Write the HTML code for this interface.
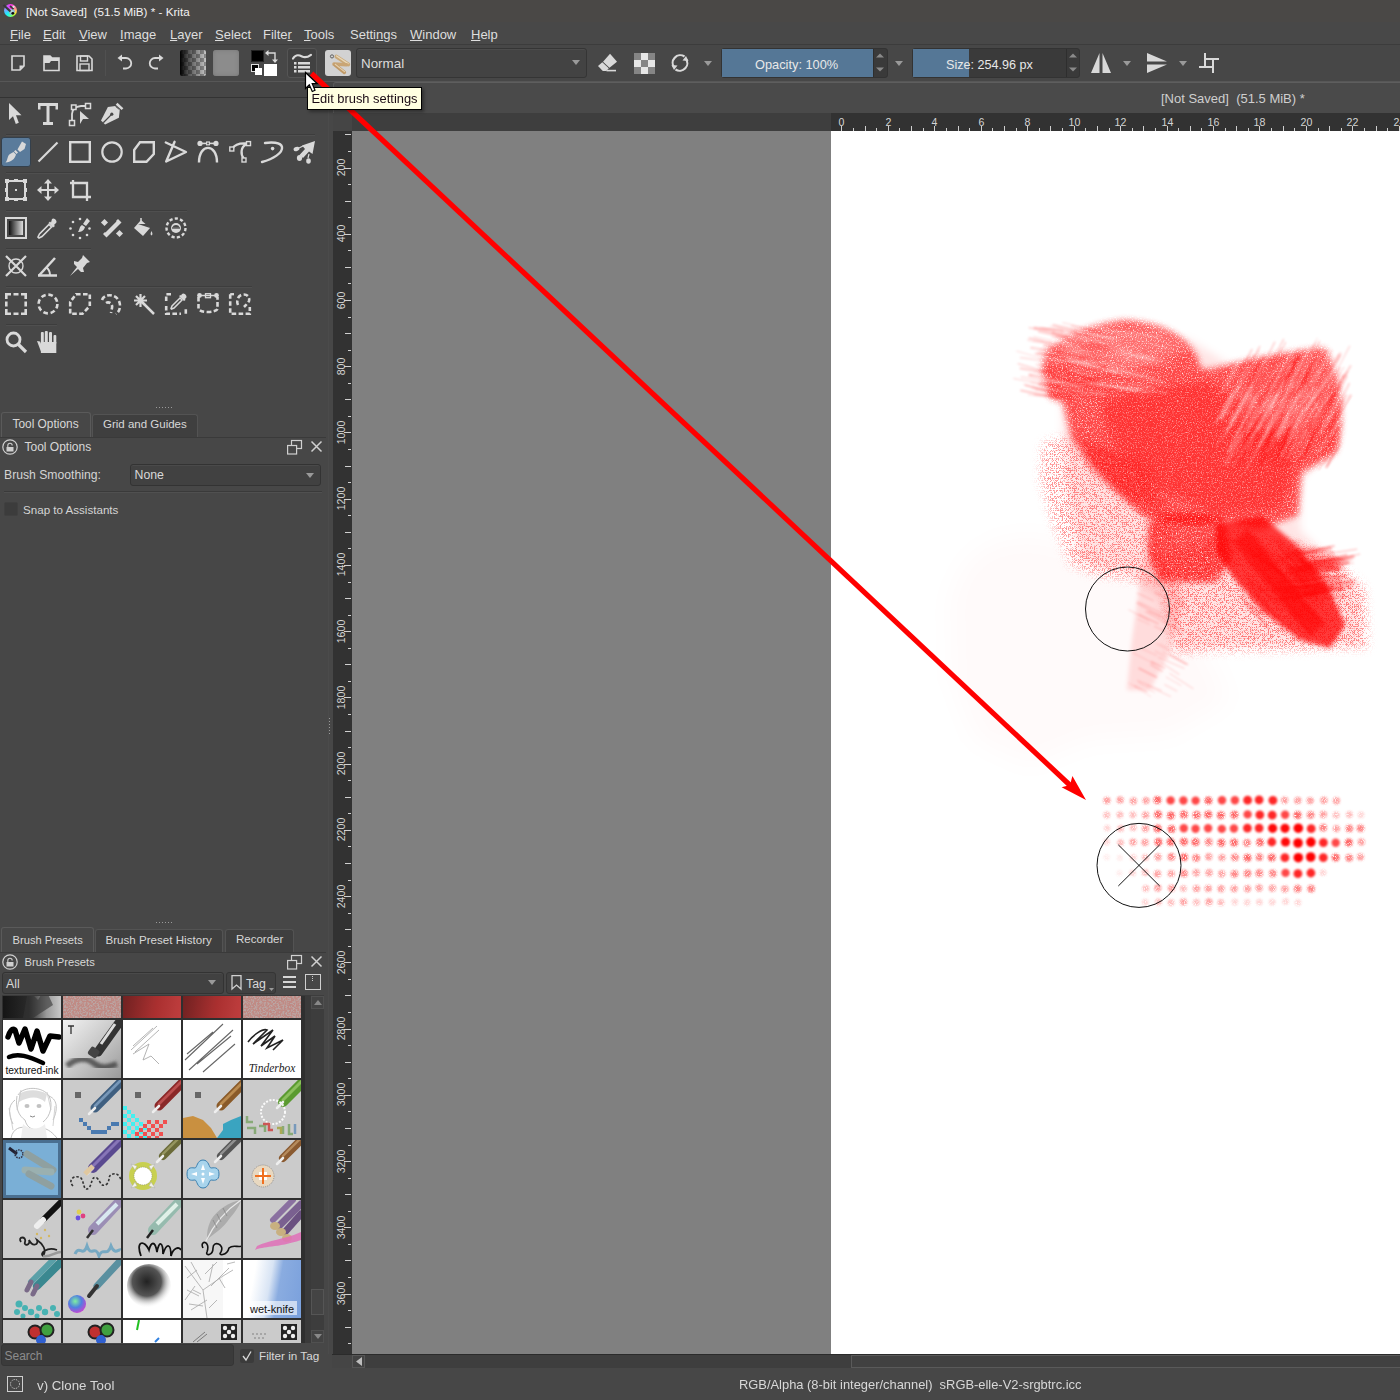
<!DOCTYPE html>
<html><head><meta charset="utf-8"><style>
*{margin:0;padding:0;box-sizing:border-box}
html,body{width:1400px;height:1400px;overflow:hidden;background:#474747;font-family:"Liberation Sans",sans-serif;color:#dcdcdc}
.a{position:absolute}
.t{position:absolute;white-space:nowrap;line-height:1}
svg{position:absolute;overflow:visible}
</style></head><body>
<div class="a" style="left:0px;top:0px;width:1400px;height:22px;background:#4a4846"></div>
<div class="a" style="left:3.6px;top:4px;width:13px;height:13px;border-radius:50%;background:conic-gradient(from 0deg,#ff30f0 0deg,#ff80a0 60deg,#ffe040 110deg,#a0ff40 150deg,#30ffd0 200deg,#20e8ff 230deg,#80a0ff 280deg,#c060ff 320deg,#ff30f0 360deg)"></div>
<div class="a" style="left:9px;top:9px;width:6px;height:6px;border-radius:50%;background:radial-gradient(circle at 40% 40%,#c0e0d0 0,#80b0e0 60%,transparent 70%)"></div>
<svg style="left:0px;top:0px;" width="22" height="22" viewBox="0 0 22 22"><path d="M3.5 5 L10.5 11.5" stroke="#3a3a38" stroke-width="2.2"/><path d="M10 6 L13.5 9" stroke="#3a3a38" stroke-width="1.8"/><circle cx="12.8" cy="13.3" r="1.4" fill="#0a0a0a"/><circle cx="13.6" cy="6.8" r="1.1" fill="#d8f0e0"/></svg>
<div class="t" style="left:26px;top:5.60px;font-size:11.7px;color:#f2f2f2;">[Not Saved]&nbsp; (51.5 MiB) * - Krita</div>
<div class="a" style="left:0px;top:22px;width:1400px;height:22px;background:#484848"></div>
<div class="a" style="left:0px;top:44px;width:1400px;height:1px;background:#3c3c3c"></div>
<div class="t" style="left:10px;top:28.00px;font-size:13px;color:#dedede;"><span style="text-decoration:underline;text-underline-offset:1px">F</span>ile</div>
<div class="t" style="left:43px;top:28.00px;font-size:13px;color:#dedede;"><span style="text-decoration:underline;text-underline-offset:1px">E</span>dit</div>
<div class="t" style="left:79px;top:28.00px;font-size:13px;color:#dedede;"><span style="text-decoration:underline;text-underline-offset:1px">V</span>iew</div>
<div class="t" style="left:120px;top:28.00px;font-size:13px;color:#dedede;"><span style="text-decoration:underline;text-underline-offset:1px">I</span>mage</div>
<div class="t" style="left:170px;top:28.00px;font-size:13px;color:#dedede;"><span style="text-decoration:underline;text-underline-offset:1px">L</span>ayer</div>
<div class="t" style="left:215px;top:28.00px;font-size:13px;color:#dedede;"><span style="text-decoration:underline;text-underline-offset:1px">S</span>elect</div>
<div class="t" style="left:263px;top:28.00px;font-size:13px;color:#dedede;">Filte<span style="text-decoration:underline;text-underline-offset:1px">r</span></div>
<div class="t" style="left:304px;top:28.00px;font-size:13px;color:#dedede;"><span style="text-decoration:underline;text-underline-offset:1px">T</span>ools</div>
<div class="t" style="left:350px;top:28.00px;font-size:13px;color:#dedede;">Setti<span style="text-decoration:underline;text-underline-offset:1px">n</span>gs</div>
<div class="t" style="left:410px;top:28.00px;font-size:13px;color:#dedede;"><span style="text-decoration:underline;text-underline-offset:1px">W</span>indow</div>
<div class="t" style="left:471px;top:28.00px;font-size:13px;color:#dedede;"><span style="text-decoration:underline;text-underline-offset:1px">H</span>elp</div>
<div class="a" style="left:0px;top:45px;width:1400px;height:36px;background:#474747"></div>
<div class="a" style="left:0px;top:81px;width:1400px;height:1px;background:#575757"></div>
<svg style="left:11px;top:55px;" width="15" height="17" viewBox="0 0 15 17"><path d="M1 1 H13 V11 L9 15 H1 Z" fill="none" stroke="#d9d9d9" stroke-width="1.6"/><path d="M13 10.5 H8.5 V15 Z" fill="#d9d9d9"/></svg>
<svg style="left:43px;top:55px;" width="17" height="17" viewBox="0 0 17 17"><path d="M1 1 H7 L9 3 H16 V15.5 H1 Z" fill="none" stroke="#d9d9d9" stroke-width="1.6"/><path d="M1 1 H7 L9 3 H16 V6 H8 L6.5 8 H1 Z" fill="#d9d9d9"/></svg>
<svg style="left:76px;top:55px;" width="17" height="17" viewBox="0 0 17 17"><path d="M1 1 H13 L16 4 V15.5 H1 Z" fill="none" stroke="#d9d9d9" stroke-width="1.6"/><rect x="4.5" y="1" width="7" height="5" fill="none" stroke="#d9d9d9" stroke-width="1.4"/><rect x="4" y="9" width="9" height="6.5" fill="none" stroke="#d9d9d9" stroke-width="1.4"/></svg>
<div class="a" style="left:105px;top:50px;width:1px;height:26px;background:#505050"></div>
<svg style="left:117px;top:54px;" width="16" height="17" viewBox="0 0 16 17"><path d="M4 4 H9 A5 5 0 0 1 9 14.5 H6" fill="none" stroke="#d9d9d9" stroke-width="1.8"/><path d="M0.5 4 L5 0.5 V7.5 Z" fill="#d9d9d9"/></svg>
<svg style="left:148px;top:54px;" width="16" height="17" viewBox="0 0 16 17"><path d="M12 4 H7 A5 5 0 0 0 7 14.5 H10" fill="none" stroke="#d9d9d9" stroke-width="1.8"/><path d="M15.5 4 L11 0.5 V7.5 Z" fill="#d9d9d9"/></svg>
<div class="a" style="left:180px;top:50px;width:26px;height:26px;border-radius:2px;overflow:hidden;background:
linear-gradient(90deg,#000 0%,rgba(0,0,0,0.6) 30%,rgba(0,0,0,0) 100%),
repeating-conic-gradient(#8a8a8a 0 25%,#c4c4c4 0 50%) 0 0/8px 8px"></div>
<div class="a" style="left:213px;top:50px;width:26px;height:26px;background:#8c8c8c;border-radius:3px;box-shadow:inset 0 0 4px #777"></div>
<div class="a" style="left:251px;top:50px;width:13px;height:12px;background:#000;border:1px solid #222"></div>
<div class="a" style="left:264px;top:64px;width:13px;height:12px;background:#fff"></div>
<div class="a" style="left:251px;top:64px;width:8px;height:8px;background:#000;border:1px solid #ddd"></div>
<div class="a" style="left:255px;top:68px;width:7px;height:7px;background:#fff"></div>
<svg style="left:265px;top:50px;" width="13" height="13" viewBox="0 0 13 13"><path d="M2.5 3 H10 V10" fill="none" stroke="#d9d9d9" stroke-width="1.4"/><path d="M0 3 L3.5 0 V6 Z M10 13 L7 9.5 H13 Z" fill="#d9d9d9"/></svg>
<div class="a" style="left:287px;top:48px;width:30px;height:30px;background:#414141;border:1px solid #555;border-radius:3px"></div>
<svg style="left:292px;top:53px;" width="20" height="20" viewBox="0 0 20 20"><path d="M1 5.5 C4 1 7 2 10 3.5 C13 5 16 4 19 1.8" fill="none" stroke="#d9d9d9" stroke-width="2.2" stroke-linecap="round"/><rect x="2" y="9" width="2.5" height="2.5" fill="#d9d9d9"/><rect x="2" y="13" width="2.5" height="2.5" fill="#d9d9d9"/><rect x="2" y="17" width="2.5" height="2.5" fill="#d9d9d9"/><rect x="6" y="9" width="12" height="2.5" fill="#d9d9d9"/><rect x="6" y="13" width="12" height="2.5" fill="#d9d9d9"/><rect x="6" y="17" width="12" height="2.5" fill="#d9d9d9"/></svg>
<div class="a" style="left:325px;top:50px;width:26px;height:26px;background:#d2d2d2;border-radius:3px"></div>
<svg style="left:325px;top:50px;" width="26" height="26" viewBox="0 0 26 26"><circle cx="7" cy="6.4" r="1.6" fill="none" stroke="#555" stroke-width="0.9"/><path d="M11.4 6.6 L23.3 14.4" stroke="#c8a878" stroke-width="3.8" stroke-linecap="round"/><path d="M11.6 6 L23 13.6" stroke="#ead8b8" stroke-width="1.4" stroke-linecap="round"/><path d="M9 14 L21.5 14.8" stroke="#c9a575" stroke-width="3.6" stroke-linecap="round"/><path d="M10 14.8 L19.3 22.3" stroke="#c09a68" stroke-width="3.6" stroke-linecap="round"/><path d="M10.2 14.2 L19.5 21.6" stroke="#e6d0ac" stroke-width="1.2" stroke-linecap="round"/></svg>
<div class="a" style="left:356px;top:48px;width:231px;height:30px;background:#434343;border:1px solid #353535;border-radius:3px;box-shadow:inset 0 1px 0 #4c4c4c"></div>
<div class="t" style="left:361px;top:56.66px;font-size:13.4px;color:#dcdcdc;">Normal</div>
<svg style="left:572px;top:60px;" width="8" height="5" viewBox="0 0 8 5"><path d="M0 0 H8 L4 5 Z" fill="#9a9a9a"/></svg>
<svg style="left:598px;top:53px;" width="20" height="20" viewBox="0 0 20 20"><path d="M12 0.8 L19 8.7 L11.5 14.7 L5 8.7 Z" fill="#d9d9d9"/><path d="M0 13 L4.3 9.3 L10.8 15.3 L8.3 18 H4.8 Z" fill="#d9d9d9"/><path d="M8.5 17.6 H18" stroke="#d9d9d9" stroke-width="1.6"/></svg>
<svg style="left:634px;top:53px;" width="21" height="21" viewBox="0 0 21 21"><rect width="21" height="21" fill="#e6e6e6"/><g fill="#858585"><rect x="0" y="0" width="7" height="7"/><rect x="14" y="0" width="7" height="7"/><rect x="7" y="7" width="7" height="7"/><rect x="0" y="14" width="7" height="7"/><rect x="14" y="14" width="7" height="7"/></g></svg>
<svg style="left:670px;top:53px;" width="20" height="20" viewBox="0 0 20 20"><path d="M4.3 14.5 A7.6 7.6 0 0 1 14.5 3.5" fill="none" stroke="#d9d9d9" stroke-width="2.2"/><path d="M15.7 5.5 A7.6 7.6 0 0 1 5.5 16.5" fill="none" stroke="#d9d9d9" stroke-width="2.2"/><path d="M1.5 12 L7.5 12.5 L4 17 Z M18.5 8 L12.5 7.5 L16 3 Z" fill="#d9d9d9"/></svg>
<svg style="left:704px;top:61px;" width="8" height="5" viewBox="0 0 8 5"><path d="M0 0 H8 L4 5 Z" fill="#9a9a9a"/></svg>
<div class="a" style="left:721px;top:48px;width:167px;height:30px;background:#3a3a3a;border:1px solid #333;border-radius:3px"></div>
<div class="a" style="left:722px;top:49px;width:151px;height:28px;background:#557796"></div>
<div class="t" style="left:755px;top:59.16px;font-size:12.8px;color:#e8e8e8;">Opacity: 100%</div>
<svg style="left:875px;top:53px;" width="10" height="20" viewBox="0 0 10 20"><path d="M1 4.5 L5 0.5 L9 4.5 Z M1 14.5 L5 18.5 L9 14.5 Z" fill="#8a8a8a"/></svg>
<div class="a" style="left:873px;top:49px;width:1px;height:28px;background:#2e2e2e"></div>
<svg style="left:895px;top:61px;" width="8" height="5" viewBox="0 0 8 5"><path d="M0 0 H8 L4 5 Z" fill="#9a9a9a"/></svg>
<div class="a" style="left:912px;top:48px;width:168px;height:30px;background:#3a3a3a;border:1px solid #333;border-radius:3px"></div>
<div class="a" style="left:913px;top:49px;width:56px;height:28px;background:#557796"></div>
<div class="t" style="left:946px;top:59.33px;font-size:12.6px;color:#e8e8e8;">Size: 254.96 px</div>
<svg style="left:1068px;top:53px;" width="10" height="20" viewBox="0 0 10 20"><path d="M1 4.5 L5 0.5 L9 4.5 Z M1 14.5 L5 18.5 L9 14.5 Z" fill="#8a8a8a"/></svg>
<div class="a" style="left:1066px;top:49px;width:1px;height:28px;background:#2e2e2e"></div>
<svg style="left:1090px;top:52px;" width="22" height="22" viewBox="0 0 22 22"><path d="M9.5 1 V21 H1 Z M12.5 1 V21 H21 Z" fill="#d9d9d9"/></svg>
<svg style="left:1123px;top:61px;" width="8" height="5" viewBox="0 0 8 5"><path d="M0 0 H8 L4 5 Z" fill="#9a9a9a"/></svg>
<svg style="left:1146px;top:52px;" width="22" height="22" viewBox="0 0 22 22"><path d="M1 1 L21 9.5 H1 Z M1 12.5 H21 L1 21 Z" fill="#d9d9d9"/></svg>
<svg style="left:1179px;top:61px;" width="8" height="5" viewBox="0 0 8 5"><path d="M0 0 H8 L4 5 Z" fill="#9a9a9a"/></svg>
<svg style="left:1199px;top:52px;" width="21" height="21" viewBox="0 0 21 21"><path d="M6 1 V15.5 M5 7 H20 M0 15 H15 M14 6 V21" fill="none" stroke="#d9d9d9" stroke-width="2"/></svg>
<div class="a" style="left:0px;top:82px;width:333px;height:15px;background:#464646"></div>
<div class="a" style="left:0px;top:97px;width:333px;height:1px;background:#333"></div>
<div class="a" style="left:333px;top:82px;width:1067px;height:31px;background:#4a4a4a;border-top:1px solid #5e5e5e;border-left:1px solid #5a5a5a;border-top-left-radius:3px"></div>
<div class="t" style="left:1161px;top:92.00px;font-size:13px;color:#cfcfcf;">[Not Saved]&nbsp; (51.5 MiB) *</div>
<div class="a" style="left:0px;top:98px;width:333px;height:1270px;background:#474747"></div>
<div class="a" style="left:6px;top:134px;width:309px;height:1px;background:#3d3d3d;box-shadow:0 1px 0 #4f4f4f"></div>
<div class="a" style="left:6px;top:172px;width:84px;height:1px;background:#3d3d3d;box-shadow:0 1px 0 #4f4f4f"></div>
<div class="a" style="left:6px;top:210px;width:181px;height:1px;background:#3d3d3d;box-shadow:0 1px 0 #4f4f4f"></div>
<div class="a" style="left:6px;top:248px;width:85px;height:1px;background:#3d3d3d;box-shadow:0 1px 0 #4f4f4f"></div>
<div class="a" style="left:6px;top:286px;width:246px;height:1px;background:#3d3d3d;box-shadow:0 1px 0 #4f4f4f"></div>
<div class="a" style="left:6px;top:324px;width:51px;height:1px;background:#3d3d3d;box-shadow:0 1px 0 #4f4f4f"></div>
<svg style="left:5px;top:103px;" width="22" height="22" viewBox="0 0 22 22"><path d="M4 0 V17 L8 13.3 L10.8 21 L13.8 19.8 L11 12.3 H16.5 Z" fill="#d9d9d9"/></svg>
<svg style="left:37px;top:103px;" width="22" height="22" viewBox="0 0 22 22"><path d="M1 0 H21 V6.5 H18.5 V3 H12.5 V19 H16 V22 H6 V19 H9.5 V3 H3.5 V6.5 H1 Z" fill="#d9d9d9"/></svg>
<svg style="left:69px;top:103px;" width="22" height="22" viewBox="0 0 22 22"><path d="M3 19 V11 Q3 4 12 3 H18" fill="none" stroke="#d9d9d9" stroke-width="1.8"/><rect x="0.5" y="17.5" width="5" height="5" fill="#474747" stroke="#d9d9d9" stroke-width="1.5"/><rect x="2.5" y="2" width="4.5" height="4.5" fill="#474747" stroke="#d9d9d9" stroke-width="1.5"/><rect x="16.5" y="0.5" width="5" height="5" fill="#474747" stroke="#d9d9d9" stroke-width="1.5"/><path d="M11 8 L20 16 H14 L11 21 Z" fill="#d9d9d9"/></svg>
<svg style="left:101px;top:103px;" width="22" height="22" viewBox="0 0 22 22"><path d="M6.9 4.1 L14.4 3.1 L18.8 6.8 L17.9 14.8 L4.1 21.5 L0 17.6 Z" fill="#d9d9d9"/><path d="M2.3 19.7 L10.6 11.4" stroke="#474747" stroke-width="1.3"/><circle cx="10.8" cy="11.2" r="1.6" fill="#474747"/><path d="M15.6 0.7 L21.5 6.1" stroke="#d9d9d9" stroke-width="2.6"/><path d="M14.5 3.5 L18.3 6.5" stroke="#474747" stroke-width="0.8"/></svg>
<div class="a" style="left:1px;top:137px;width:30px;height:30px;background:#5a7b9b;border:1px solid #34404c;border-radius:3px"></div>
<svg style="left:5px;top:141px;" width="22" height="22" viewBox="0 0 22 22"><path d="M17 0.5 L21 3 L19.5 8 L15 11 L12.5 8.5 L15 4 Z" fill="#d9d9d9"/><path d="M10.5 9 L13 11.5 L11.5 13 L9 10.5 Z" fill="#d9d9d9"/><path d="M8.5 11 L11 13.5 C10 18 6 21 0.5 21.5 C3 19 2 15 5 13 Z" fill="#d9d9d9"/></svg>
<svg style="left:37px;top:141px;" width="22" height="22" viewBox="0 0 22 22"><path d="M1.5 20.5 L20.5 1.5" fill="none" stroke="#d9d9d9" stroke-width="2.2"/></svg>
<svg style="left:69px;top:141px;" width="22" height="22" viewBox="0 0 22 22"><rect x="1.2" y="1.2" width="19.6" height="19.6" fill="none" stroke="#d9d9d9" stroke-width="2.4"/></svg>
<svg style="left:101px;top:141px;" width="22" height="22" viewBox="0 0 22 22"><circle cx="11" cy="11" r="9.7" fill="none" stroke="#d9d9d9" stroke-width="2.2"/></svg>
<svg style="left:133px;top:141px;" width="22" height="22" viewBox="0 0 22 22"><path d="M7 1.2 H20.8 V13 L13.5 20.8 H1.2 V9 Z" fill="none" stroke="#d9d9d9" stroke-width="2.4"/></svg>
<svg style="left:165px;top:141px;" width="22" height="22" viewBox="0 0 22 22"><path d="M0.8 1.5 L21 11 L1.2 20.5 L9.6 0.8" fill="none" stroke="#d9d9d9" stroke-width="2.4" stroke-linecap="round" stroke-linejoin="round"/></svg>
<svg style="left:197px;top:141px;" width="22" height="22" viewBox="0 0 22 22"><path d="M2 21.5 C2 2 20 2 20 21.5" fill="none" stroke="#d9d9d9" stroke-width="2.4"/><path d="M3 2.4 H19" fill="none" stroke="#d9d9d9" stroke-width="1.6"/><circle cx="3" cy="2.4" r="2.6" fill="#d9d9d9"/><circle cx="19" cy="2.4" r="2.6" fill="#d9d9d9"/><rect x="9" y="0.4" width="4" height="4" fill="#d9d9d9"/><rect x="10.2" y="1.6" width="1.6" height="1.6" fill="#474747"/></svg>
<svg style="left:229px;top:141px;" width="22" height="22" viewBox="0 0 22 22"><path d="M3.5 7.5 C6 3 12 2 18 2.5 M17 3.5 C12 6 11 13 15 18" fill="none" stroke="#d9d9d9" stroke-width="2.3"/><rect x="0.8" y="6" width="4" height="4" fill="#474747" stroke="#d9d9d9" stroke-width="1.4"/><rect x="17.5" y="0.6" width="4" height="4" fill="#474747" stroke="#d9d9d9" stroke-width="1.4"/><rect x="13" y="17" width="4" height="4" fill="#474747" stroke="#d9d9d9" stroke-width="1.4"/></svg>
<svg style="left:261px;top:141px;" width="22" height="22" viewBox="0 0 22 22"><path d="M1 21 C12 18 22 12 21 6 C20 1 10 1 4 2" fill="none" stroke="#d9d9d9" stroke-width="2.4" stroke-linecap="round"/><circle cx="11.6" cy="7.6" r="1.8" fill="#d9d9d9"/></svg>
<svg style="left:293px;top:141px;" width="22" height="22" viewBox="0 0 22 22"><path d="M22 0 L19.5 13 L16 10.5 L10 17 L6.5 14 L12 8 L9 4.5 Z" fill="#d9d9d9"/><ellipse cx="3.5" cy="8" rx="3" ry="2" transform="rotate(-20 3.5 8)" fill="#d9d9d9"/><ellipse cx="6.5" cy="17" rx="2.6" ry="3" fill="#d9d9d9"/><ellipse cx="15.5" cy="20" rx="2.3" ry="2.8" fill="#d9d9d9"/><path d="M6 7 L10 5 M8 14 L11 11 M15 17 L16 13" stroke="#d9d9d9" stroke-width="1.2"/></svg>
<svg style="left:5px;top:179px;" width="22" height="22" viewBox="0 0 22 22"><rect x="2" y="2" width="18" height="18" fill="none" stroke="#d9d9d9" stroke-width="2"/><g fill="#d9d9d9"><rect x="0" y="0" width="4" height="4"/><rect x="18" y="0" width="4" height="4"/><rect x="0" y="18" width="4" height="4"/><rect x="18" y="18" width="4" height="4"/><rect x="9" y="0" width="4" height="3"/><rect x="9" y="19" width="4" height="3"/><rect x="0" y="9" width="3" height="4"/><rect x="19" y="9" width="3" height="4"/><rect x="10" y="10" width="2" height="2"/></g></svg>
<svg style="left:37px;top:179px;" width="22" height="22" viewBox="0 0 22 22"><path d="M11 2 V20 M2 11 H20" fill="none" stroke="#d9d9d9" stroke-width="2"/><path d="M11 0 L15 4.5 H7 Z M11 22 L15 17.5 H7 Z M0 11 L4.5 7 V15 Z M22 11 L17.5 7 V15 Z" fill="#d9d9d9"/></svg>
<svg style="left:69px;top:179px;" width="22" height="22" viewBox="0 0 22 22"><path d="M4 1 V18 H22 M1 4 H18 V22" fill="none" stroke="#d9d9d9" stroke-width="2.3"/></svg>
<div class="a" style="left:5px;top:217px;width:22px;height:22px;border:2px solid #d9d9d9;"><div style="position:absolute;left:2px;top:2px;right:2px;bottom:2px;background:linear-gradient(90deg,#111,#ddd)"></div></div>
<svg style="left:37px;top:217px;" width="22" height="22" viewBox="0 0 22 22"><path d="M15 2 C17 0 21 4 19 6 L17 8 L18 9 L16 10.5 L11.5 6 L13 4.5 L14 5.5 Z" fill="#d9d9d9"/><path d="M12 7.5 L14.5 10 L5 19.5 L2 21 L1 20 L2.5 17 Z" fill="none" stroke="#d9d9d9" stroke-width="1.6"/></svg>
<svg style="left:69px;top:217px;" width="22" height="22" viewBox="0 0 22 22"><path d="M18 1 L21 4 L17 9 L14 7 Z M13 8 L16 10 C15 14 12 15 9 15 C11 12 10 10 13 8 Z" fill="#d9d9d9"/><g fill="#d9d9d9"><circle cx="11" cy="2" r="1.3"/><circle cx="4" cy="5" r="1.3"/><circle cx="1.5" cy="11.5" r="1.3"/><circle cx="4" cy="18" r="1.3"/><circle cx="11" cy="21" r="1.3"/><circle cx="18" cy="18" r="1.3"/><circle cx="20.5" cy="11.5" r="1.3"/></g></svg>
<svg style="left:101px;top:217px;" width="22" height="22" viewBox="0 0 22 22"><path d="M2 17 L17 2 L20.5 5.5 L5.5 20.5 Z" fill="#d9d9d9"/><rect x="1" y="3" width="5" height="5" transform="rotate(45 3.5 5.5)" fill="#d9d9d9"/><rect x="16" y="14" width="5" height="5" transform="rotate(45 18.5 16.5)" fill="#d9d9d9"/><path d="M4 15 L15 4" stroke="#474747" stroke-width="1.2"/></svg>
<svg style="left:133px;top:217px;" width="22" height="22" viewBox="0 0 22 22"><path d="M1 11 L8 3 L17 11 L10 19 Z" fill="#d9d9d9"/><path d="M5 7 H14 L17 11" fill="#474747"/><path d="M8 1 V4" stroke="#d9d9d9" stroke-width="1.5"/><path d="M18.5 14 C17.5 16 17 17.5 18.5 18.5 C20 17.5 19.5 16 18.5 14 Z" fill="#d9d9d9"/></svg>
<svg style="left:165px;top:217px;" width="22" height="22" viewBox="0 0 22 22"><circle cx="11" cy="11" r="9.5" fill="none" stroke="#d9d9d9" stroke-width="2.4" stroke-dasharray="3.2 2.2"/><circle cx="11" cy="11" r="5" fill="#d9d9d9"/><path d="M7 11 H15" stroke="#474747" stroke-width="1.3"/><path d="M7.3 10.5 A4 4 0 0 1 14.7 10.5" fill="#474747"/></svg>
<svg style="left:5px;top:255px;" width="22" height="22" viewBox="0 0 22 22"><circle cx="11" cy="11" r="7" fill="none" stroke="#d9d9d9" stroke-width="1.4"/><path d="M1 1 L21 21 M21 1 L1 21" fill="none" stroke="#d9d9d9" stroke-width="2.2"/></svg>
<svg style="left:37px;top:255px;" width="22" height="22" viewBox="0 0 22 22"><path d="M2 20.5 L18 3" fill="none" stroke="#d9d9d9" stroke-width="2.5"/><path d="M1 20.5 H20" fill="none" stroke="#d9d9d9" stroke-width="2.5"/><path d="M9 12 A10 10 0 0 1 13 20" fill="none" stroke="#d9d9d9" stroke-width="2"/></svg>
<svg style="left:69px;top:255px;" width="22" height="22" viewBox="0 0 22 22"><path d="M14 0 L21 7 L18 8 L14 13 L15 17 L12 17 L9 14 L1 21 L8 12 L5 9 L5 6 L9 7 L13 3 Z" fill="#d9d9d9"/></svg>
<svg style="left:5px;top:293px;" width="22" height="22" viewBox="0 0 22 22"><path d="M1.3 6 V1.3 H6 M16 1.3 H20.7 V6 M20.7 16 V20.7 H16 M6 20.7 H1.3 V16 M8.5 1.3 H13.5 M20.7 8.5 V13.5 M13.5 20.7 H8.5 M1.3 13.5 V8.5" fill="none" stroke="#d9d9d9" stroke-width="2.6"/></svg>
<svg style="left:37px;top:293px;" width="22" height="22" viewBox="0 0 22 22"><circle cx="11" cy="11" r="9.4" fill="none" stroke="#d9d9d9" stroke-width="2.6" stroke-dasharray="4.6 2.8"/></svg>
<svg style="left:69px;top:293px;" width="22" height="22" viewBox="0 0 22 22"><path d="M7 1.2 H20.8 V13 L13.5 20.8 H1.2 V9 Z" fill="none" stroke="#d9d9d9" stroke-width="2.6" stroke-dasharray="4.6 2.4"/></svg>
<svg style="left:101px;top:293px;" width="22" height="22" viewBox="0 0 22 22"><path d="M1 7 C3 1 14 0 18 8 C20 13 19 18 15 21 M5 10 C8 8 12 11 11 15 L10 20" fill="none" stroke="#d9d9d9" stroke-width="2.6" stroke-dasharray="4.6 2.4"/></svg>
<svg style="left:133px;top:293px;" width="22" height="22" viewBox="0 0 22 22"><path d="M9 9 L21 21" stroke="#d9d9d9" stroke-width="2.5"/><path d="M7.5 1 V14 M1 7.5 H14 M3 3 L12 12 M12 3 L3 12" stroke="#d9d9d9" stroke-width="2.2"/></svg>
<svg style="left:165px;top:293px;" width="22" height="22" viewBox="0 0 22 22"><path d="M1.2 8 V1.2 H7 M1.2 13 V20.8 H16 M20.8 20.8 V15" fill="none" stroke="#d9d9d9" stroke-width="2.6" stroke-dasharray="4.6 2.4"/><path d="M17 1 C19 -1 23 3 21 5 L20 6 L20.5 7 L19 8 L14 3 L15.5 2 L16 2.5 Z" fill="#d9d9d9"/><path d="M15 5 L17 7 L9 15 L6.5 16 L6 15.5 L7 13 Z" fill="none" stroke="#d9d9d9" stroke-width="1.5"/></svg>
<svg style="left:197px;top:293px;" width="22" height="22" viewBox="0 0 22 22"><path d="M1.5 4 V16 C3 20 19 20 20.5 16 V4" fill="none" stroke="#d9d9d9" stroke-width="2.6" stroke-dasharray="4.6 2.4"/><circle cx="2.5" cy="2.5" r="2.4" fill="#d9d9d9"/><circle cx="19.5" cy="2.5" r="2.4" fill="#d9d9d9"/><rect x="8.5" y="0.7" width="5" height="4" fill="#474747" stroke="#d9d9d9" stroke-width="1.3"/><path d="M3 2.5 H19" fill="none" stroke="#d9d9d9" stroke-width="1.5"/></svg>
<svg style="left:229px;top:293px;" width="22" height="22" viewBox="0 0 22 22"><path d="M1.2 1.2 V20.8 H20.8 V14" fill="none" stroke="#d9d9d9" stroke-width="2.6" stroke-dasharray="4.6 2.4"/><path d="M1.2 1.2 H5" fill="none" stroke="#d9d9d9" stroke-width="2.3"/><path d="M9 12 C7 8 9 2 14 1.5 C19 1 21 5 20 8 C19 10 17 12 15 14" fill="none" stroke="#d9d9d9" stroke-width="2.6" stroke-dasharray="4.6 2.4"/></svg>
<svg style="left:5px;top:331px;" width="22" height="22" viewBox="0 0 22 22"><circle cx="8.5" cy="8.5" r="6.5" fill="none" stroke="#d9d9d9" stroke-width="2.8"/><path d="M13 13 L21 21" stroke="#d9d9d9" stroke-width="3.2"/></svg>
<svg style="left:37px;top:331px;" width="22" height="22" viewBox="0 0 22 22"><rect x="3.9" y="1" width="2.9" height="12" rx="1" fill="#d9d9d9"/><rect x="7.8" y="0" width="3" height="12" rx="1" fill="#d9d9d9"/><rect x="12" y="1" width="3" height="12" rx="1" fill="#d9d9d9"/><rect x="16.5" y="4" width="2.8" height="9" rx="1" fill="#d9d9d9"/><rect x="3.9" y="11" width="15.4" height="11" fill="#d9d9d9"/><path d="M0 10 L3 10.5 L5 15 V22 H4.5 Z" fill="#d9d9d9"/></svg>
<div class="a" style="left:156px;top:407px;width:17px;height:1px;background:repeating-linear-gradient(90deg,#9a9a9a 0 1px,transparent 1px 3px)"></div>
<div class="a" style="left:156px;top:922px;width:17px;height:1px;background:repeating-linear-gradient(90deg,#9a9a9a 0 1px,transparent 1px 3px)"></div>
<div class="a" style="left:328px;top:99px;width:1px;height:1255px;background:#4b4b4b"></div>
<div class="a" style="left:329px;top:718px;width:1px;height:17px;background:repeating-linear-gradient(180deg,#9a9a9a 0 1px,transparent 1px 3px)"></div>
<div class="a" style="left:1px;top:412px;width:90px;height:25px;background:#474747;border:1px solid #5a5a5a;border-bottom:none;border-radius:3px 3px 0 0"></div>
<div class="t" style="left:12.5px;top:418.93px;font-size:11.9px;color:#d8d8d8;">Tool Options</div>
<div class="a" style="left:92px;top:414px;width:106px;height:23px;background:#3f3f3f;border:1px solid #535353;border-bottom:none;border-radius:3px 3px 0 0"></div>
<div class="t" style="left:103px;top:419.27px;font-size:11.5px;color:#d8d8d8;">Grid and Guides</div>
<div class="a" style="left:0px;top:437px;width:326px;height:1px;background:#3a3a3a"></div>
<svg style="left:2px;top:439px;" width="16" height="16" viewBox="0 0 16 16"><circle cx="8" cy="8" r="7.2" fill="none" stroke="#cfcfcf" stroke-width="1.2"/><rect x="4.5" y="8" width="7" height="4.5" fill="#cfcfcf"/><path d="M5.8 8 V6.5 A2.2 2.2 0 0 1 10.2 6.5" fill="none" stroke="#cfcfcf" stroke-width="1.1"/></svg>
<div class="t" style="left:24.5px;top:440.84px;font-size:12px;color:#d8d8d8;">Tool Options</div>
<svg style="left:287px;top:440px;" width="15" height="15" viewBox="0 0 15 15"><rect x="4.5" y="0.5" width="10" height="8" fill="none" stroke="#d0d0d0" stroke-width="1.2"/><rect x="0.6" y="5.5" width="9" height="8.5" fill="#474747" stroke="#d0d0d0" stroke-width="1.2"/></svg>
<svg style="left:311px;top:441px;" width="11" height="11" viewBox="0 0 11 11"><path d="M0.5 0.5 L10.5 10.5 M10.5 0.5 L0.5 10.5" stroke="#d0d0d0" stroke-width="1.5"/></svg>
<div class="t" style="left:4px;top:468.67px;font-size:12.2px;color:#d4d4d4;">Brush Smoothing:</div>
<div class="a" style="left:130px;top:464px;width:191px;height:22px;background:#414141;border:1px solid #333;border-radius:3px;box-shadow:inset 0 1px 0 #4a4a4a"></div>
<div class="t" style="left:134.5px;top:468.59px;font-size:12.3px;color:#d8d8d8;">None</div>
<svg style="left:306px;top:473px;" width="8" height="5" viewBox="0 0 8 5"><path d="M0 0 H8 L4 5 Z" fill="#9a9a9a"/></svg>
<div class="a" style="left:4px;top:491px;width:318px;height:1px;background:#3a3a3a;box-shadow:0 1px 0 #505050"></div>
<div class="a" style="left:4px;top:502px;width:14px;height:14px;background:#3c3c3c;border:1px solid #404040;border-radius:2px"></div>
<div class="t" style="left:23px;top:504.18px;font-size:11.6px;color:#d4d4d4;">Snap to Assistants</div>
<div class="a" style="left:1px;top:927px;width:93px;height:25px;background:#474747;border:1px solid #5a5a5a;border-bottom:none;border-radius:3px 3px 0 0"></div>
<div class="t" style="left:12.5px;top:934.52px;font-size:11.2px;color:#d8d8d8;">Brush Presets</div>
<div class="a" style="left:95px;top:929px;width:128px;height:23px;background:#3f3f3f;border:1px solid #535353;border-bottom:none;border-radius:3px 3px 0 0"></div>
<div class="t" style="left:105.5px;top:934.18px;font-size:11.6px;color:#d8d8d8;">Brush Preset History</div>
<div class="a" style="left:225px;top:929px;width:69px;height:23px;background:#3f3f3f;border:1px solid #535353;border-bottom:none;border-radius:3px 3px 0 0"></div>
<div class="t" style="left:236px;top:934.27px;font-size:11.5px;color:#d8d8d8;">Recorder</div>
<div class="a" style="left:0px;top:952px;width:326px;height:1px;background:#3a3a3a"></div>
<svg style="left:2px;top:954px;" width="16" height="16" viewBox="0 0 16 16"><circle cx="8" cy="8" r="7.2" fill="none" stroke="#cfcfcf" stroke-width="1.2"/><rect x="4.5" y="8" width="7" height="4.5" fill="#cfcfcf"/><path d="M5.8 8 V6.5 A2.2 2.2 0 0 1 10.2 6.5" fill="none" stroke="#cfcfcf" stroke-width="1.1"/></svg>
<div class="t" style="left:24.5px;top:956.52px;font-size:11.2px;color:#d8d8d8;">Brush Presets</div>
<svg style="left:287px;top:955px;" width="15" height="15" viewBox="0 0 15 15"><rect x="4.5" y="0.5" width="10" height="8" fill="none" stroke="#d0d0d0" stroke-width="1.2"/><rect x="0.6" y="5.5" width="9" height="8.5" fill="#474747" stroke="#d0d0d0" stroke-width="1.2"/></svg>
<svg style="left:311px;top:956px;" width="11" height="11" viewBox="0 0 11 11"><path d="M0.5 0.5 L10.5 10.5 M10.5 0.5 L0.5 10.5" stroke="#d0d0d0" stroke-width="1.5"/></svg>
<div class="a" style="left:2px;top:972px;width:222px;height:22px;background:#414141;border:1px solid #333;border-radius:3px;box-shadow:inset 0 1px 0 #4a4a4a"></div>
<div class="t" style="left:6px;top:977.59px;font-size:12.3px;color:#d8d8d8;">All</div>
<svg style="left:208px;top:980px;" width="8" height="5" viewBox="0 0 8 5"><path d="M0 0 H8 L4 5 Z" fill="#9a9a9a"/></svg>
<div class="a" style="left:226px;top:972px;width:50px;height:22px;background:#414141;border:1px solid #353535;border-radius:3px"></div>
<svg style="left:231px;top:975px;" width="11" height="15" viewBox="0 0 11 15"><path d="M1 0.7 H10 V14 L5.5 10 L1 14 Z" fill="none" stroke="#d0d0d0" stroke-width="1.3"/></svg>
<div class="t" style="left:246px;top:977.59px;font-size:12.3px;color:#d8d8d8;">Tag</div>
<svg style="left:269px;top:988px;" width="5" height="3" viewBox="0 0 5 3"><path d="M0 0 H5 L2.5 3 Z" fill="#999"/></svg>
<svg style="left:283px;top:976px;" width="13" height="12" viewBox="0 0 13 12"><path d="M0 1 H13 M0 6 H13 M0 11 H13" stroke="#d6d6d6" stroke-width="2"/></svg>
<div class="a" style="left:305px;top:974px;width:16px;height:16px;border:1px solid #cfcfcf"></div>
<div class="a" style="left:312px;top:976px;width:1px;height:6px;background:repeating-linear-gradient(180deg,#ccc 0 1px,transparent 1px 2px)"></div>
<div class="a" style="left:2px;top:995px;width:322px;height:348px;background:#3a3a3a"></div>
<div class="a" style="left:311px;top:995px;width:13px;height:348px;background:#3d3d3d"></div>
<div class="a" style="left:311px;top:996px;width:13px;height:13px;background:#434343;border:1px solid #505050"></div>
<svg style="left:314px;top:1000px;" width="8" height="5" viewBox="0 0 8 5"><path d="M0 5 H8 L4 0 Z" fill="#888"/></svg>
<div class="a" style="left:311px;top:1289px;width:13px;height:26px;background:#444;border:1px solid #555"></div>
<div class="a" style="left:311px;top:1330px;width:13px;height:13px;background:#434343;border:1px solid #505050"></div>
<svg style="left:314px;top:1334px;" width="8" height="5" viewBox="0 0 8 5"><path d="M0 0 H8 L4 5 Z" fill="#888"/></svg>
<div class="a" style="left:2px;top:996px;width:303px;height:347px;overflow:hidden;background:#2f2f2f"><svg style="left:0;top:0" width="0" height="0"><defs><pattern id="noiseG" width="6" height="6" patternUnits="userSpaceOnUse"><rect width="3" height="3" fill="#7a7a7a"/><rect x="3" y="3" width="3" height="3" fill="#8a8a8a"/></pattern><filter id="tb1"><feGaussianBlur stdDeviation="1.5"/></filter><filter id="tb05"><feGaussianBlur stdDeviation="0.4"/></filter><filter id="tnoise" x="0" y="0" width="100%" height="100%"><feTurbulence type="fractalNoise" baseFrequency="0.6" numOctaves="2" seed="2" result="n"/><feColorMatrix in="n" type="matrix" values="0 0 0 0 0.48  0 0 0 0 0.48  0 0 0 0 0.48  0 0 0 -5 2.8" result="na"/><feComposite in="na" in2="SourceGraphic" operator="in"/></filter></defs></svg><div class="a" style="left:1px;top:-36px;width:58px;height:58px;background:linear-gradient(90deg,#151515 0%,#2a2a2a 45%,#9a9a9a 75%,#c8c8c8 100%);;overflow:hidden"><svg style="left:0px;top:0px" width="58" height="58" viewBox="0 0 58 58"><path d="M20 58 L25 30 L35 40 L42 28 L50 45 L30 58 Z" fill="#333" opacity="0.6"/></svg></div><div class="a" style="left:61px;top:-36px;width:58px;height:58px;background:#c08a84;;overflow:hidden"><svg style="left:0px;top:0px" width="58" height="58" viewBox="0 0 58 58"><rect width="58" height="58" fill="#7a7a7a" filter="url(#tnoise)" opacity="0.6"/></svg></div><div class="a" style="left:121px;top:-36px;width:58px;height:58px;background:linear-gradient(100deg,#6e2222,#b83434 60%,#d04444);;overflow:hidden"><svg style="left:0px;top:0px" width="58" height="58" viewBox="0 0 58 58"><rect width="58" height="58" fill="#000" opacity="0.08"/></svg></div><div class="a" style="left:181px;top:-36px;width:58px;height:58px;background:linear-gradient(100deg,#6e2222,#b83434 60%,#d04444);;overflow:hidden"><svg style="left:0px;top:0px" width="58" height="58" viewBox="0 0 58 58"><rect width="58" height="58" fill="#000" opacity="0.08"/></svg></div><div class="a" style="left:241px;top:-36px;width:58px;height:58px;background:#c08a84;;overflow:hidden"><svg style="left:0px;top:0px" width="58" height="58" viewBox="0 0 58 58"><rect width="58" height="58" fill="#7a7a7a" filter="url(#tnoise)" opacity="0.6"/></svg></div><div class="a" style="left:1px;top:24px;width:58px;height:58px;background:#ffffff;;overflow:hidden"><svg style="left:0px;top:0px" width="58" height="58" viewBox="0 0 58 58"><path d="M5 17 C7 11 9 8 12 10 L16 23 L22 9 L28 29 L34 11 L40 31 L47 16 L56 17" stroke="#000" stroke-width="5.5" fill="none" stroke-linejoin="round" stroke-linecap="round"/><path d="M6 37 C15 33 25 36 40 43" stroke="#000" stroke-width="4.5" fill="none" stroke-linecap="round"/><text x="29" y="54" text-anchor="middle" font-size="10.2" font-family="Liberation Sans" fill="#111">textured-ink</text></svg></div><div class="a" style="left:61px;top:24px;width:58px;height:58px;background:linear-gradient(135deg,#f2f2f2 0%,#c0c0c0 60%,#9a9a9a 100%);;overflow:hidden"><svg style="left:0px;top:0px" width="58" height="58" viewBox="0 0 58 58"><path d="M58 0 L35 32" stroke="#333" stroke-width="9" stroke-linecap="round"/><path d="M52 4 L38 24" stroke="#ddd" stroke-width="3"/><rect x="26" y="28" width="10" height="9" rx="2" transform="rotate(35 31 32)" fill="#444"/><path d="M4 46 C15 36 25 38 32 44 C40 50 48 46 54 44" stroke="#333" stroke-width="6" fill="none" opacity="0.7" filter="url(#tb1)"/><path d="M5 6 H11 M8 6 V14" stroke="#333" stroke-width="1.3"/></svg></div><div class="a" style="left:121px;top:24px;width:58px;height:58px;background:#ffffff;;overflow:hidden"><svg style="left:0px;top:0px" width="58" height="58" viewBox="0 0 58 58"><path d="M8 30 L34 6 M10 26 L30 8 M12 32 L36 10 M10 34 L26 24 L20 40 L28 36 L36 44" stroke="#aaa" stroke-width="0.9" fill="none"/></svg></div><div class="a" style="left:181px;top:24px;width:58px;height:58px;background:#ffffff;;overflow:hidden"><svg style="left:0px;top:0px" width="58" height="58" viewBox="0 0 58 58"><path d="M2 40 L40 4 M6 50 L50 10 M14 44 L48 16 M4 34 L30 12 M20 52 L52 24" stroke="#555" stroke-width="1.1" fill="none" opacity="0.9"/></svg></div><div class="a" style="left:241px;top:24px;width:58px;height:58px;background:#ffffff;;overflow:hidden"><svg style="left:0px;top:0px" width="58" height="58" viewBox="0 0 58 58"><path d="M5 22 C10 15 20 8 24 10 L10 24 L30 10 L18 26 L32 16 L24 28 L40 20 L30 30" stroke="#222" stroke-width="1.6" fill="none"/><text x="29" y="52" text-anchor="middle" font-size="11.5" font-family="Liberation Serif" font-style="italic" fill="#222">Tinderbox</text></svg></div><div class="a" style="left:1px;top:84px;width:58px;height:58px;background:#ffffff;;overflow:hidden"><svg style="left:0px;top:0px" width="58" height="58" viewBox="0 0 58 58"><path d="M15 15 C20 6 40 6 46 16 C50 24 48 36 40 42 M14 16 C12 28 16 36 22 40 M22 40 C24 48 30 52 40 48 M8 58 C10 48 18 46 24 48 M40 48 C48 50 52 56 54 58 M12 20 C4 26 6 36 10 44 M46 16 C56 20 54 32 50 40" stroke="#bbb" stroke-width="0.9" fill="none"/><ellipse cx="24" cy="26" rx="2.5" ry="2" fill="#999" opacity="0.6"/><ellipse cx="36" cy="26" rx="2.5" ry="2" fill="#999" opacity="0.6"/><path d="M27 36 Q30 38 32 36" stroke="#888" fill="none"/><path d="M16 14 C22 10 34 8 44 14 L42 22 C36 16 26 16 16 22 Z" fill="#ddd"/><path d="M20 44 C26 50 36 50 42 44 L44 58 H18 Z" fill="#eee"/><path d="M6 28 L10 50 M52 26 L50 46 M18 10 L14 30 M44 12 L48 30" stroke="#c8c8c8" stroke-width="0.8"/></svg></div><div class="a" style="left:61px;top:84px;width:58px;height:58px;background:#cbcbcb;;overflow:hidden"><svg style="left:0px;top:0px" width="58" height="58" viewBox="0 0 58 58"><rect x="12" y="12" width="6" height="6" fill="#666"/><path d="M76 -16 L32 28" stroke="#3f5f80" stroke-width="9" stroke-linecap="round"/><path d="M74 -16 L32 26" stroke="#8fb0d0" stroke-width="2.7" stroke-linecap="round" opacity="0.7"/><path d="M32 28 L26 34" stroke="#eee" stroke-width="2.5" stroke-linecap="round"/><rect x="16" y="38" width="4" height="4" fill="#4a7ab0"/><rect x="20" y="42" width="4" height="4" fill="#4a7ab0"/><rect x="24" y="46" width="4" height="4" fill="#4a7ab0"/><rect x="28" y="50" width="4" height="4" fill="#4a7ab0"/><rect x="32" y="50" width="4" height="4" fill="#4a7ab0"/><rect x="36" y="50" width="4" height="4" fill="#4a7ab0"/><rect x="40" y="50" width="4" height="4" fill="#4a7ab0"/><rect x="44" y="46" width="4" height="4" fill="#4a7ab0"/><rect x="48" y="42" width="4" height="4" fill="#4a7ab0"/><rect x="52" y="42" width="4" height="4" fill="#4a7ab0"/></svg></div><div class="a" style="left:121px;top:84px;width:58px;height:58px;background:#cbcbcb;;overflow:hidden"><svg style="left:0px;top:0px" width="58" height="58" viewBox="0 0 58 58"><rect x="12" y="12" width="6" height="6" fill="#666"/><path d="M80 -18 L36 26" stroke="#8a2828" stroke-width="9" stroke-linecap="round"/><path d="M78 -18 L36 24" stroke="#d06060" stroke-width="2.7" stroke-linecap="round" opacity="0.7"/><path d="M36 26 L30 32" stroke="#eee" stroke-width="2.5" stroke-linecap="round"/><rect x="0" y="26" width="4" height="4" fill="#44f0f0"/><rect x="0" y="34" width="4" height="4" fill="#44f0f0"/><rect x="0" y="42" width="4" height="4" fill="#44f0f0"/><rect x="0" y="50" width="4" height="4" fill="#44f0f0"/><rect x="4" y="30" width="4" height="4" fill="#44f0f0"/><rect x="4" y="38" width="4" height="4" fill="#44f0f0"/><rect x="4" y="46" width="4" height="4" fill="#44f0f0"/><rect x="4" y="54" width="4" height="4" fill="#44f0f0"/><rect x="8" y="34" width="4" height="4" fill="#44f0f0"/><rect x="8" y="42" width="4" height="4" fill="#44f0f0"/><rect x="8" y="50" width="4" height="4" fill="#44f0f0"/><rect x="12" y="38" width="4" height="4" fill="#44f0f0"/><rect x="12" y="46" width="4" height="4" fill="#44f0f0"/><rect x="12" y="54" width="4" height="4" fill="#44f0f0"/><rect x="16" y="42" width="4" height="4" fill="#44f0f0"/><rect x="16" y="50" width="4" height="4" fill="#44f0f0"/><rect x="20" y="46" width="4" height="4" fill="#44f0f0"/><rect x="20" y="54" width="4" height="4" fill="#44f0f0"/><rect x="12" y="52" width="4" height="4" fill="#f05050"/><rect x="16" y="48" width="4" height="4" fill="#f05050"/><rect x="16" y="56" width="4" height="4" fill="#f05050"/><rect x="20" y="44" width="4" height="4" fill="#f05050"/><rect x="20" y="52" width="4" height="4" fill="#f05050"/><rect x="24" y="40" width="4" height="4" fill="#f05050"/><rect x="24" y="48" width="4" height="4" fill="#f05050"/><rect x="24" y="56" width="4" height="4" fill="#f05050"/><rect x="28" y="44" width="4" height="4" fill="#f05050"/><rect x="28" y="52" width="4" height="4" fill="#f05050"/><rect x="32" y="40" width="4" height="4" fill="#f05050"/><rect x="32" y="48" width="4" height="4" fill="#f05050"/><rect x="32" y="56" width="4" height="4" fill="#f05050"/><rect x="36" y="44" width="4" height="4" fill="#f05050"/><rect x="36" y="52" width="4" height="4" fill="#f05050"/><rect x="40" y="40" width="4" height="4" fill="#f05050"/></svg></div><div class="a" style="left:181px;top:84px;width:58px;height:58px;background:#cbcbcb;;overflow:hidden"><svg style="left:0px;top:0px" width="58" height="58" viewBox="0 0 58 58"><rect x="12" y="12" width="6" height="6" fill="#666"/><path d="M82 -18 L38 26" stroke="#8a5a28" stroke-width="9" stroke-linecap="round"/><path d="M80 -18 L38 24" stroke="#d0a060" stroke-width="2.7" stroke-linecap="round" opacity="0.7"/><path d="M38 26 L32 32" stroke="#eee" stroke-width="2.5" stroke-linecap="round"/><path d="M0 38 L10 36 L20 40 L28 48 L34 58 H0 Z" fill="#c99040"/><path d="M34 58 L40 50 V44 L48 40 L58 36 V58 Z" fill="#3aa4c0"/></svg></div><div class="a" style="left:241px;top:84px;width:58px;height:58px;background:#cbcbcb;;overflow:hidden"><svg style="left:0px;top:0px" width="58" height="58" viewBox="0 0 58 58"><path d="M84 -22 L40 22" stroke="#5a9a30" stroke-width="10" stroke-linecap="round"/><path d="M82 -22 L40 20" stroke="#a0d070" stroke-width="3.0" stroke-linecap="round" opacity="0.7"/><path d="M40 22 L34 28" stroke="#eee" stroke-width="2.5" stroke-linecap="round"/><circle cx="30" cy="32" r="12" fill="none" stroke="#fff" stroke-width="2" stroke-dasharray="2 1.5" opacity="0.9"/><path d="M4 36 V42 H10 M4 48 H12 V54 M16 46 H22 V52 M40 46 V54 M46 44 V54 H50" stroke-width="2.5" fill="none" stroke="#8a7"/><path d="M20 44 H26 V50 H30" stroke="#c55" stroke-width="2.5" fill="none"/><path d="M34 48 H38 V54" stroke="#aa5" stroke-width="2.5" fill="none"/><path d="M52 44 V54" stroke="#79b" stroke-width="2.5"/></svg></div><div class="a" style="left:1px;top:144px;width:58px;height:58px;background:#7aafd6;border:3px solid #4a6f90;overflow:hidden"><svg style="left:-3px;top:-3px" width="58" height="58" viewBox="0 0 58 58"><path d="M6 8 L14 14" stroke="#223" stroke-width="3"/><circle cx="16" cy="14" r="4" fill="none" stroke="#334" stroke-width="1.6" stroke-dasharray="1.5 1"/><path d="M24 14 L50 30" stroke="#8fa0a0" stroke-width="7" stroke-linecap="round"/><path d="M22 30 L48 32" stroke="#9ab0b0" stroke-width="7" stroke-linecap="round"/><path d="M26 34 L48 46" stroke="#8fa0a0" stroke-width="7" stroke-linecap="round"/></svg></div><div class="a" style="left:61px;top:144px;width:58px;height:58px;background:#cbcbcb;;overflow:hidden"><svg style="left:0px;top:0px" width="58" height="58" viewBox="0 0 58 58"><path d="M74 -16 L30 28" stroke="#5a4a90" stroke-width="10" stroke-linecap="round"/><path d="M72 -16 L30 26" stroke="#9a88c8" stroke-width="3.0" stroke-linecap="round" opacity="0.7"/><path d="M30 28 L24 34" stroke="#eee" stroke-width="2.5" stroke-linecap="round"/><path d="M22 34 L30 26" stroke="#e0c8a0" stroke-width="5"/><path d="M10 46 C4 40 12 34 18 38 C22 44 20 52 26 48 C30 42 28 36 34 38 C38 42 38 48 44 44 C48 38 44 36 50 34 C56 32 58 40 58 40" stroke="#333" stroke-width="1.6" fill="none" stroke-dasharray="2.5 1.8"/></svg></div><div class="a" style="left:121px;top:144px;width:58px;height:58px;background:#cbcbcb;;overflow:hidden"><svg style="left:0px;top:0px" width="58" height="58" viewBox="0 0 58 58"><path d="M84 -28 L40 16" stroke="#6a6a38" stroke-width="8" stroke-linecap="round"/><path d="M82 -28 L40 14" stroke="#a8a870" stroke-width="2.4" stroke-linecap="round" opacity="0.7"/><path d="M40 16 L34 22" stroke="#eee" stroke-width="2.5" stroke-linecap="round"/><circle cx="20" cy="36" r="14" fill="#c8d050"/><circle cx="20" cy="36" r="9" fill="#fff" stroke="#888" stroke-width="0.6" stroke-dasharray="1 1"/><path d="M8 24 L14 26 L12 30 Z M32 24 L26 26 L28 30 Z M8 48 L14 46 L12 42 Z M32 48 L26 46 L28 42 Z" fill="#f4f4e8" stroke="#aaa" stroke-width="0.5"/></svg></div><div class="a" style="left:181px;top:144px;width:58px;height:58px;background:#cbcbcb;;overflow:hidden"><svg style="left:0px;top:0px" width="58" height="58" viewBox="0 0 58 58"><path d="M82 -28 L38 16" stroke="#555" stroke-width="8" stroke-linecap="round"/><path d="M80 -28 L38 14" stroke="#aaa" stroke-width="2.4" stroke-linecap="round" opacity="0.7"/><path d="M38 16 L32 22" stroke="#eee" stroke-width="2.5" stroke-linecap="round"/><path d="M20 20 C26 20 26 28 28 28 C30 28 36 26 36 34 C36 42 30 40 28 40 C26 40 26 48 20 48 C14 48 14 40 12 40 C10 40 4 42 4 34 C4 26 10 28 12 28 C14 28 14 20 20 20 Z" fill="#a8d4ec" stroke="#3a80b0" stroke-width="1"/><path d="M20 24 L22 30 L18 30 Z M20 44 L22 38 L18 38 Z M8 34 L14 32 V36 Z M32 34 L26 32 V36 Z" fill="#fff"/><circle cx="20" cy="34" r="1.5" fill="#fff"/></svg></div><div class="a" style="left:241px;top:144px;width:58px;height:58px;background:#cbcbcb;;overflow:hidden"><svg style="left:0px;top:0px" width="58" height="58" viewBox="0 0 58 58"><path d="M84 -26 L40 18" stroke="#8a5a30" stroke-width="8" stroke-linecap="round"/><path d="M82 -26 L40 16" stroke="#c8a070" stroke-width="2.4" stroke-linecap="round" opacity="0.7"/><path d="M40 18 L34 24" stroke="#eee" stroke-width="2.5" stroke-linecap="round"/><circle cx="20" cy="36" r="11" fill="#e8d8c0" stroke="#777" stroke-width="0.7" stroke-dasharray="1 1"/><path d="M16 32 H24 V40 H16 Z" fill="#fff"/><path d="M20 28 V44 M12 36 H28" stroke="#f07020" stroke-width="2"/></svg></div><div class="a" style="left:1px;top:204px;width:58px;height:58px;background:#cbcbcb;;overflow:hidden"><svg style="left:0px;top:0px" width="58" height="58" viewBox="0 0 58 58"><path d="M58 2 L40 20" stroke="#111" stroke-width="6" stroke-linecap="round"/><path d="M40 20 L34 26" stroke="#eee" stroke-width="6" stroke-linecap="round"/><g fill="#d4b860"><circle cx="34" cy="34" r="1.2"/><circle cx="42" cy="30" r="1.2"/><circle cx="38" cy="38" r="1.2"/><circle cx="46" cy="36" r="1.2"/></g><path d="M18 42 C14 36 24 36 22 42 C20 46 28 46 26 40 C30 48 36 44 34 40 C40 44 44 50 40 56 C36 54 44 46 54 50" stroke="#222" stroke-width="1.8" fill="none"/><path d="M40 56 C46 58 52 52 58 52" stroke="#999" stroke-width="2.5" fill="none"/></svg></div><div class="a" style="left:61px;top:204px;width:58px;height:58px;background:#cbcbcb;;overflow:hidden"><svg style="left:0px;top:0px" width="58" height="58" viewBox="0 0 58 58"><path d="M58 0 L30 30" stroke="#9080b0" stroke-width="10" stroke-linecap="round" opacity="0.8"/><path d="M54 4 L34 24" stroke="#d8e8f0" stroke-width="4"/><path d="M30 30 L24 38" stroke="#333" stroke-width="2.5"/><circle cx="16" cy="12" r="2.4" fill="#e0d050"/><circle cx="20" cy="16" r="2.4" fill="#e04080"/><circle cx="15" cy="18" r="2.4" fill="#6a50e0"/><path d="M12 54 C16 44 20 58 24 46 C28 58 32 44 36 56 C40 46 44 58 48 46 C52 56 56 48 58 50" stroke="#60a0c0" stroke-width="3" fill="none" opacity="0.8"/></svg></div><div class="a" style="left:121px;top:204px;width:58px;height:58px;background:#cbcbcb;;overflow:hidden"><svg style="left:0px;top:0px" width="58" height="58" viewBox="0 0 58 58"><path d="M58 0 L30 30" stroke="#8ab8a8" stroke-width="10" stroke-linecap="round" opacity="0.8"/><path d="M54 4 L34 24" stroke="#e0f0e8" stroke-width="4"/><path d="M30 30 L24 38" stroke="#222" stroke-width="2.5"/><path d="M18 56 C12 40 22 40 26 50 C28 42 32 40 34 52 C36 40 40 42 40 54 C44 42 48 44 48 56 C50 48 56 46 58 50" stroke="#111" stroke-width="1.8" fill="none"/></svg></div><div class="a" style="left:181px;top:204px;width:58px;height:58px;background:#cbcbcb;;overflow:hidden"><svg style="left:0px;top:0px" width="58" height="58" viewBox="0 0 58 58"><path d="M58 0 C46 2 34 10 28 20 C24 28 24 34 24 40 C30 34 38 30 44 22 C50 14 56 8 58 0 Z" fill="#a8a8a8" opacity="0.9"/><path d="M58 0 C46 8 32 22 23 41" stroke="#e8e8e8" stroke-width="1.2" fill="none"/><path d="M40 8 L44 16 M34 14 L38 22 M30 20 L34 28" stroke="#888" stroke-width="0.8"/><path d="M20 48 C16 40 28 40 24 52 C22 56 30 56 30 48 C30 40 42 44 38 52 C34 56 44 56 46 48 C50 44 56 48 58 46" stroke="#111" stroke-width="1.6" fill="none"/></svg></div><div class="a" style="left:241px;top:204px;width:58px;height:58px;background:#cbcbcb;;overflow:hidden"><svg style="left:0px;top:0px" width="58" height="58" viewBox="0 0 58 58"><path d="M58 4 L36 26" stroke="#7a6090" stroke-width="7" stroke-linecap="round"/><path d="M58 14 L42 32" stroke="#6a5080" stroke-width="7" stroke-linecap="round"/><path d="M50 0 L30 20" stroke="#8a70a0" stroke-width="6" stroke-linecap="round"/><ellipse cx="32" cy="26" rx="5" ry="4" fill="#c8b080"/><ellipse cx="38" cy="32" rx="5" ry="4" fill="#c8b080"/><ellipse cx="44" cy="38" rx="5" ry="4" fill="#c8b080"/><path d="M12 50 C20 46 34 48 58 40 L58 32 C40 40 26 40 14 46 Z" fill="#e070b8" opacity="0.85"/></svg></div><div class="a" style="left:1px;top:264px;width:58px;height:58px;background:#cbcbcb;;overflow:hidden"><svg style="left:0px;top:0px" width="58" height="58" viewBox="0 0 58 58"><path d="M58 2 L34 26" stroke="#3a8890" stroke-width="8" stroke-linecap="round"/><path d="M50 0 L28 22" stroke="#5aa0a8" stroke-width="6" stroke-linecap="round"/><path d="M28 22 L24 30 M34 26 L30 34" stroke="#7a6a88" stroke-width="5" stroke-linecap="round"/><g fill="#3ab0b0" opacity="0.9"><circle cx="16" cy="44" r="3.5"/><circle cx="22" cy="48" r="3"/><circle cx="14" cy="52" r="3"/><circle cx="28" cy="52" r="3.2"/><circle cx="36" cy="48" r="3"/><circle cx="42" cy="52" r="3.2"/><circle cx="50" cy="48" r="3"/><circle cx="54" cy="54" r="3"/><circle cx="34" cy="56" r="2.5"/><circle cx="20" cy="56" r="2.5"/></g></svg></div><div class="a" style="left:61px;top:264px;width:58px;height:58px;background:#cbcbcb;;overflow:hidden"><svg style="left:0px;top:0px" width="58" height="58" viewBox="0 0 58 58"><path d="M58 0 L34 26" stroke="#5a90a0" stroke-width="7" stroke-linecap="round"/><path d="M34 26 L26 36" stroke="#333" stroke-width="4" stroke-linecap="round"/><defs><radialGradient id="rb" cx="0.4" cy="0.35" r="0.7"><stop offset="0" stop-color="#80f0a0"/><stop offset="0.5" stop-color="#5080e0"/><stop offset="1" stop-color="#d040d0"/></radialGradient></defs><circle cx="14" cy="44" r="9" fill="url(#rb)"/></svg></div><div class="a" style="left:121px;top:264px;width:58px;height:58px;background:#ffffff;;overflow:hidden"><svg style="left:0px;top:0px" width="58" height="58" viewBox="0 0 58 58"><defs><radialGradient id="bl" cx="0.45" cy="0.4" r="0.6"><stop offset="0" stop-color="#222"/><stop offset="0.55" stop-color="#555"/><stop offset="1" stop-color="#fff" stop-opacity="0"/></radialGradient></defs><ellipse cx="26" cy="26" rx="22" ry="22" fill="url(#bl)"/></svg></div><div class="a" style="left:181px;top:264px;width:58px;height:58px;background:#ffffff;;overflow:hidden"><svg style="left:0px;top:0px" width="58" height="58" viewBox="0 0 58 58"><g stroke="#9a9a9a" stroke-width="0.8" fill="none" opacity="0.85" filter="url(#tb05)"><path d="M2 6 L20 30 L24 58 M8 2 L18 20 M20 30 L40 16 M30 4 L26 22 M12 26 L2 40 M24 40 L8 50 M40 16 L50 10 M14 10 L4 18 M22 14 L34 2 M36 18 L42 28 M18 34 L10 30 M26 48 L34 40 M4 30 L16 36 M28 26 L46 8 M6 44 L20 46 M44 4 L52 2"/></g><rect x="0" y="0" width="40" height="58" fill="#999" opacity="0.08"/></svg></div><div class="a" style="left:241px;top:264px;width:58px;height:58px;background:linear-gradient(100deg,#ffffff 20%,#d8e4f4 45%,#8aace0 60%,#7aa0dc 100%);;overflow:hidden"><svg style="left:0px;top:0px" width="58" height="58" viewBox="0 0 58 58"><rect x="4" y="41" width="50" height="14" fill="#fff" opacity="0.6"/><text x="29" y="52.5" text-anchor="middle" font-size="11" font-family="Liberation Sans" fill="#111">wet-knife</text></svg></div><div class="a" style="left:1px;top:324px;width:58px;height:58px;background:#cbcbcb;;overflow:hidden"><svg style="left:0px;top:0px" width="58" height="58" viewBox="0 0 58 58"><circle cx="32" cy="12" r="6.5" fill="#c03030" stroke="#222" stroke-width="2"/><circle cx="44" cy="10" r="6.5" fill="#40a040" stroke="#222" stroke-width="2"/><circle cx="38" cy="20" r="5" fill="#3060d0"/></svg></div><div class="a" style="left:61px;top:324px;width:58px;height:58px;background:#cbcbcb;;overflow:hidden"><svg style="left:0px;top:0px" width="58" height="58" viewBox="0 0 58 58"><circle cx="32" cy="12" r="6.5" fill="#c03030" stroke="#222" stroke-width="2"/><circle cx="44" cy="10" r="6.5" fill="#40a040" stroke="#222" stroke-width="2"/><circle cx="38" cy="20" r="5" fill="#3060d0"/></svg></div><div class="a" style="left:121px;top:324px;width:58px;height:58px;background:#ffffff;;overflow:hidden"><svg style="left:0px;top:0px" width="58" height="58" viewBox="0 0 58 58"><path d="M16 0 L14 10" stroke="#20c020" stroke-width="2"/><path d="M36 18 L32 22" stroke="#3080e0" stroke-width="2"/></svg></div><div class="a" style="left:181px;top:324px;width:58px;height:58px;background:#cbcbcb;;overflow:hidden"><svg style="left:0px;top:0px" width="58" height="58" viewBox="0 0 58 58"><rect x="38" y="4" width="16" height="16" fill="#222"/><g fill="#eee"><circle cx="42" cy="8" r="2.2"/><circle cx="50" cy="8" r="2.2"/><circle cx="46" cy="12" r="2.2"/><circle cx="42" cy="16" r="2.2"/><circle cx="50" cy="16" r="2.2"/></g><path d="M10 22 L22 12 M14 22 L24 14" stroke="#666" stroke-width="0.8"/></svg></div><div class="a" style="left:241px;top:324px;width:58px;height:58px;background:#cbcbcb;;overflow:hidden"><svg style="left:0px;top:0px" width="58" height="58" viewBox="0 0 58 58"><rect x="38" y="4" width="16" height="16" fill="#222"/><g fill="#eee"><circle cx="42" cy="8" r="2.2"/><circle cx="50" cy="8" r="2.2"/><circle cx="46" cy="12" r="2.2"/><circle cx="42" cy="16" r="2.2"/><circle cx="50" cy="16" r="2.2"/></g><g fill="#777"><circle cx="10" cy="14" r="0.8"/><circle cx="14" cy="14" r="0.8"/><circle cx="18" cy="14" r="0.8"/><circle cx="22" cy="14" r="0.8"/><circle cx="12" cy="18" r="0.8"/><circle cx="16" cy="18" r="0.8"/><circle cx="20" cy="18" r="0.8"/></g></svg></div></div>
<div class="a" style="left:1px;top:1344px;width:233px;height:22px;background:#3b3b3b;border:1px solid #353535;border-radius:3px"></div>
<div class="t" style="left:4.5px;top:1349.84px;font-size:12px;color:#8c8c8c;">Search</div>
<div class="a" style="left:240px;top:1349px;width:14px;height:14px;background:#3b3b3b;border-radius:2px"></div>
<svg style="left:242px;top:1351px;" width="10" height="10" viewBox="0 0 10 10"><path d="M1 5 L4 9 L9 0.5" fill="none" stroke="#d8d8d8" stroke-width="1.3"/></svg>
<div class="t" style="left:259px;top:1350.10px;font-size:11.7px;color:#d8d8d8;">Filter in Tag</div>
<div class="a" style="left:333px;top:113px;width:19px;height:18px;background:#454545"></div>
<div class="a" style="left:352px;top:113px;width:479px;height:18px;background:#3e3e3e"></div>
<div class="a" style="left:831px;top:113px;width:569px;height:18px;background:#323232"></div>
<div class="a" style="left:333px;top:131px;width:19px;height:1223px;background:#323232"></div>
<svg style="left:0;top:0" width="1400" height="140"><g fill="#d0d0d0"><rect x="841" y="126" width="1" height="5"/><rect x="853" y="128" width="1" height="3"/><rect x="865" y="126" width="1" height="5"/><rect x="876" y="128" width="1" height="3"/><rect x="888" y="126" width="1" height="5"/><rect x="899" y="128" width="1" height="3"/><rect x="911" y="126" width="1" height="5"/><rect x="923" y="128" width="1" height="3"/><rect x="934" y="126" width="1" height="5"/><rect x="946" y="128" width="1" height="3"/><rect x="958" y="126" width="1" height="5"/><rect x="969" y="128" width="1" height="3"/><rect x="981" y="126" width="1" height="5"/><rect x="992" y="128" width="1" height="3"/><rect x="1004" y="126" width="1" height="5"/><rect x="1016" y="128" width="1" height="3"/><rect x="1027" y="126" width="1" height="5"/><rect x="1039" y="128" width="1" height="3"/><rect x="1050" y="126" width="1" height="5"/><rect x="1062" y="128" width="1" height="3"/><rect x="1074" y="126" width="1" height="5"/><rect x="1085" y="128" width="1" height="3"/><rect x="1097" y="126" width="1" height="5"/><rect x="1109" y="128" width="1" height="3"/><rect x="1120" y="126" width="1" height="5"/><rect x="1132" y="128" width="1" height="3"/><rect x="1143" y="126" width="1" height="5"/><rect x="1155" y="128" width="1" height="3"/><rect x="1167" y="126" width="1" height="5"/><rect x="1178" y="128" width="1" height="3"/><rect x="1190" y="126" width="1" height="5"/><rect x="1201" y="128" width="1" height="3"/><rect x="1213" y="126" width="1" height="5"/><rect x="1225" y="128" width="1" height="3"/><rect x="1236" y="126" width="1" height="5"/><rect x="1248" y="128" width="1" height="3"/><rect x="1259" y="126" width="1" height="5"/><rect x="1271" y="128" width="1" height="3"/><rect x="1283" y="126" width="1" height="5"/><rect x="1294" y="128" width="1" height="3"/><rect x="1306" y="126" width="1" height="5"/><rect x="1318" y="128" width="1" height="3"/><rect x="1329" y="126" width="1" height="5"/><rect x="1341" y="128" width="1" height="3"/><rect x="1352" y="126" width="1" height="5"/><rect x="1364" y="128" width="1" height="3"/><rect x="1376" y="126" width="1" height="5"/><rect x="1387" y="128" width="1" height="3"/><rect x="1399" y="126" width="1" height="5"/></g></svg>
<div class="t" style="left:821px;top:116.5px;width:41px;text-align:center;font-size:10.6px;color:#d4d4d4">0</div>
<div class="t" style="left:868px;top:116.5px;width:41px;text-align:center;font-size:10.6px;color:#d4d4d4">2</div>
<div class="t" style="left:914px;top:116.5px;width:41px;text-align:center;font-size:10.6px;color:#d4d4d4">4</div>
<div class="t" style="left:961px;top:116.5px;width:41px;text-align:center;font-size:10.6px;color:#d4d4d4">6</div>
<div class="t" style="left:1007px;top:116.5px;width:41px;text-align:center;font-size:10.6px;color:#d4d4d4">8</div>
<div class="t" style="left:1054px;top:116.5px;width:41px;text-align:center;font-size:10.6px;color:#d4d4d4">10</div>
<div class="t" style="left:1100px;top:116.5px;width:41px;text-align:center;font-size:10.6px;color:#d4d4d4">12</div>
<div class="t" style="left:1147px;top:116.5px;width:41px;text-align:center;font-size:10.6px;color:#d4d4d4">14</div>
<div class="t" style="left:1193px;top:116.5px;width:41px;text-align:center;font-size:10.6px;color:#d4d4d4">16</div>
<div class="t" style="left:1239px;top:116.5px;width:41px;text-align:center;font-size:10.6px;color:#d4d4d4">18</div>
<div class="t" style="left:1286px;top:116.5px;width:41px;text-align:center;font-size:10.6px;color:#d4d4d4">20</div>
<div class="t" style="left:1332px;top:116.5px;width:41px;text-align:center;font-size:10.6px;color:#d4d4d4">22</div>
<div class="t" style="left:1379px;top:116.5px;width:41px;text-align:center;font-size:10.6px;color:#d4d4d4">24</div>
<svg style="left:0;top:0" width="400" height="1400"><g fill="#d0d0d0"><rect x="345" y="134" width="6" height="1"/><rect x="348" y="151" width="3" height="1"/><rect x="344" y="168" width="7" height="1"/><rect x="348" y="184" width="3" height="1"/><rect x="345" y="201" width="6" height="1"/><rect x="348" y="217" width="3" height="1"/><rect x="344" y="234" width="7" height="1"/><rect x="348" y="250" width="3" height="1"/><rect x="345" y="267" width="6" height="1"/><rect x="348" y="283" width="3" height="1"/><rect x="344" y="300" width="7" height="1"/><rect x="348" y="317" width="3" height="1"/><rect x="345" y="333" width="6" height="1"/><rect x="348" y="350" width="3" height="1"/><rect x="344" y="366" width="7" height="1"/><rect x="348" y="383" width="3" height="1"/><rect x="345" y="399" width="6" height="1"/><rect x="348" y="416" width="3" height="1"/><rect x="344" y="432" width="7" height="1"/><rect x="348" y="449" width="3" height="1"/><rect x="345" y="466" width="6" height="1"/><rect x="348" y="482" width="3" height="1"/><rect x="344" y="499" width="7" height="1"/><rect x="348" y="515" width="3" height="1"/><rect x="345" y="532" width="6" height="1"/><rect x="348" y="548" width="3" height="1"/><rect x="344" y="565" width="7" height="1"/><rect x="348" y="582" width="3" height="1"/><rect x="345" y="598" width="6" height="1"/><rect x="348" y="615" width="3" height="1"/><rect x="344" y="631" width="7" height="1"/><rect x="348" y="648" width="3" height="1"/><rect x="345" y="664" width="6" height="1"/><rect x="348" y="681" width="3" height="1"/><rect x="344" y="697" width="7" height="1"/><rect x="348" y="714" width="3" height="1"/><rect x="345" y="731" width="6" height="1"/><rect x="348" y="747" width="3" height="1"/><rect x="344" y="764" width="7" height="1"/><rect x="348" y="780" width="3" height="1"/><rect x="345" y="797" width="6" height="1"/><rect x="348" y="813" width="3" height="1"/><rect x="344" y="830" width="7" height="1"/><rect x="348" y="846" width="3" height="1"/><rect x="345" y="863" width="6" height="1"/><rect x="348" y="880" width="3" height="1"/><rect x="344" y="896" width="7" height="1"/><rect x="348" y="913" width="3" height="1"/><rect x="345" y="929" width="6" height="1"/><rect x="348" y="946" width="3" height="1"/><rect x="344" y="962" width="7" height="1"/><rect x="348" y="979" width="3" height="1"/><rect x="345" y="995" width="6" height="1"/><rect x="348" y="1012" width="3" height="1"/><rect x="344" y="1029" width="7" height="1"/><rect x="348" y="1045" width="3" height="1"/><rect x="345" y="1062" width="6" height="1"/><rect x="348" y="1078" width="3" height="1"/><rect x="344" y="1095" width="7" height="1"/><rect x="348" y="1111" width="3" height="1"/><rect x="345" y="1128" width="6" height="1"/><rect x="348" y="1145" width="3" height="1"/><rect x="344" y="1161" width="7" height="1"/><rect x="348" y="1178" width="3" height="1"/><rect x="345" y="1194" width="6" height="1"/><rect x="348" y="1211" width="3" height="1"/><rect x="344" y="1227" width="7" height="1"/><rect x="348" y="1244" width="3" height="1"/><rect x="345" y="1260" width="6" height="1"/><rect x="348" y="1277" width="3" height="1"/><rect x="344" y="1294" width="7" height="1"/><rect x="348" y="1310" width="3" height="1"/><rect x="345" y="1327" width="6" height="1"/><rect x="348" y="1343" width="3" height="1"/></g></svg>
<div class="t" style="left:321px;top:162.0px;width:40px;height:11px;text-align:center;font-size:10.6px;color:#d4d4d4;transform:rotate(-90deg);transform-origin:20px 5.5px">200</div>
<div class="t" style="left:321px;top:228.2px;width:40px;height:11px;text-align:center;font-size:10.6px;color:#d4d4d4;transform:rotate(-90deg);transform-origin:20px 5.5px">400</div>
<div class="t" style="left:321px;top:294.5px;width:40px;height:11px;text-align:center;font-size:10.6px;color:#d4d4d4;transform:rotate(-90deg);transform-origin:20px 5.5px">600</div>
<div class="t" style="left:321px;top:360.7px;width:40px;height:11px;text-align:center;font-size:10.6px;color:#d4d4d4;transform:rotate(-90deg);transform-origin:20px 5.5px">800</div>
<div class="t" style="left:321px;top:427.0px;width:40px;height:11px;text-align:center;font-size:10.6px;color:#d4d4d4;transform:rotate(-90deg);transform-origin:20px 5.5px">1000</div>
<div class="t" style="left:321px;top:493.2px;width:40px;height:11px;text-align:center;font-size:10.6px;color:#d4d4d4;transform:rotate(-90deg);transform-origin:20px 5.5px">1200</div>
<div class="t" style="left:321px;top:559.4px;width:40px;height:11px;text-align:center;font-size:10.6px;color:#d4d4d4;transform:rotate(-90deg);transform-origin:20px 5.5px">1400</div>
<div class="t" style="left:321px;top:625.7px;width:40px;height:11px;text-align:center;font-size:10.6px;color:#d4d4d4;transform:rotate(-90deg);transform-origin:20px 5.5px">1600</div>
<div class="t" style="left:321px;top:691.9px;width:40px;height:11px;text-align:center;font-size:10.6px;color:#d4d4d4;transform:rotate(-90deg);transform-origin:20px 5.5px">1800</div>
<div class="t" style="left:321px;top:758.2px;width:40px;height:11px;text-align:center;font-size:10.6px;color:#d4d4d4;transform:rotate(-90deg);transform-origin:20px 5.5px">2000</div>
<div class="t" style="left:321px;top:824.4px;width:40px;height:11px;text-align:center;font-size:10.6px;color:#d4d4d4;transform:rotate(-90deg);transform-origin:20px 5.5px">2200</div>
<div class="t" style="left:321px;top:890.6px;width:40px;height:11px;text-align:center;font-size:10.6px;color:#d4d4d4;transform:rotate(-90deg);transform-origin:20px 5.5px">2400</div>
<div class="t" style="left:321px;top:956.9px;width:40px;height:11px;text-align:center;font-size:10.6px;color:#d4d4d4;transform:rotate(-90deg);transform-origin:20px 5.5px">2600</div>
<div class="t" style="left:321px;top:1023.1px;width:40px;height:11px;text-align:center;font-size:10.6px;color:#d4d4d4;transform:rotate(-90deg);transform-origin:20px 5.5px">2800</div>
<div class="t" style="left:321px;top:1089.4px;width:40px;height:11px;text-align:center;font-size:10.6px;color:#d4d4d4;transform:rotate(-90deg);transform-origin:20px 5.5px">3000</div>
<div class="t" style="left:321px;top:1155.6px;width:40px;height:11px;text-align:center;font-size:10.6px;color:#d4d4d4;transform:rotate(-90deg);transform-origin:20px 5.5px">3200</div>
<div class="t" style="left:321px;top:1221.8px;width:40px;height:11px;text-align:center;font-size:10.6px;color:#d4d4d4;transform:rotate(-90deg);transform-origin:20px 5.5px">3400</div>
<div class="t" style="left:321px;top:1288.1px;width:40px;height:11px;text-align:center;font-size:10.6px;color:#d4d4d4;transform:rotate(-90deg);transform-origin:20px 5.5px">3600</div>
<div class="a" style="left:352px;top:131px;width:479px;height:1223px;background:#808080"></div>
<div class="a" style="left:831px;top:131px;width:569px;height:1223px;background:#ffffff"></div>
<svg style="left:0;top:0" width="1400" height="1400" viewBox="0 0 1400 1400">
<defs>
<filter id="blur1" x="-20%" y="-20%" width="140%" height="140%"><feGaussianBlur stdDeviation="1.3"/></filter>
<filter id="blur2" x="-20%" y="-20%" width="140%" height="140%"><feGaussianBlur stdDeviation="2"/></filter>
<filter id="blur4" x="-30%" y="-30%" width="160%" height="160%"><feGaussianBlur stdDeviation="4"/></filter>
<filter id="blur12" x="-40%" y="-40%" width="180%" height="180%"><feGaussianBlur stdDeviation="12"/></filter>
<filter id="speck2" x="-10%" y="-10%" width="120%" height="120%">
  <feGaussianBlur in="SourceGraphic" stdDeviation="5" result="b"/>
  <feTurbulence type="turbulence" baseFrequency="1.5" numOctaves="1" seed="7" result="n"/>
  <feColorMatrix in="n" type="matrix" values="0 0 0 0 0  0 0 0 0 0  0 0 0 0 0  0 0 0 6 -0.9" result="na"/>
  <feComposite in="b" in2="na" operator="in"/>
</filter>
<filter id="tex" x="-10%" y="-10%" width="120%" height="120%">
  <feGaussianBlur in="SourceGraphic" stdDeviation="3" result="b"/>
  <feTurbulence type="fractalNoise" baseFrequency="0.8" numOctaves="2" seed="11" result="n"/>
  <feColorMatrix in="n" type="matrix" values="0 0 0 0 0  0 0 0 0 0  0 0 0 0 0  0 0 0 -3 2.5" result="na"/>
  <feComposite in="b" in2="na" operator="in"/>
</filter>
</defs>
<!-- faint big pink area -->
<g filter="url(#blur12)" fill="#ff0000">
 <path d="M950 610 C955 550 1000 530 1050 540 L1140 575 L1200 640 L1230 700 L1170 735 L1090 740 L1030 765 L975 740 L952 680 Z" opacity="0.02"/>
</g>
<!-- faint streak through circle -->
<g filter="url(#blur2)" fill="#ff0000">
 <path d="M1143 560 L1160 552 L1185 600 L1170 650 L1150 690 L1127 690 L1132 640 Z" opacity="0.12"/>
</g>
<g filter="url(#blur1)"><g stroke="#ff0000" stroke-linecap="round" fill="none"><line x1="1154.9" y1="592.5" x2="1169.8" y2="599.3" stroke-width="1.61" stroke-opacity="0.16"/><line x1="1165.5" y1="598.7" x2="1182.8" y2="605.8" stroke-width="1.43" stroke-opacity="0.11"/><line x1="1129.1" y1="609.9" x2="1148.8" y2="620.6" stroke-width="1.52" stroke-opacity="0.11"/><line x1="1162.0" y1="590.6" x2="1183.5" y2="603.2" stroke-width="1.06" stroke-opacity="0.12"/><line x1="1168.2" y1="623.7" x2="1180.6" y2="629.0" stroke-width="1.53" stroke-opacity="0.17"/><line x1="1161.9" y1="663.0" x2="1179.0" y2="674.4" stroke-width="1.48" stroke-opacity="0.12"/><line x1="1162.8" y1="651.9" x2="1185.4" y2="664.3" stroke-width="0.95" stroke-opacity="0.15"/><line x1="1137.6" y1="618.9" x2="1149.6" y2="624.5" stroke-width="1.19" stroke-opacity="0.10"/><line x1="1154.7" y1="626.5" x2="1171.0" y2="633.9" stroke-width="1.88" stroke-opacity="0.11"/><line x1="1155.2" y1="650.9" x2="1167.9" y2="658.4" stroke-width="1.30" stroke-opacity="0.10"/><line x1="1169.6" y1="654.0" x2="1187.6" y2="664.5" stroke-width="1.71" stroke-opacity="0.17"/><line x1="1137.6" y1="593.2" x2="1153.0" y2="600.5" stroke-width="1.89" stroke-opacity="0.11"/><line x1="1164.8" y1="621.5" x2="1184.9" y2="631.6" stroke-width="1.38" stroke-opacity="0.17"/><line x1="1139.1" y1="614.7" x2="1158.1" y2="623.6" stroke-width="1.84" stroke-opacity="0.14"/><line x1="1144.8" y1="611.9" x2="1169.4" y2="625.1" stroke-width="0.95" stroke-opacity="0.10"/><line x1="1132.6" y1="652.7" x2="1154.6" y2="664.0" stroke-width="1.30" stroke-opacity="0.10"/><line x1="1169.8" y1="642.9" x2="1193.1" y2="657.6" stroke-width="1.66" stroke-opacity="0.09"/><line x1="1156.6" y1="643.7" x2="1170.8" y2="651.8" stroke-width="1.36" stroke-opacity="0.10"/><line x1="1147.1" y1="685.4" x2="1170.6" y2="696.4" stroke-width="1.09" stroke-opacity="0.14"/><line x1="1166.3" y1="677.1" x2="1180.9" y2="685.4" stroke-width="1.06" stroke-opacity="0.14"/><line x1="1160.0" y1="643.9" x2="1181.5" y2="655.6" stroke-width="1.24" stroke-opacity="0.09"/><line x1="1128.8" y1="682.9" x2="1150.9" y2="696.7" stroke-width="0.96" stroke-opacity="0.12"/><line x1="1164.9" y1="684.7" x2="1176.7" y2="690.9" stroke-width="1.70" stroke-opacity="0.10"/><line x1="1160.2" y1="602.8" x2="1177.4" y2="612.2" stroke-width="1.82" stroke-opacity="0.11"/><line x1="1145.8" y1="611.2" x2="1163.5" y2="621.7" stroke-width="1.23" stroke-opacity="0.11"/><line x1="1169.8" y1="655.0" x2="1186.5" y2="664.0" stroke-width="1.14" stroke-opacity="0.10"/><line x1="1142.2" y1="648.8" x2="1156.5" y2="655.4" stroke-width="1.56" stroke-opacity="0.10"/><line x1="1137.6" y1="680.5" x2="1161.3" y2="690.5" stroke-width="1.60" stroke-opacity="0.11"/><line x1="1137.0" y1="603.2" x2="1160.6" y2="616.2" stroke-width="1.72" stroke-opacity="0.13"/><line x1="1161.9" y1="609.0" x2="1174.0" y2="615.2" stroke-width="1.39" stroke-opacity="0.13"/><line x1="1158.6" y1="657.3" x2="1184.1" y2="668.3" stroke-width="1.26" stroke-opacity="0.13"/><line x1="1164.2" y1="614.9" x2="1177.5" y2="621.8" stroke-width="1.19" stroke-opacity="0.13"/><line x1="1138.5" y1="682.3" x2="1154.6" y2="692.5" stroke-width="0.95" stroke-opacity="0.14"/><line x1="1170.0" y1="673.6" x2="1193.0" y2="688.6" stroke-width="1.07" stroke-opacity="0.17"/><line x1="1148.4" y1="611.4" x2="1165.4" y2="618.5" stroke-width="1.93" stroke-opacity="0.12"/><line x1="1139.1" y1="668.4" x2="1156.3" y2="677.2" stroke-width="1.95" stroke-opacity="0.18"/><line x1="1151.3" y1="661.8" x2="1164.4" y2="668.1" stroke-width="1.51" stroke-opacity="0.18"/><line x1="1150.8" y1="664.8" x2="1162.1" y2="671.1" stroke-width="1.80" stroke-opacity="0.14"/><line x1="1134.6" y1="686.1" x2="1146.7" y2="691.5" stroke-width="1.61" stroke-opacity="0.14"/><line x1="1137.9" y1="602.0" x2="1161.7" y2="613.1" stroke-width="1.55" stroke-opacity="0.14"/></g></g>
<!-- overall light base -->
<g filter="url(#blur4)" fill="#ff0000">
 <path d="M1060 360 L1120 326 L1190 340 L1230 365 L1320 355 L1336 440 L1300 480 L1300 530 L1360 590 L1362 645 L1175 648 L1160 600 L1130 575 L1080 560 L1065 480 Z" opacity="0.1"/>
</g>
<!-- stippled lower-left region -->
<g filter="url(#speck2)" fill="#ff0000">
 <path d="M1042 445 C1060 430 1110 440 1150 470 L1175 520 L1165 585 L1130 580 L1095 575 L1070 565 L1052 520 L1040 480 Z" opacity="0.42"/>
</g>
<g filter="url(#blur4)" fill="#ff0000">
 <path d="M1080 440 L1140 460 L1165 510 L1130 500 L1090 470 Z" opacity="0.25"/>
</g>
<!-- right stipple rectangle -->
<g filter="url(#speck2)" fill="#ff0000">
 <path d="M1168 552 L1240 525 L1300 545 L1330 556 L1365 588 L1368 648 L1300 650 L1174 652 L1165 600 Z" opacity="0.45"/>
</g>
<!-- (top-left blob merged) -->
<g filter="url(#blur1)"><g stroke="#ff0000" stroke-linecap="round" fill="none"><line x1="1079.3" y1="370.9" x2="1052.3" y2="363.5" stroke-width="1.87" stroke-opacity="0.12"/><line x1="1066.7" y1="357.7" x2="1035.2" y2="353.5" stroke-width="1.91" stroke-opacity="0.13"/><line x1="1055.1" y1="362.1" x2="1016.7" y2="351.1" stroke-width="1.27" stroke-opacity="0.11"/><line x1="1068.6" y1="395.3" x2="1032.7" y2="386.0" stroke-width="1.21" stroke-opacity="0.14"/><line x1="1108.4" y1="379.2" x2="1079.2" y2="371.0" stroke-width="1.03" stroke-opacity="0.17"/><line x1="1107.2" y1="351.0" x2="1076.7" y2="342.6" stroke-width="1.16" stroke-opacity="0.11"/><line x1="1057.5" y1="368.7" x2="1036.1" y2="364.5" stroke-width="1.26" stroke-opacity="0.17"/><line x1="1094.4" y1="348.5" x2="1068.1" y2="341.5" stroke-width="1.13" stroke-opacity="0.18"/><line x1="1079.7" y1="349.4" x2="1065.0" y2="345.9" stroke-width="1.33" stroke-opacity="0.16"/><line x1="1101.9" y1="368.6" x2="1076.3" y2="366.8" stroke-width="2.07" stroke-opacity="0.11"/><line x1="1113.3" y1="368.2" x2="1078.1" y2="361.4" stroke-width="1.17" stroke-opacity="0.11"/><line x1="1071.6" y1="392.9" x2="1037.8" y2="384.3" stroke-width="1.27" stroke-opacity="0.19"/><line x1="1067.5" y1="337.2" x2="1034.1" y2="328.5" stroke-width="1.76" stroke-opacity="0.14"/><line x1="1060.8" y1="395.1" x2="1025.6" y2="385.2" stroke-width="2.07" stroke-opacity="0.18"/><line x1="1051.7" y1="381.6" x2="1029.2" y2="375.5" stroke-width="2.05" stroke-opacity="0.18"/><line x1="1106.8" y1="348.7" x2="1072.2" y2="345.5" stroke-width="2.04" stroke-opacity="0.19"/><line x1="1065.6" y1="387.2" x2="1039.3" y2="383.6" stroke-width="1.29" stroke-opacity="0.18"/><line x1="1051.7" y1="343.5" x2="1029.2" y2="337.8" stroke-width="1.35" stroke-opacity="0.20"/><line x1="1094.9" y1="358.0" x2="1056.0" y2="350.8" stroke-width="1.16" stroke-opacity="0.19"/><line x1="1117.9" y1="342.5" x2="1079.2" y2="337.6" stroke-width="1.54" stroke-opacity="0.11"/><line x1="1101.0" y1="352.0" x2="1071.3" y2="346.6" stroke-width="1.71" stroke-opacity="0.14"/><line x1="1067.8" y1="379.6" x2="1053.3" y2="375.7" stroke-width="1.88" stroke-opacity="0.15"/><line x1="1101.9" y1="376.9" x2="1077.9" y2="374.9" stroke-width="1.41" stroke-opacity="0.17"/><line x1="1072.0" y1="389.4" x2="1039.3" y2="385.0" stroke-width="1.51" stroke-opacity="0.13"/><line x1="1078.2" y1="350.7" x2="1060.2" y2="347.8" stroke-width="1.83" stroke-opacity="0.19"/><line x1="1113.2" y1="373.1" x2="1091.1" y2="369.0" stroke-width="1.36" stroke-opacity="0.10"/><line x1="1080.1" y1="370.6" x2="1049.2" y2="365.4" stroke-width="1.27" stroke-opacity="0.14"/><line x1="1083.1" y1="393.1" x2="1048.4" y2="389.4" stroke-width="1.63" stroke-opacity="0.11"/><line x1="1094.3" y1="353.5" x2="1059.8" y2="345.5" stroke-width="1.29" stroke-opacity="0.17"/><line x1="1063.9" y1="331.7" x2="1043.1" y2="328.2" stroke-width="1.11" stroke-opacity="0.18"/><line x1="1079.0" y1="374.1" x2="1059.6" y2="369.8" stroke-width="1.31" stroke-opacity="0.15"/><line x1="1095.9" y1="330.4" x2="1063.0" y2="322.7" stroke-width="1.53" stroke-opacity="0.11"/><line x1="1062.3" y1="397.1" x2="1034.5" y2="394.8" stroke-width="2.03" stroke-opacity="0.12"/><line x1="1082.0" y1="386.1" x2="1051.5" y2="377.4" stroke-width="2.15" stroke-opacity="0.16"/><line x1="1112.4" y1="372.9" x2="1079.9" y2="367.1" stroke-width="1.67" stroke-opacity="0.18"/><line x1="1112.8" y1="382.1" x2="1086.1" y2="378.7" stroke-width="1.78" stroke-opacity="0.12"/><line x1="1103.6" y1="366.5" x2="1073.2" y2="362.6" stroke-width="1.36" stroke-opacity="0.11"/><line x1="1069.0" y1="352.4" x2="1040.7" y2="349.6" stroke-width="1.85" stroke-opacity="0.12"/><line x1="1099.4" y1="334.5" x2="1074.7" y2="329.9" stroke-width="1.27" stroke-opacity="0.14"/><line x1="1079.4" y1="393.3" x2="1050.5" y2="387.0" stroke-width="1.93" stroke-opacity="0.19"/><line x1="1076.6" y1="330.4" x2="1053.4" y2="325.0" stroke-width="2.15" stroke-opacity="0.19"/><line x1="1079.3" y1="382.3" x2="1051.2" y2="376.7" stroke-width="1.28" stroke-opacity="0.12"/><line x1="1080.5" y1="332.0" x2="1057.6" y2="327.1" stroke-width="1.22" stroke-opacity="0.14"/><line x1="1082.7" y1="338.9" x2="1052.2" y2="336.6" stroke-width="1.69" stroke-opacity="0.14"/><line x1="1051.9" y1="375.0" x2="1033.8" y2="371.9" stroke-width="1.47" stroke-opacity="0.11"/><line x1="1064.8" y1="352.9" x2="1031.2" y2="347.8" stroke-width="2.01" stroke-opacity="0.18"/><line x1="1067.7" y1="335.7" x2="1052.4" y2="332.9" stroke-width="1.44" stroke-opacity="0.20"/><line x1="1095.5" y1="384.7" x2="1065.0" y2="377.6" stroke-width="1.26" stroke-opacity="0.19"/><line x1="1051.4" y1="340.7" x2="1033.7" y2="336.9" stroke-width="1.28" stroke-opacity="0.16"/><line x1="1099.0" y1="383.7" x2="1080.1" y2="379.9" stroke-width="1.16" stroke-opacity="0.17"/><line x1="1107.4" y1="397.5" x2="1089.7" y2="396.2" stroke-width="1.83" stroke-opacity="0.13"/><line x1="1117.1" y1="357.8" x2="1084.3" y2="355.0" stroke-width="1.77" stroke-opacity="0.17"/><line x1="1057.1" y1="384.1" x2="1021.6" y2="377.0" stroke-width="2.19" stroke-opacity="0.11"/><line x1="1104.8" y1="354.3" x2="1079.4" y2="350.5" stroke-width="1.43" stroke-opacity="0.15"/><line x1="1109.5" y1="387.6" x2="1092.5" y2="382.8" stroke-width="2.01" stroke-opacity="0.16"/><line x1="1099.5" y1="360.5" x2="1067.4" y2="351.5" stroke-width="1.98" stroke-opacity="0.13"/><line x1="1087.7" y1="363.8" x2="1062.4" y2="358.1" stroke-width="2.03" stroke-opacity="0.13"/><line x1="1108.2" y1="336.1" x2="1071.4" y2="331.6" stroke-width="1.75" stroke-opacity="0.15"/><line x1="1076.5" y1="332.0" x2="1040.5" y2="328.1" stroke-width="1.97" stroke-opacity="0.12"/><line x1="1073.8" y1="391.6" x2="1041.6" y2="387.5" stroke-width="2.15" stroke-opacity="0.10"/><line x1="1056.0" y1="380.4" x2="1029.5" y2="374.2" stroke-width="1.79" stroke-opacity="0.17"/><line x1="1084.4" y1="385.5" x2="1067.1" y2="383.5" stroke-width="1.38" stroke-opacity="0.17"/><line x1="1090.7" y1="363.1" x2="1062.8" y2="358.7" stroke-width="1.41" stroke-opacity="0.17"/><line x1="1099.2" y1="349.0" x2="1078.0" y2="346.9" stroke-width="1.16" stroke-opacity="0.12"/><line x1="1087.5" y1="383.4" x2="1068.0" y2="381.1" stroke-width="1.88" stroke-opacity="0.15"/><line x1="1118.4" y1="366.7" x2="1096.4" y2="364.7" stroke-width="1.29" stroke-opacity="0.12"/><line x1="1062.6" y1="331.0" x2="1034.4" y2="327.4" stroke-width="1.68" stroke-opacity="0.20"/><line x1="1098.8" y1="338.8" x2="1062.7" y2="332.5" stroke-width="1.70" stroke-opacity="0.19"/><line x1="1082.9" y1="360.8" x2="1063.3" y2="359.3" stroke-width="1.59" stroke-opacity="0.19"/><line x1="1107.5" y1="358.0" x2="1091.0" y2="354.7" stroke-width="1.20" stroke-opacity="0.11"/><line x1="1089.4" y1="351.3" x2="1049.7" y2="347.5" stroke-width="1.74" stroke-opacity="0.18"/><line x1="1105.4" y1="345.8" x2="1077.7" y2="341.2" stroke-width="2.04" stroke-opacity="0.14"/><line x1="1119.3" y1="351.4" x2="1089.4" y2="345.4" stroke-width="2.15" stroke-opacity="0.17"/><line x1="1064.5" y1="344.8" x2="1033.2" y2="341.5" stroke-width="1.11" stroke-opacity="0.12"/><line x1="1050.2" y1="361.5" x2="1020.6" y2="357.6" stroke-width="1.86" stroke-opacity="0.12"/><line x1="1099.2" y1="361.8" x2="1068.1" y2="353.4" stroke-width="1.76" stroke-opacity="0.18"/><line x1="1096.3" y1="395.4" x2="1071.1" y2="390.7" stroke-width="2.10" stroke-opacity="0.16"/><line x1="1107.9" y1="335.0" x2="1088.9" y2="332.4" stroke-width="1.70" stroke-opacity="0.17"/><line x1="1070.2" y1="338.7" x2="1038.7" y2="331.8" stroke-width="1.62" stroke-opacity="0.19"/><line x1="1084.6" y1="335.6" x2="1068.8" y2="333.1" stroke-width="1.32" stroke-opacity="0.13"/><line x1="1056.4" y1="397.3" x2="1021.1" y2="390.5" stroke-width="2.21" stroke-opacity="0.20"/><line x1="1097.1" y1="348.9" x2="1081.5" y2="345.2" stroke-width="1.80" stroke-opacity="0.15"/><line x1="1114.1" y1="342.7" x2="1085.1" y2="336.7" stroke-width="1.13" stroke-opacity="0.15"/><line x1="1074.4" y1="353.3" x2="1043.6" y2="345.5" stroke-width="1.85" stroke-opacity="0.13"/><line x1="1070.2" y1="396.2" x2="1035.4" y2="389.7" stroke-width="1.39" stroke-opacity="0.15"/><line x1="1072.6" y1="397.9" x2="1047.9" y2="393.5" stroke-width="1.80" stroke-opacity="0.20"/><line x1="1088.0" y1="358.9" x2="1068.5" y2="356.1" stroke-width="1.76" stroke-opacity="0.18"/><line x1="1103.2" y1="344.2" x2="1075.5" y2="336.7" stroke-width="1.85" stroke-opacity="0.14"/><line x1="1058.5" y1="398.1" x2="1028.5" y2="394.5" stroke-width="1.68" stroke-opacity="0.12"/><line x1="1088.7" y1="336.5" x2="1050.2" y2="326.3" stroke-width="1.16" stroke-opacity="0.15"/><line x1="1108.3" y1="364.9" x2="1075.8" y2="359.1" stroke-width="2.01" stroke-opacity="0.13"/><line x1="1118.6" y1="347.1" x2="1090.2" y2="342.8" stroke-width="1.62" stroke-opacity="0.19"/><line x1="1111.6" y1="390.5" x2="1090.3" y2="385.4" stroke-width="2.13" stroke-opacity="0.14"/><line x1="1085.5" y1="387.4" x2="1063.7" y2="384.5" stroke-width="2.21" stroke-opacity="0.16"/><line x1="1084.3" y1="340.4" x2="1056.1" y2="336.4" stroke-width="1.67" stroke-opacity="0.16"/><line x1="1081.9" y1="352.5" x2="1062.6" y2="348.3" stroke-width="1.30" stroke-opacity="0.16"/><line x1="1104.3" y1="333.1" x2="1071.5" y2="325.8" stroke-width="1.48" stroke-opacity="0.18"/><line x1="1096.5" y1="387.5" x2="1057.5" y2="380.6" stroke-width="1.62" stroke-opacity="0.10"/><line x1="1091.3" y1="390.9" x2="1054.9" y2="384.9" stroke-width="1.56" stroke-opacity="0.15"/><line x1="1100.6" y1="358.7" x2="1069.4" y2="355.5" stroke-width="2.17" stroke-opacity="0.15"/><line x1="1073.7" y1="378.5" x2="1043.4" y2="370.8" stroke-width="2.04" stroke-opacity="0.19"/><line x1="1076.6" y1="352.2" x2="1044.5" y2="344.7" stroke-width="1.06" stroke-opacity="0.19"/><line x1="1054.8" y1="374.2" x2="1018.2" y2="363.7" stroke-width="1.54" stroke-opacity="0.17"/><line x1="1056.9" y1="374.4" x2="1020.6" y2="368.4" stroke-width="2.10" stroke-opacity="0.17"/><line x1="1053.2" y1="385.7" x2="1031.1" y2="382.4" stroke-width="1.65" stroke-opacity="0.11"/><line x1="1089.6" y1="385.5" x2="1070.4" y2="383.8" stroke-width="1.76" stroke-opacity="0.19"/><line x1="1066.9" y1="393.9" x2="1048.5" y2="390.8" stroke-width="1.32" stroke-opacity="0.13"/><line x1="1050.7" y1="386.3" x2="1014.0" y2="378.4" stroke-width="1.55" stroke-opacity="0.12"/><line x1="1074.2" y1="371.1" x2="1043.6" y2="366.2" stroke-width="2.03" stroke-opacity="0.13"/><line x1="1063.9" y1="356.9" x2="1037.1" y2="353.7" stroke-width="1.70" stroke-opacity="0.16"/><line x1="1119.5" y1="350.7" x2="1080.9" y2="342.5" stroke-width="1.69" stroke-opacity="0.13"/><line x1="1098.0" y1="382.1" x2="1082.1" y2="379.0" stroke-width="2.10" stroke-opacity="0.15"/><line x1="1070.0" y1="385.9" x2="1040.2" y2="381.6" stroke-width="1.76" stroke-opacity="0.16"/><line x1="1097.4" y1="380.5" x2="1066.9" y2="372.8" stroke-width="2.10" stroke-opacity="0.16"/><line x1="1095.2" y1="351.6" x2="1069.7" y2="346.7" stroke-width="1.13" stroke-opacity="0.17"/><line x1="1070.7" y1="382.3" x2="1051.4" y2="380.4" stroke-width="2.18" stroke-opacity="0.15"/><line x1="1087.2" y1="393.9" x2="1051.7" y2="389.5" stroke-width="1.59" stroke-opacity="0.18"/><line x1="1106.5" y1="382.3" x2="1083.1" y2="380.1" stroke-width="1.19" stroke-opacity="0.20"/><line x1="1117.7" y1="390.2" x2="1085.8" y2="381.2" stroke-width="1.98" stroke-opacity="0.20"/><line x1="1075.6" y1="385.3" x2="1060.5" y2="382.6" stroke-width="1.82" stroke-opacity="0.15"/><line x1="1097.1" y1="370.9" x2="1062.8" y2="361.5" stroke-width="1.30" stroke-opacity="0.11"/><line x1="1051.8" y1="391.9" x2="1023.7" y2="384.4" stroke-width="1.10" stroke-opacity="0.12"/><line x1="1107.7" y1="393.7" x2="1085.4" y2="390.2" stroke-width="2.15" stroke-opacity="0.11"/><line x1="1071.3" y1="364.5" x2="1054.4" y2="360.1" stroke-width="1.56" stroke-opacity="0.11"/><line x1="1096.9" y1="382.0" x2="1058.8" y2="376.0" stroke-width="1.20" stroke-opacity="0.17"/><line x1="1079.0" y1="336.9" x2="1052.1" y2="332.7" stroke-width="1.06" stroke-opacity="0.20"/><line x1="1075.9" y1="361.0" x2="1038.4" y2="351.5" stroke-width="1.84" stroke-opacity="0.11"/><line x1="1088.1" y1="398.4" x2="1064.4" y2="394.8" stroke-width="1.17" stroke-opacity="0.12"/><line x1="1109.4" y1="361.8" x2="1078.4" y2="355.4" stroke-width="1.05" stroke-opacity="0.16"/><line x1="1105.1" y1="347.0" x2="1087.2" y2="343.7" stroke-width="1.93" stroke-opacity="0.11"/><line x1="1064.5" y1="345.1" x2="1028.1" y2="340.0" stroke-width="2.09" stroke-opacity="0.11"/><line x1="1050.2" y1="390.1" x2="1031.7" y2="388.3" stroke-width="1.23" stroke-opacity="0.13"/><line x1="1096.3" y1="331.8" x2="1081.3" y2="328.2" stroke-width="1.41" stroke-opacity="0.12"/><line x1="1062.2" y1="333.7" x2="1029.2" y2="327.7" stroke-width="1.59" stroke-opacity="0.17"/><line x1="1104.5" y1="365.9" x2="1087.0" y2="362.8" stroke-width="1.07" stroke-opacity="0.19"/><line x1="1104.8" y1="390.7" x2="1077.2" y2="386.1" stroke-width="1.09" stroke-opacity="0.20"/><line x1="1083.5" y1="358.1" x2="1051.9" y2="352.6" stroke-width="1.11" stroke-opacity="0.19"/><line x1="1055.7" y1="372.6" x2="1039.1" y2="370.5" stroke-width="1.67" stroke-opacity="0.16"/><line x1="1072.8" y1="399.6" x2="1044.9" y2="395.0" stroke-width="1.14" stroke-opacity="0.16"/><line x1="1099.1" y1="389.7" x2="1068.7" y2="382.5" stroke-width="1.28" stroke-opacity="0.17"/></g></g>
<!-- (right feather merged) -->
<g filter="url(#blur1)"><g stroke="#ff0000" stroke-linecap="round" fill="none"><line x1="1275.2" y1="400.6" x2="1289.1" y2="373.8" stroke-width="1.13" stroke-opacity="0.14"/><line x1="1272.7" y1="439.9" x2="1285.3" y2="411.3" stroke-width="1.10" stroke-opacity="0.19"/><line x1="1313.2" y1="388.4" x2="1324.9" y2="368.7" stroke-width="1.68" stroke-opacity="0.18"/><line x1="1288.6" y1="430.5" x2="1300.5" y2="403.1" stroke-width="1.81" stroke-opacity="0.14"/><line x1="1305.0" y1="458.1" x2="1328.1" y2="423.5" stroke-width="1.44" stroke-opacity="0.16"/><line x1="1287.8" y1="399.1" x2="1304.4" y2="363.1" stroke-width="2.03" stroke-opacity="0.11"/><line x1="1266.8" y1="448.6" x2="1286.3" y2="417.0" stroke-width="2.18" stroke-opacity="0.18"/><line x1="1311.8" y1="435.2" x2="1326.8" y2="398.9" stroke-width="2.01" stroke-opacity="0.19"/><line x1="1256.7" y1="396.2" x2="1274.6" y2="359.2" stroke-width="1.03" stroke-opacity="0.13"/><line x1="1317.0" y1="431.0" x2="1329.9" y2="401.6" stroke-width="1.06" stroke-opacity="0.16"/><line x1="1304.6" y1="399.4" x2="1318.9" y2="370.1" stroke-width="1.88" stroke-opacity="0.14"/><line x1="1307.7" y1="431.1" x2="1316.4" y2="410.3" stroke-width="1.76" stroke-opacity="0.12"/><line x1="1297.4" y1="404.5" x2="1316.0" y2="369.2" stroke-width="1.35" stroke-opacity="0.14"/><line x1="1305.5" y1="390.2" x2="1319.6" y2="360.5" stroke-width="1.60" stroke-opacity="0.17"/><line x1="1296.7" y1="384.1" x2="1312.3" y2="356.3" stroke-width="1.38" stroke-opacity="0.10"/><line x1="1251.1" y1="392.4" x2="1263.2" y2="367.5" stroke-width="1.91" stroke-opacity="0.10"/><line x1="1247.6" y1="414.2" x2="1266.9" y2="377.9" stroke-width="1.98" stroke-opacity="0.18"/><line x1="1237.2" y1="457.6" x2="1245.3" y2="437.9" stroke-width="2.05" stroke-opacity="0.19"/><line x1="1287.6" y1="431.6" x2="1306.3" y2="394.8" stroke-width="1.04" stroke-opacity="0.11"/><line x1="1262.5" y1="452.1" x2="1282.9" y2="419.4" stroke-width="1.12" stroke-opacity="0.19"/><line x1="1314.4" y1="401.9" x2="1332.3" y2="368.7" stroke-width="1.39" stroke-opacity="0.14"/><line x1="1264.0" y1="410.0" x2="1275.8" y2="387.9" stroke-width="1.63" stroke-opacity="0.11"/><line x1="1320.6" y1="411.4" x2="1342.6" y2="375.9" stroke-width="1.30" stroke-opacity="0.18"/><line x1="1244.6" y1="397.8" x2="1264.3" y2="365.2" stroke-width="1.23" stroke-opacity="0.17"/><line x1="1307.3" y1="424.5" x2="1329.3" y2="388.0" stroke-width="2.12" stroke-opacity="0.14"/><line x1="1286.4" y1="437.2" x2="1307.2" y2="404.5" stroke-width="1.20" stroke-opacity="0.16"/><line x1="1236.8" y1="419.8" x2="1249.3" y2="393.5" stroke-width="1.62" stroke-opacity="0.11"/><line x1="1261.0" y1="420.7" x2="1272.5" y2="402.3" stroke-width="2.05" stroke-opacity="0.11"/><line x1="1315.5" y1="435.4" x2="1331.8" y2="404.1" stroke-width="1.96" stroke-opacity="0.16"/><line x1="1319.6" y1="420.5" x2="1341.6" y2="382.0" stroke-width="1.59" stroke-opacity="0.13"/><line x1="1245.1" y1="385.6" x2="1257.6" y2="366.1" stroke-width="1.87" stroke-opacity="0.13"/><line x1="1280.5" y1="395.5" x2="1293.0" y2="371.1" stroke-width="1.64" stroke-opacity="0.14"/><line x1="1245.9" y1="413.6" x2="1258.8" y2="388.2" stroke-width="1.73" stroke-opacity="0.13"/><line x1="1308.9" y1="438.3" x2="1317.6" y2="418.0" stroke-width="1.36" stroke-opacity="0.17"/><line x1="1302.4" y1="439.1" x2="1327.7" y2="399.3" stroke-width="1.71" stroke-opacity="0.13"/><line x1="1244.1" y1="411.5" x2="1268.9" y2="369.2" stroke-width="1.73" stroke-opacity="0.14"/><line x1="1323.8" y1="407.9" x2="1340.2" y2="381.2" stroke-width="1.82" stroke-opacity="0.18"/><line x1="1312.9" y1="446.5" x2="1332.1" y2="410.8" stroke-width="1.52" stroke-opacity="0.16"/><line x1="1266.2" y1="412.6" x2="1276.7" y2="389.5" stroke-width="1.60" stroke-opacity="0.19"/><line x1="1252.7" y1="392.4" x2="1264.5" y2="373.5" stroke-width="1.94" stroke-opacity="0.11"/><line x1="1313.5" y1="459.5" x2="1322.8" y2="440.5" stroke-width="1.18" stroke-opacity="0.18"/><line x1="1267.7" y1="394.6" x2="1291.0" y2="356.2" stroke-width="1.22" stroke-opacity="0.18"/><line x1="1273.8" y1="417.0" x2="1290.7" y2="380.4" stroke-width="1.36" stroke-opacity="0.14"/><line x1="1304.9" y1="420.4" x2="1320.5" y2="388.0" stroke-width="1.58" stroke-opacity="0.18"/><line x1="1313.5" y1="413.1" x2="1340.5" y2="372.9" stroke-width="1.36" stroke-opacity="0.15"/><line x1="1268.2" y1="427.5" x2="1294.0" y2="385.8" stroke-width="1.18" stroke-opacity="0.18"/><line x1="1255.0" y1="437.7" x2="1277.2" y2="397.1" stroke-width="2.03" stroke-opacity="0.11"/><line x1="1315.1" y1="405.7" x2="1333.4" y2="366.9" stroke-width="1.20" stroke-opacity="0.19"/><line x1="1273.7" y1="465.2" x2="1286.0" y2="441.5" stroke-width="1.05" stroke-opacity="0.13"/><line x1="1235.3" y1="425.2" x2="1250.4" y2="402.7" stroke-width="1.05" stroke-opacity="0.14"/><line x1="1323.1" y1="455.5" x2="1343.7" y2="421.8" stroke-width="1.36" stroke-opacity="0.11"/><line x1="1313.0" y1="442.6" x2="1325.2" y2="421.8" stroke-width="1.03" stroke-opacity="0.14"/><line x1="1237.9" y1="403.0" x2="1259.5" y2="363.5" stroke-width="1.65" stroke-opacity="0.17"/><line x1="1241.1" y1="405.9" x2="1252.3" y2="379.1" stroke-width="1.96" stroke-opacity="0.14"/><line x1="1275.7" y1="390.0" x2="1298.7" y2="348.8" stroke-width="1.63" stroke-opacity="0.10"/><line x1="1254.2" y1="392.9" x2="1270.3" y2="364.3" stroke-width="1.52" stroke-opacity="0.12"/><line x1="1296.4" y1="387.7" x2="1315.5" y2="342.3" stroke-width="1.62" stroke-opacity="0.15"/><line x1="1328.8" y1="429.9" x2="1343.5" y2="401.8" stroke-width="2.19" stroke-opacity="0.16"/><line x1="1255.4" y1="381.5" x2="1274.6" y2="342.3" stroke-width="1.77" stroke-opacity="0.17"/><line x1="1307.2" y1="446.2" x2="1318.6" y2="418.5" stroke-width="1.99" stroke-opacity="0.15"/><line x1="1247.5" y1="450.1" x2="1264.7" y2="420.8" stroke-width="1.99" stroke-opacity="0.16"/><line x1="1236.3" y1="449.9" x2="1250.8" y2="419.4" stroke-width="1.26" stroke-opacity="0.10"/><line x1="1234.2" y1="464.0" x2="1254.0" y2="434.6" stroke-width="1.32" stroke-opacity="0.15"/><line x1="1305.3" y1="397.2" x2="1321.3" y2="371.0" stroke-width="1.41" stroke-opacity="0.19"/><line x1="1242.4" y1="413.1" x2="1266.4" y2="373.1" stroke-width="1.48" stroke-opacity="0.19"/><line x1="1327.4" y1="424.7" x2="1346.4" y2="395.4" stroke-width="1.97" stroke-opacity="0.15"/><line x1="1302.7" y1="387.1" x2="1322.8" y2="354.8" stroke-width="1.40" stroke-opacity="0.15"/><line x1="1238.0" y1="439.5" x2="1252.3" y2="414.0" stroke-width="1.84" stroke-opacity="0.14"/><line x1="1265.2" y1="383.8" x2="1285.5" y2="342.5" stroke-width="1.35" stroke-opacity="0.20"/><line x1="1328.0" y1="465.3" x2="1339.0" y2="446.0" stroke-width="1.97" stroke-opacity="0.14"/><line x1="1297.9" y1="465.8" x2="1309.8" y2="444.6" stroke-width="1.06" stroke-opacity="0.18"/><line x1="1236.7" y1="450.1" x2="1250.6" y2="422.4" stroke-width="1.74" stroke-opacity="0.16"/><line x1="1297.9" y1="465.4" x2="1314.0" y2="438.7" stroke-width="1.65" stroke-opacity="0.16"/><line x1="1269.8" y1="438.5" x2="1280.7" y2="413.2" stroke-width="1.61" stroke-opacity="0.17"/><line x1="1268.7" y1="430.6" x2="1280.5" y2="405.3" stroke-width="2.21" stroke-opacity="0.14"/><line x1="1258.6" y1="462.5" x2="1272.4" y2="430.6" stroke-width="1.56" stroke-opacity="0.19"/><line x1="1319.9" y1="420.1" x2="1331.2" y2="400.5" stroke-width="1.40" stroke-opacity="0.18"/><line x1="1264.7" y1="385.8" x2="1284.3" y2="355.3" stroke-width="1.87" stroke-opacity="0.19"/><line x1="1322.7" y1="437.4" x2="1343.4" y2="398.7" stroke-width="1.26" stroke-opacity="0.11"/><line x1="1243.9" y1="451.1" x2="1253.9" y2="432.9" stroke-width="1.98" stroke-opacity="0.14"/><line x1="1285.2" y1="435.1" x2="1295.0" y2="414.7" stroke-width="1.88" stroke-opacity="0.20"/><line x1="1282.6" y1="449.2" x2="1300.0" y2="408.0" stroke-width="1.78" stroke-opacity="0.20"/><line x1="1275.0" y1="441.2" x2="1291.3" y2="415.6" stroke-width="1.78" stroke-opacity="0.18"/><line x1="1248.2" y1="467.0" x2="1266.1" y2="439.3" stroke-width="1.17" stroke-opacity="0.11"/><line x1="1245.3" y1="394.8" x2="1260.4" y2="369.2" stroke-width="2.14" stroke-opacity="0.13"/><line x1="1319.5" y1="456.1" x2="1333.1" y2="432.2" stroke-width="1.17" stroke-opacity="0.16"/><line x1="1260.3" y1="428.0" x2="1274.6" y2="396.0" stroke-width="1.20" stroke-opacity="0.19"/><line x1="1295.9" y1="444.9" x2="1316.2" y2="412.5" stroke-width="2.00" stroke-opacity="0.16"/><line x1="1232.8" y1="384.1" x2="1251.8" y2="349.7" stroke-width="1.93" stroke-opacity="0.17"/><line x1="1271.7" y1="437.5" x2="1288.9" y2="407.1" stroke-width="2.16" stroke-opacity="0.13"/><line x1="1278.3" y1="452.4" x2="1295.8" y2="415.8" stroke-width="1.09" stroke-opacity="0.11"/><line x1="1274.0" y1="423.6" x2="1286.7" y2="400.8" stroke-width="1.87" stroke-opacity="0.13"/><line x1="1303.4" y1="457.5" x2="1323.1" y2="412.3" stroke-width="1.69" stroke-opacity="0.14"/><line x1="1261.9" y1="422.0" x2="1273.7" y2="396.6" stroke-width="1.37" stroke-opacity="0.11"/><line x1="1268.4" y1="435.4" x2="1283.1" y2="412.2" stroke-width="1.41" stroke-opacity="0.12"/><line x1="1287.8" y1="408.1" x2="1307.9" y2="370.3" stroke-width="1.61" stroke-opacity="0.15"/><line x1="1260.9" y1="382.1" x2="1283.6" y2="339.4" stroke-width="1.28" stroke-opacity="0.20"/><line x1="1265.3" y1="384.5" x2="1284.1" y2="355.2" stroke-width="1.58" stroke-opacity="0.17"/><line x1="1283.7" y1="456.2" x2="1301.4" y2="428.5" stroke-width="1.93" stroke-opacity="0.17"/><line x1="1266.6" y1="416.1" x2="1281.9" y2="382.2" stroke-width="1.11" stroke-opacity="0.16"/><line x1="1280.4" y1="448.8" x2="1296.2" y2="425.2" stroke-width="1.16" stroke-opacity="0.17"/><line x1="1327.5" y1="415.5" x2="1346.8" y2="376.1" stroke-width="1.92" stroke-opacity="0.19"/><line x1="1249.9" y1="425.8" x2="1263.3" y2="393.5" stroke-width="1.42" stroke-opacity="0.11"/><line x1="1277.4" y1="421.1" x2="1295.4" y2="387.5" stroke-width="1.75" stroke-opacity="0.13"/><line x1="1246.3" y1="469.2" x2="1264.5" y2="431.1" stroke-width="2.01" stroke-opacity="0.13"/><line x1="1283.2" y1="443.8" x2="1298.5" y2="419.1" stroke-width="1.82" stroke-opacity="0.14"/><line x1="1328.0" y1="432.5" x2="1350.4" y2="394.8" stroke-width="1.05" stroke-opacity="0.17"/><line x1="1277.5" y1="467.0" x2="1300.1" y2="429.9" stroke-width="1.88" stroke-opacity="0.16"/><line x1="1288.4" y1="395.3" x2="1307.5" y2="361.5" stroke-width="1.20" stroke-opacity="0.18"/><line x1="1298.1" y1="382.8" x2="1317.2" y2="338.4" stroke-width="1.39" stroke-opacity="0.10"/><line x1="1245.1" y1="442.1" x2="1261.9" y2="414.5" stroke-width="2.06" stroke-opacity="0.19"/><line x1="1303.6" y1="385.6" x2="1313.6" y2="363.6" stroke-width="1.81" stroke-opacity="0.13"/><line x1="1282.5" y1="408.2" x2="1296.3" y2="387.1" stroke-width="1.44" stroke-opacity="0.13"/><line x1="1307.2" y1="444.9" x2="1327.0" y2="411.0" stroke-width="1.25" stroke-opacity="0.16"/><line x1="1254.7" y1="430.2" x2="1269.5" y2="408.0" stroke-width="1.36" stroke-opacity="0.13"/><line x1="1250.7" y1="443.4" x2="1263.8" y2="417.0" stroke-width="1.97" stroke-opacity="0.19"/><line x1="1257.3" y1="391.0" x2="1275.4" y2="354.9" stroke-width="1.99" stroke-opacity="0.20"/><line x1="1325.5" y1="452.4" x2="1337.8" y2="426.5" stroke-width="1.43" stroke-opacity="0.17"/><line x1="1274.2" y1="403.1" x2="1288.5" y2="371.8" stroke-width="2.13" stroke-opacity="0.15"/><line x1="1299.6" y1="392.4" x2="1318.3" y2="358.7" stroke-width="1.82" stroke-opacity="0.12"/><line x1="1283.1" y1="437.4" x2="1292.9" y2="418.2" stroke-width="1.14" stroke-opacity="0.17"/><line x1="1307.1" y1="380.5" x2="1327.0" y2="349.9" stroke-width="2.13" stroke-opacity="0.14"/><line x1="1317.8" y1="423.0" x2="1332.2" y2="401.3" stroke-width="1.79" stroke-opacity="0.13"/><line x1="1320.8" y1="388.1" x2="1338.5" y2="355.3" stroke-width="2.13" stroke-opacity="0.17"/><line x1="1321.3" y1="395.8" x2="1340.3" y2="353.3" stroke-width="2.21" stroke-opacity="0.19"/><line x1="1269.7" y1="424.6" x2="1296.3" y2="384.5" stroke-width="2.06" stroke-opacity="0.19"/><line x1="1230.9" y1="431.1" x2="1243.8" y2="411.8" stroke-width="2.20" stroke-opacity="0.13"/><line x1="1284.3" y1="424.5" x2="1310.0" y2="383.7" stroke-width="1.25" stroke-opacity="0.15"/><line x1="1241.3" y1="394.6" x2="1255.6" y2="364.0" stroke-width="1.90" stroke-opacity="0.12"/><line x1="1309.1" y1="431.1" x2="1326.5" y2="392.1" stroke-width="2.09" stroke-opacity="0.19"/><line x1="1312.7" y1="426.4" x2="1324.0" y2="406.8" stroke-width="1.19" stroke-opacity="0.12"/><line x1="1262.4" y1="402.3" x2="1274.0" y2="377.1" stroke-width="2.16" stroke-opacity="0.18"/><line x1="1260.2" y1="445.1" x2="1270.3" y2="427.4" stroke-width="1.09" stroke-opacity="0.17"/><line x1="1241.8" y1="407.6" x2="1256.9" y2="379.2" stroke-width="1.86" stroke-opacity="0.19"/><line x1="1261.1" y1="390.6" x2="1281.6" y2="347.7" stroke-width="1.28" stroke-opacity="0.16"/><line x1="1243.4" y1="393.8" x2="1264.1" y2="356.8" stroke-width="1.67" stroke-opacity="0.14"/><line x1="1277.1" y1="428.4" x2="1293.7" y2="392.1" stroke-width="1.92" stroke-opacity="0.12"/><line x1="1317.3" y1="387.4" x2="1334.2" y2="358.6" stroke-width="1.69" stroke-opacity="0.11"/><line x1="1236.2" y1="429.3" x2="1253.2" y2="398.5" stroke-width="1.41" stroke-opacity="0.11"/><line x1="1282.0" y1="390.5" x2="1294.7" y2="367.6" stroke-width="1.63" stroke-opacity="0.11"/><line x1="1310.9" y1="420.8" x2="1327.2" y2="389.4" stroke-width="1.57" stroke-opacity="0.11"/><line x1="1310.7" y1="445.1" x2="1327.5" y2="418.0" stroke-width="1.71" stroke-opacity="0.17"/><line x1="1234.5" y1="411.0" x2="1246.8" y2="392.8" stroke-width="1.10" stroke-opacity="0.19"/><line x1="1323.4" y1="382.9" x2="1340.1" y2="355.3" stroke-width="2.18" stroke-opacity="0.18"/><line x1="1294.6" y1="417.8" x2="1316.9" y2="373.3" stroke-width="2.10" stroke-opacity="0.19"/><line x1="1267.6" y1="441.4" x2="1286.6" y2="406.4" stroke-width="1.43" stroke-opacity="0.17"/><line x1="1247.8" y1="428.4" x2="1266.2" y2="397.5" stroke-width="1.02" stroke-opacity="0.12"/><line x1="1232.3" y1="406.9" x2="1251.5" y2="371.5" stroke-width="2.00" stroke-opacity="0.15"/><line x1="1254.8" y1="411.2" x2="1270.3" y2="387.5" stroke-width="1.15" stroke-opacity="0.17"/><line x1="1310.9" y1="417.7" x2="1334.1" y2="381.5" stroke-width="1.27" stroke-opacity="0.10"/><line x1="1240.1" y1="383.0" x2="1259.3" y2="350.3" stroke-width="1.90" stroke-opacity="0.10"/><line x1="1270.2" y1="401.1" x2="1284.4" y2="378.7" stroke-width="1.62" stroke-opacity="0.11"/><line x1="1258.9" y1="453.4" x2="1277.2" y2="415.7" stroke-width="1.82" stroke-opacity="0.16"/><line x1="1262.1" y1="407.2" x2="1274.2" y2="386.1" stroke-width="1.38" stroke-opacity="0.12"/><line x1="1236.1" y1="465.4" x2="1261.3" y2="426.4" stroke-width="1.53" stroke-opacity="0.16"/><line x1="1279.6" y1="467.5" x2="1303.7" y2="425.7" stroke-width="1.40" stroke-opacity="0.18"/><line x1="1271.6" y1="393.4" x2="1287.8" y2="366.6" stroke-width="2.03" stroke-opacity="0.15"/><line x1="1260.1" y1="443.7" x2="1284.1" y2="406.6" stroke-width="2.17" stroke-opacity="0.16"/><line x1="1285.7" y1="392.1" x2="1297.0" y2="367.2" stroke-width="2.12" stroke-opacity="0.16"/><line x1="1314.7" y1="388.3" x2="1331.9" y2="350.3" stroke-width="1.82" stroke-opacity="0.13"/><line x1="1290.3" y1="458.6" x2="1303.6" y2="436.7" stroke-width="1.69" stroke-opacity="0.17"/><line x1="1277.9" y1="458.3" x2="1294.5" y2="433.2" stroke-width="2.14" stroke-opacity="0.10"/><line x1="1326.2" y1="390.6" x2="1349.5" y2="346.3" stroke-width="1.74" stroke-opacity="0.12"/><line x1="1250.5" y1="462.4" x2="1269.4" y2="431.1" stroke-width="1.66" stroke-opacity="0.14"/><line x1="1265.9" y1="403.5" x2="1282.5" y2="372.3" stroke-width="2.19" stroke-opacity="0.11"/><line x1="1276.9" y1="455.6" x2="1298.1" y2="413.1" stroke-width="1.69" stroke-opacity="0.14"/><line x1="1252.1" y1="393.1" x2="1267.4" y2="369.9" stroke-width="1.52" stroke-opacity="0.16"/><line x1="1245.2" y1="409.7" x2="1261.9" y2="383.1" stroke-width="1.80" stroke-opacity="0.15"/><line x1="1298.5" y1="403.2" x2="1323.2" y2="366.0" stroke-width="1.60" stroke-opacity="0.16"/><line x1="1246.8" y1="451.5" x2="1259.6" y2="430.0" stroke-width="2.11" stroke-opacity="0.15"/><line x1="1284.2" y1="437.8" x2="1292.5" y2="417.6" stroke-width="2.14" stroke-opacity="0.18"/><line x1="1296.8" y1="448.8" x2="1314.0" y2="421.4" stroke-width="1.86" stroke-opacity="0.12"/><line x1="1230.9" y1="425.5" x2="1246.2" y2="398.3" stroke-width="1.75" stroke-opacity="0.17"/><line x1="1278.3" y1="423.9" x2="1288.0" y2="406.2" stroke-width="1.65" stroke-opacity="0.10"/><line x1="1257.5" y1="468.0" x2="1268.3" y2="450.5" stroke-width="1.98" stroke-opacity="0.17"/><line x1="1321.0" y1="389.6" x2="1330.2" y2="368.7" stroke-width="1.65" stroke-opacity="0.12"/><line x1="1311.5" y1="404.1" x2="1325.7" y2="375.5" stroke-width="1.69" stroke-opacity="0.14"/><line x1="1329.0" y1="400.3" x2="1350.6" y2="366.0" stroke-width="2.04" stroke-opacity="0.17"/><line x1="1306.0" y1="388.4" x2="1321.0" y2="360.9" stroke-width="1.03" stroke-opacity="0.11"/><line x1="1247.1" y1="425.0" x2="1264.3" y2="396.8" stroke-width="2.04" stroke-opacity="0.16"/><line x1="1239.5" y1="427.5" x2="1248.4" y2="408.2" stroke-width="2.08" stroke-opacity="0.19"/><line x1="1277.6" y1="384.2" x2="1289.7" y2="365.6" stroke-width="1.69" stroke-opacity="0.19"/><line x1="1233.3" y1="463.6" x2="1249.6" y2="439.1" stroke-width="1.92" stroke-opacity="0.16"/><line x1="1301.3" y1="415.8" x2="1310.3" y2="395.5" stroke-width="2.01" stroke-opacity="0.12"/><line x1="1268.9" y1="460.7" x2="1284.4" y2="435.0" stroke-width="2.20" stroke-opacity="0.11"/><line x1="1302.4" y1="425.1" x2="1321.4" y2="379.6" stroke-width="2.02" stroke-opacity="0.14"/><line x1="1264.1" y1="449.2" x2="1286.0" y2="405.8" stroke-width="1.06" stroke-opacity="0.18"/><line x1="1257.3" y1="469.3" x2="1272.7" y2="438.2" stroke-width="1.53" stroke-opacity="0.19"/><line x1="1298.0" y1="439.5" x2="1309.1" y2="419.8" stroke-width="1.87" stroke-opacity="0.18"/><line x1="1238.2" y1="393.9" x2="1258.6" y2="357.9" stroke-width="1.40" stroke-opacity="0.17"/><line x1="1240.7" y1="380.5" x2="1253.6" y2="354.3" stroke-width="1.18" stroke-opacity="0.13"/><line x1="1248.7" y1="420.4" x2="1265.3" y2="387.7" stroke-width="1.44" stroke-opacity="0.10"/><line x1="1239.3" y1="433.8" x2="1252.6" y2="407.2" stroke-width="1.48" stroke-opacity="0.13"/><line x1="1238.5" y1="461.1" x2="1264.7" y2="421.9" stroke-width="1.22" stroke-opacity="0.16"/><line x1="1268.1" y1="392.5" x2="1281.7" y2="366.8" stroke-width="1.54" stroke-opacity="0.11"/><line x1="1272.1" y1="423.6" x2="1281.5" y2="403.4" stroke-width="1.76" stroke-opacity="0.12"/><line x1="1289.4" y1="397.6" x2="1299.4" y2="376.7" stroke-width="1.42" stroke-opacity="0.19"/><line x1="1292.0" y1="452.4" x2="1305.1" y2="425.5" stroke-width="2.04" stroke-opacity="0.18"/><line x1="1327.4" y1="392.3" x2="1343.7" y2="367.5" stroke-width="1.39" stroke-opacity="0.12"/><line x1="1326.5" y1="467.2" x2="1341.0" y2="442.4" stroke-width="1.71" stroke-opacity="0.15"/></g></g>
<!-- merged body -->
<g filter="url(#tex)" fill="#ff0000" opacity="0.68">
 <path d="M1045 352 C1070 332 1100 322 1125 320 C1160 322 1185 334 1198 358 L1205 395 L1150 420 L1085 410 L1050 398 L1042 372 Z"/>
 <path d="M1198 372 C1240 362 1290 350 1325 348 C1342 380 1346 425 1336 452 C1318 465 1300 472 1290 482 L1240 470 L1200 440 Z"/>
 <path d="M1062 398 C1100 385 1150 375 1200 368 C1245 372 1290 385 1305 420 L1302 470 L1298 515 L1260 530 L1225 522 L1190 525 L1150 520 C1120 500 1095 470 1072 440 Z"/>
</g>
<g filter="url(#blur4)" fill="#ff0000">
 <path d="M1100 400 L1200 380 L1280 410 L1295 470 L1280 510 L1220 515 L1160 490 L1110 440 Z" opacity="0.3"/>
 <path d="M1060 340 L1100 326 L1160 328 L1190 350 L1140 365 L1080 370 Z" fill="#ffffff" opacity="0.2"/>
 <path d="M1230 372 L1320 352 L1336 420 L1300 440 L1250 420 Z" fill="#ffffff" opacity="0.1"/>
</g>
<g filter="url(#tex)" fill="#ff0000">
 <path d="M1148 525 C1160 512 1190 510 1225 518 L1232 560 L1215 582 L1160 582 L1148 555 Z" opacity="0.7"/>
</g>
<g filter="url(#blur1)"><g stroke="#ffffff" stroke-linecap="round" fill="none"><line x1="1240.5" y1="420.1" x2="1270.1" y2="365.9" stroke-width="1.59" stroke-opacity="0.19"/><line x1="1277.2" y1="433.7" x2="1305.5" y2="385.7" stroke-width="1.48" stroke-opacity="0.34"/><line x1="1289.4" y1="425.1" x2="1309.8" y2="392.9" stroke-width="1.85" stroke-opacity="0.32"/><line x1="1258.0" y1="429.9" x2="1282.2" y2="382.2" stroke-width="1.76" stroke-opacity="0.29"/><line x1="1297.9" y1="395.9" x2="1332.4" y2="335.5" stroke-width="1.53" stroke-opacity="0.25"/><line x1="1311.6" y1="445.3" x2="1338.9" y2="404.1" stroke-width="1.96" stroke-opacity="0.24"/><line x1="1271.4" y1="441.1" x2="1287.2" y2="416.9" stroke-width="1.36" stroke-opacity="0.29"/><line x1="1282.9" y1="393.5" x2="1319.8" y2="334.9" stroke-width="1.80" stroke-opacity="0.24"/><line x1="1316.4" y1="424.4" x2="1328.0" y2="401.8" stroke-width="1.54" stroke-opacity="0.26"/><line x1="1276.0" y1="436.0" x2="1297.6" y2="396.5" stroke-width="1.62" stroke-opacity="0.31"/><line x1="1267.5" y1="417.6" x2="1278.7" y2="394.0" stroke-width="2.04" stroke-opacity="0.25"/><line x1="1227.2" y1="465.3" x2="1241.8" y2="437.5" stroke-width="1.19" stroke-opacity="0.25"/><line x1="1265.7" y1="428.1" x2="1289.6" y2="390.3" stroke-width="1.30" stroke-opacity="0.23"/><line x1="1300.1" y1="399.2" x2="1333.4" y2="345.5" stroke-width="1.14" stroke-opacity="0.29"/><line x1="1318.3" y1="409.5" x2="1332.7" y2="380.0" stroke-width="2.03" stroke-opacity="0.27"/><line x1="1239.3" y1="422.4" x2="1256.8" y2="394.1" stroke-width="0.99" stroke-opacity="0.25"/><line x1="1279.5" y1="405.8" x2="1304.3" y2="360.5" stroke-width="1.19" stroke-opacity="0.30"/><line x1="1294.0" y1="454.7" x2="1305.8" y2="429.5" stroke-width="1.17" stroke-opacity="0.33"/><line x1="1249.2" y1="426.6" x2="1270.0" y2="396.2" stroke-width="1.68" stroke-opacity="0.27"/><line x1="1277.7" y1="438.9" x2="1302.0" y2="393.6" stroke-width="1.65" stroke-opacity="0.32"/><line x1="1300.4" y1="446.5" x2="1320.4" y2="413.7" stroke-width="1.11" stroke-opacity="0.19"/><line x1="1227.4" y1="414.4" x2="1245.1" y2="386.3" stroke-width="1.43" stroke-opacity="0.26"/><line x1="1229.5" y1="420.7" x2="1247.0" y2="392.3" stroke-width="1.68" stroke-opacity="0.30"/><line x1="1320.0" y1="434.4" x2="1340.4" y2="392.0" stroke-width="1.47" stroke-opacity="0.23"/><line x1="1220.6" y1="418.7" x2="1231.6" y2="395.8" stroke-width="2.04" stroke-opacity="0.32"/><line x1="1268.1" y1="429.6" x2="1295.1" y2="380.8" stroke-width="1.51" stroke-opacity="0.32"/><line x1="1223.7" y1="392.5" x2="1251.0" y2="339.9" stroke-width="1.56" stroke-opacity="0.22"/><line x1="1232.7" y1="426.6" x2="1264.6" y2="377.7" stroke-width="1.09" stroke-opacity="0.27"/><line x1="1227.0" y1="452.0" x2="1256.5" y2="397.4" stroke-width="1.01" stroke-opacity="0.32"/><line x1="1290.5" y1="433.7" x2="1320.1" y2="370.8" stroke-width="1.80" stroke-opacity="0.32"/><line x1="1246.3" y1="469.9" x2="1267.6" y2="430.1" stroke-width="1.45" stroke-opacity="0.32"/><line x1="1319.4" y1="452.1" x2="1339.2" y2="422.4" stroke-width="1.35" stroke-opacity="0.28"/><line x1="1289.6" y1="440.6" x2="1303.7" y2="411.4" stroke-width="1.19" stroke-opacity="0.21"/><line x1="1221.2" y1="418.1" x2="1240.3" y2="385.6" stroke-width="1.75" stroke-opacity="0.23"/><line x1="1245.4" y1="411.4" x2="1282.6" y2="359.8" stroke-width="1.07" stroke-opacity="0.29"/><line x1="1316.1" y1="452.9" x2="1355.0" y2="399.1" stroke-width="1.10" stroke-opacity="0.33"/><line x1="1305.9" y1="410.0" x2="1337.8" y2="362.7" stroke-width="1.72" stroke-opacity="0.31"/><line x1="1266.4" y1="436.2" x2="1284.4" y2="403.7" stroke-width="1.67" stroke-opacity="0.25"/><line x1="1307.4" y1="397.4" x2="1329.6" y2="354.6" stroke-width="1.37" stroke-opacity="0.34"/><line x1="1314.8" y1="416.2" x2="1328.6" y2="395.2" stroke-width="1.78" stroke-opacity="0.30"/><line x1="1263.1" y1="443.1" x2="1280.4" y2="405.8" stroke-width="1.20" stroke-opacity="0.27"/><line x1="1260.1" y1="406.9" x2="1280.8" y2="376.2" stroke-width="1.61" stroke-opacity="0.23"/><line x1="1274.4" y1="428.8" x2="1296.0" y2="394.6" stroke-width="1.07" stroke-opacity="0.18"/><line x1="1297.3" y1="426.8" x2="1314.5" y2="401.5" stroke-width="0.96" stroke-opacity="0.25"/><line x1="1315.6" y1="406.2" x2="1339.8" y2="355.7" stroke-width="1.14" stroke-opacity="0.29"/><line x1="1312.9" y1="411.9" x2="1337.7" y2="363.4" stroke-width="1.97" stroke-opacity="0.24"/><line x1="1232.4" y1="421.7" x2="1253.1" y2="389.0" stroke-width="1.69" stroke-opacity="0.22"/><line x1="1288.9" y1="390.1" x2="1309.0" y2="348.2" stroke-width="1.72" stroke-opacity="0.21"/><line x1="1216.0" y1="445.6" x2="1252.2" y2="395.6" stroke-width="1.11" stroke-opacity="0.25"/><line x1="1222.4" y1="420.6" x2="1247.1" y2="368.3" stroke-width="1.95" stroke-opacity="0.23"/><line x1="1229.4" y1="451.9" x2="1254.8" y2="398.8" stroke-width="1.12" stroke-opacity="0.35"/><line x1="1270.7" y1="390.7" x2="1297.2" y2="343.4" stroke-width="1.66" stroke-opacity="0.30"/><line x1="1230.9" y1="422.9" x2="1262.4" y2="376.8" stroke-width="1.07" stroke-opacity="0.19"/><line x1="1294.0" y1="437.2" x2="1318.6" y2="402.8" stroke-width="1.12" stroke-opacity="0.23"/><line x1="1244.1" y1="396.7" x2="1269.9" y2="354.1" stroke-width="1.83" stroke-opacity="0.28"/><line x1="1287.5" y1="457.8" x2="1312.8" y2="409.4" stroke-width="1.53" stroke-opacity="0.27"/><line x1="1293.5" y1="413.6" x2="1309.2" y2="391.1" stroke-width="1.51" stroke-opacity="0.34"/><line x1="1226.8" y1="430.0" x2="1253.0" y2="385.3" stroke-width="2.07" stroke-opacity="0.35"/><line x1="1313.1" y1="400.6" x2="1345.7" y2="345.8" stroke-width="1.72" stroke-opacity="0.24"/><line x1="1295.1" y1="466.4" x2="1319.5" y2="411.9" stroke-width="1.25" stroke-opacity="0.19"/><line x1="1219.2" y1="394.8" x2="1249.5" y2="342.5" stroke-width="1.52" stroke-opacity="0.28"/><line x1="1258.6" y1="446.1" x2="1273.2" y2="421.4" stroke-width="1.27" stroke-opacity="0.28"/><line x1="1247.5" y1="430.9" x2="1266.5" y2="402.5" stroke-width="1.40" stroke-opacity="0.27"/><line x1="1281.6" y1="456.8" x2="1304.9" y2="406.2" stroke-width="1.78" stroke-opacity="0.30"/><line x1="1303.9" y1="394.6" x2="1318.0" y2="369.4" stroke-width="1.64" stroke-opacity="0.25"/><line x1="1247.5" y1="449.3" x2="1272.5" y2="396.7" stroke-width="1.75" stroke-opacity="0.30"/><line x1="1232.2" y1="466.2" x2="1258.9" y2="425.7" stroke-width="1.15" stroke-opacity="0.30"/><line x1="1228.3" y1="452.5" x2="1249.4" y2="422.0" stroke-width="0.99" stroke-opacity="0.31"/><line x1="1299.7" y1="411.8" x2="1314.7" y2="388.3" stroke-width="1.05" stroke-opacity="0.28"/><line x1="1262.8" y1="418.8" x2="1287.1" y2="378.0" stroke-width="1.25" stroke-opacity="0.24"/><line x1="1225.8" y1="435.9" x2="1251.7" y2="384.5" stroke-width="1.01" stroke-opacity="0.26"/><line x1="1305.6" y1="409.6" x2="1327.7" y2="369.0" stroke-width="2.00" stroke-opacity="0.20"/><line x1="1305.0" y1="434.2" x2="1340.9" y2="378.7" stroke-width="1.32" stroke-opacity="0.25"/><line x1="1258.7" y1="447.6" x2="1274.4" y2="413.9" stroke-width="1.52" stroke-opacity="0.24"/><line x1="1309.7" y1="404.3" x2="1345.5" y2="354.7" stroke-width="1.04" stroke-opacity="0.34"/><line x1="1263.8" y1="412.6" x2="1293.3" y2="356.9" stroke-width="0.97" stroke-opacity="0.27"/><line x1="1236.1" y1="435.1" x2="1256.3" y2="402.1" stroke-width="1.62" stroke-opacity="0.26"/><line x1="1266.8" y1="451.8" x2="1286.1" y2="424.1" stroke-width="1.23" stroke-opacity="0.31"/><line x1="1215.7" y1="422.8" x2="1232.4" y2="391.5" stroke-width="1.94" stroke-opacity="0.32"/><line x1="1314.9" y1="390.1" x2="1345.5" y2="345.0" stroke-width="1.08" stroke-opacity="0.30"/><line x1="1270.6" y1="409.1" x2="1290.3" y2="366.2" stroke-width="1.76" stroke-opacity="0.35"/><line x1="1224.8" y1="463.7" x2="1257.7" y2="407.2" stroke-width="1.38" stroke-opacity="0.30"/><line x1="1317.3" y1="396.8" x2="1330.0" y2="370.4" stroke-width="1.04" stroke-opacity="0.32"/><line x1="1274.6" y1="424.8" x2="1305.5" y2="363.8" stroke-width="1.31" stroke-opacity="0.22"/><line x1="1299.1" y1="446.1" x2="1326.2" y2="394.7" stroke-width="1.04" stroke-opacity="0.22"/><line x1="1236.3" y1="452.4" x2="1258.7" y2="406.2" stroke-width="1.48" stroke-opacity="0.20"/><line x1="1257.7" y1="432.9" x2="1288.2" y2="371.6" stroke-width="1.26" stroke-opacity="0.23"/><line x1="1227.6" y1="402.6" x2="1258.8" y2="356.2" stroke-width="1.01" stroke-opacity="0.30"/><line x1="1302.8" y1="416.2" x2="1316.0" y2="390.3" stroke-width="1.54" stroke-opacity="0.24"/><line x1="1286.1" y1="410.8" x2="1314.8" y2="347.4" stroke-width="1.47" stroke-opacity="0.25"/></g><g stroke="#ffffff" stroke-linecap="round" fill="none"><line x1="1142.3" y1="350.0" x2="1105.2" y2="339.6" stroke-width="0.91" stroke-opacity="0.17"/><line x1="1151.3" y1="394.0" x2="1127.1" y2="387.0" stroke-width="1.56" stroke-opacity="0.21"/><line x1="1130.9" y1="369.9" x2="1101.7" y2="361.7" stroke-width="0.97" stroke-opacity="0.15"/><line x1="1159.3" y1="361.6" x2="1135.2" y2="354.3" stroke-width="1.25" stroke-opacity="0.27"/><line x1="1064.7" y1="362.7" x2="1038.7" y2="356.7" stroke-width="1.31" stroke-opacity="0.27"/><line x1="1063.2" y1="376.0" x2="1036.6" y2="372.0" stroke-width="1.19" stroke-opacity="0.18"/><line x1="1157.2" y1="337.1" x2="1113.0" y2="330.1" stroke-width="1.33" stroke-opacity="0.19"/><line x1="1120.6" y1="338.7" x2="1089.7" y2="334.5" stroke-width="1.83" stroke-opacity="0.18"/><line x1="1117.8" y1="372.8" x2="1067.7" y2="358.9" stroke-width="1.72" stroke-opacity="0.30"/><line x1="1099.5" y1="367.7" x2="1061.8" y2="356.2" stroke-width="1.31" stroke-opacity="0.23"/><line x1="1079.8" y1="354.1" x2="1052.2" y2="345.8" stroke-width="0.96" stroke-opacity="0.27"/><line x1="1169.1" y1="366.8" x2="1120.9" y2="351.1" stroke-width="1.01" stroke-opacity="0.30"/><line x1="1132.3" y1="351.0" x2="1081.9" y2="335.6" stroke-width="1.95" stroke-opacity="0.16"/><line x1="1084.1" y1="385.8" x2="1033.1" y2="376.5" stroke-width="1.79" stroke-opacity="0.28"/><line x1="1079.4" y1="370.6" x2="1028.8" y2="357.6" stroke-width="0.93" stroke-opacity="0.29"/><line x1="1137.1" y1="391.9" x2="1095.6" y2="382.5" stroke-width="1.94" stroke-opacity="0.18"/><line x1="1157.0" y1="364.5" x2="1125.3" y2="357.9" stroke-width="1.14" stroke-opacity="0.16"/><line x1="1084.1" y1="366.6" x2="1064.9" y2="360.7" stroke-width="1.04" stroke-opacity="0.18"/><line x1="1138.9" y1="390.1" x2="1085.9" y2="380.9" stroke-width="1.52" stroke-opacity="0.15"/><line x1="1160.9" y1="381.5" x2="1109.2" y2="366.3" stroke-width="1.29" stroke-opacity="0.29"/><line x1="1163.6" y1="358.7" x2="1139.9" y2="354.7" stroke-width="1.07" stroke-opacity="0.17"/><line x1="1164.4" y1="382.5" x2="1107.6" y2="368.6" stroke-width="1.92" stroke-opacity="0.18"/><line x1="1136.3" y1="390.7" x2="1085.4" y2="383.0" stroke-width="1.08" stroke-opacity="0.24"/><line x1="1093.8" y1="376.3" x2="1069.5" y2="369.9" stroke-width="1.90" stroke-opacity="0.29"/><line x1="1103.1" y1="394.7" x2="1044.8" y2="388.1" stroke-width="1.87" stroke-opacity="0.24"/><line x1="1166.4" y1="348.3" x2="1125.7" y2="335.6" stroke-width="1.68" stroke-opacity="0.17"/><line x1="1086.2" y1="393.9" x2="1060.6" y2="386.3" stroke-width="1.64" stroke-opacity="0.16"/><line x1="1130.3" y1="388.2" x2="1092.9" y2="382.2" stroke-width="0.97" stroke-opacity="0.19"/><line x1="1088.2" y1="341.5" x2="1068.5" y2="337.8" stroke-width="1.92" stroke-opacity="0.26"/><line x1="1157.3" y1="364.6" x2="1123.0" y2="356.9" stroke-width="1.40" stroke-opacity="0.17"/><line x1="1155.0" y1="374.1" x2="1108.0" y2="367.5" stroke-width="1.79" stroke-opacity="0.16"/><line x1="1092.4" y1="354.1" x2="1034.8" y2="347.2" stroke-width="1.29" stroke-opacity="0.18"/><line x1="1140.5" y1="367.8" x2="1085.0" y2="360.9" stroke-width="1.54" stroke-opacity="0.24"/><line x1="1113.1" y1="336.9" x2="1056.0" y2="328.8" stroke-width="1.06" stroke-opacity="0.28"/><line x1="1071.1" y1="347.3" x2="1044.4" y2="340.5" stroke-width="1.67" stroke-opacity="0.26"/><line x1="1089.2" y1="351.9" x2="1059.9" y2="348.5" stroke-width="1.78" stroke-opacity="0.24"/><line x1="1076.9" y1="356.6" x2="1040.3" y2="350.5" stroke-width="1.53" stroke-opacity="0.25"/><line x1="1082.0" y1="336.5" x2="1055.5" y2="332.1" stroke-width="1.79" stroke-opacity="0.16"/><line x1="1093.9" y1="358.8" x2="1055.5" y2="349.3" stroke-width="1.47" stroke-opacity="0.16"/><line x1="1080.3" y1="388.1" x2="1046.2" y2="381.3" stroke-width="1.39" stroke-opacity="0.19"/><line x1="1084.9" y1="351.1" x2="1063.2" y2="345.3" stroke-width="0.99" stroke-opacity="0.25"/><line x1="1097.8" y1="367.5" x2="1040.5" y2="354.2" stroke-width="1.78" stroke-opacity="0.23"/><line x1="1150.0" y1="360.1" x2="1110.3" y2="348.4" stroke-width="1.83" stroke-opacity="0.22"/><line x1="1112.4" y1="339.7" x2="1058.1" y2="325.6" stroke-width="1.85" stroke-opacity="0.23"/><line x1="1148.0" y1="375.7" x2="1103.6" y2="369.8" stroke-width="1.08" stroke-opacity="0.26"/><line x1="1168.3" y1="393.3" x2="1116.4" y2="386.5" stroke-width="1.94" stroke-opacity="0.21"/><line x1="1107.9" y1="394.8" x2="1064.6" y2="382.4" stroke-width="1.86" stroke-opacity="0.19"/><line x1="1160.6" y1="339.0" x2="1125.7" y2="332.4" stroke-width="1.19" stroke-opacity="0.20"/><line x1="1110.4" y1="387.4" x2="1060.4" y2="375.4" stroke-width="1.34" stroke-opacity="0.23"/><line x1="1105.6" y1="343.9" x2="1063.6" y2="332.6" stroke-width="1.87" stroke-opacity="0.29"/><line x1="1121.9" y1="341.1" x2="1091.2" y2="334.3" stroke-width="1.33" stroke-opacity="0.20"/><line x1="1102.1" y1="364.1" x2="1058.1" y2="359.2" stroke-width="1.05" stroke-opacity="0.19"/><line x1="1127.0" y1="376.6" x2="1106.3" y2="370.4" stroke-width="1.15" stroke-opacity="0.20"/><line x1="1142.0" y1="390.3" x2="1086.5" y2="384.2" stroke-width="1.22" stroke-opacity="0.27"/><line x1="1090.8" y1="364.5" x2="1043.4" y2="358.5" stroke-width="1.04" stroke-opacity="0.28"/><line x1="1167.2" y1="361.6" x2="1114.8" y2="353.1" stroke-width="1.58" stroke-opacity="0.21"/><line x1="1080.7" y1="347.7" x2="1029.5" y2="334.1" stroke-width="1.81" stroke-opacity="0.26"/><line x1="1150.3" y1="365.9" x2="1124.3" y2="361.5" stroke-width="1.04" stroke-opacity="0.23"/><line x1="1153.6" y1="387.8" x2="1132.7" y2="384.7" stroke-width="1.78" stroke-opacity="0.27"/><line x1="1087.4" y1="362.4" x2="1032.5" y2="348.2" stroke-width="1.76" stroke-opacity="0.19"/><line x1="1115.6" y1="373.1" x2="1090.8" y2="370.4" stroke-width="1.52" stroke-opacity="0.21"/><line x1="1079.5" y1="387.2" x2="1036.7" y2="379.5" stroke-width="1.84" stroke-opacity="0.17"/><line x1="1142.4" y1="376.3" x2="1111.5" y2="370.5" stroke-width="1.50" stroke-opacity="0.17"/><line x1="1166.1" y1="386.4" x2="1121.6" y2="375.2" stroke-width="1.33" stroke-opacity="0.19"/><line x1="1062.2" y1="381.8" x2="1011.8" y2="376.4" stroke-width="1.58" stroke-opacity="0.29"/><line x1="1126.1" y1="335.5" x2="1097.1" y2="327.4" stroke-width="1.92" stroke-opacity="0.20"/><line x1="1130.7" y1="360.4" x2="1096.2" y2="354.2" stroke-width="1.39" stroke-opacity="0.19"/><line x1="1134.5" y1="384.5" x2="1098.9" y2="379.9" stroke-width="1.60" stroke-opacity="0.23"/><line x1="1152.8" y1="357.5" x2="1108.1" y2="346.9" stroke-width="1.01" stroke-opacity="0.19"/><line x1="1067.0" y1="394.3" x2="1023.2" y2="381.5" stroke-width="1.65" stroke-opacity="0.19"/></g><g stroke="#ff0000" stroke-linecap="round" fill="none"><line x1="1319.2" y1="406.9" x2="1331.9" y2="385.9" stroke-width="2.09" stroke-opacity="0.24"/><line x1="1310.2" y1="434.0" x2="1330.2" y2="399.6" stroke-width="1.91" stroke-opacity="0.22"/><line x1="1329.7" y1="403.3" x2="1344.4" y2="374.3" stroke-width="1.97" stroke-opacity="0.13"/><line x1="1287.2" y1="397.1" x2="1304.6" y2="359.1" stroke-width="2.07" stroke-opacity="0.19"/><line x1="1320.7" y1="440.5" x2="1339.4" y2="410.6" stroke-width="2.18" stroke-opacity="0.23"/><line x1="1248.1" y1="388.8" x2="1258.2" y2="367.2" stroke-width="2.04" stroke-opacity="0.23"/><line x1="1248.3" y1="441.2" x2="1260.1" y2="413.5" stroke-width="2.02" stroke-opacity="0.17"/><line x1="1260.7" y1="450.9" x2="1273.4" y2="423.8" stroke-width="2.15" stroke-opacity="0.16"/><line x1="1277.1" y1="458.0" x2="1297.7" y2="426.6" stroke-width="2.20" stroke-opacity="0.13"/><line x1="1280.0" y1="458.1" x2="1293.6" y2="429.7" stroke-width="2.16" stroke-opacity="0.13"/><line x1="1243.7" y1="398.0" x2="1259.3" y2="369.8" stroke-width="1.66" stroke-opacity="0.24"/><line x1="1261.6" y1="444.4" x2="1281.9" y2="406.1" stroke-width="1.30" stroke-opacity="0.20"/><line x1="1293.4" y1="380.4" x2="1308.0" y2="356.3" stroke-width="2.04" stroke-opacity="0.15"/><line x1="1279.0" y1="448.7" x2="1290.1" y2="429.0" stroke-width="1.59" stroke-opacity="0.20"/><line x1="1326.5" y1="414.5" x2="1335.3" y2="395.3" stroke-width="1.10" stroke-opacity="0.17"/><line x1="1262.2" y1="455.0" x2="1275.1" y2="432.7" stroke-width="1.39" stroke-opacity="0.20"/><line x1="1299.4" y1="411.0" x2="1310.0" y2="389.7" stroke-width="1.29" stroke-opacity="0.20"/><line x1="1312.4" y1="406.8" x2="1327.1" y2="382.1" stroke-width="1.51" stroke-opacity="0.20"/><line x1="1318.8" y1="469.6" x2="1335.2" y2="444.1" stroke-width="1.32" stroke-opacity="0.17"/><line x1="1324.8" y1="462.6" x2="1338.2" y2="433.5" stroke-width="1.25" stroke-opacity="0.22"/><line x1="1303.4" y1="433.1" x2="1314.6" y2="410.6" stroke-width="1.13" stroke-opacity="0.21"/><line x1="1317.7" y1="403.0" x2="1331.5" y2="369.7" stroke-width="1.91" stroke-opacity="0.25"/><line x1="1295.4" y1="381.8" x2="1313.8" y2="345.5" stroke-width="1.77" stroke-opacity="0.17"/><line x1="1277.4" y1="393.8" x2="1297.6" y2="358.2" stroke-width="1.91" stroke-opacity="0.16"/><line x1="1296.2" y1="404.3" x2="1311.6" y2="369.3" stroke-width="1.21" stroke-opacity="0.23"/><line x1="1301.9" y1="390.6" x2="1311.1" y2="369.1" stroke-width="1.33" stroke-opacity="0.15"/><line x1="1256.3" y1="427.1" x2="1269.5" y2="404.6" stroke-width="1.13" stroke-opacity="0.16"/><line x1="1279.6" y1="398.7" x2="1300.6" y2="355.5" stroke-width="1.93" stroke-opacity="0.13"/><line x1="1320.7" y1="455.2" x2="1336.9" y2="418.5" stroke-width="1.72" stroke-opacity="0.14"/><line x1="1302.4" y1="389.1" x2="1314.0" y2="364.0" stroke-width="1.45" stroke-opacity="0.25"/><line x1="1276.4" y1="389.0" x2="1286.1" y2="365.7" stroke-width="2.09" stroke-opacity="0.16"/><line x1="1261.3" y1="446.5" x2="1273.1" y2="426.9" stroke-width="2.15" stroke-opacity="0.13"/><line x1="1296.3" y1="395.3" x2="1310.4" y2="368.0" stroke-width="2.19" stroke-opacity="0.20"/><line x1="1239.3" y1="453.3" x2="1250.8" y2="430.6" stroke-width="1.42" stroke-opacity="0.25"/><line x1="1268.6" y1="456.6" x2="1290.4" y2="418.4" stroke-width="1.22" stroke-opacity="0.22"/><line x1="1299.6" y1="385.3" x2="1319.2" y2="341.1" stroke-width="1.82" stroke-opacity="0.18"/><line x1="1310.2" y1="441.1" x2="1321.6" y2="418.3" stroke-width="1.12" stroke-opacity="0.17"/><line x1="1298.4" y1="455.5" x2="1318.1" y2="410.4" stroke-width="1.22" stroke-opacity="0.24"/><line x1="1271.1" y1="384.1" x2="1283.2" y2="359.1" stroke-width="1.93" stroke-opacity="0.21"/><line x1="1306.8" y1="431.9" x2="1327.3" y2="401.2" stroke-width="1.51" stroke-opacity="0.21"/><line x1="1282.3" y1="443.1" x2="1293.7" y2="423.2" stroke-width="1.52" stroke-opacity="0.16"/><line x1="1297.6" y1="414.6" x2="1319.3" y2="375.0" stroke-width="1.15" stroke-opacity="0.25"/><line x1="1294.3" y1="394.1" x2="1318.6" y2="355.7" stroke-width="1.17" stroke-opacity="0.23"/><line x1="1279.2" y1="401.7" x2="1298.0" y2="356.3" stroke-width="1.89" stroke-opacity="0.15"/><line x1="1270.3" y1="401.1" x2="1288.0" y2="372.4" stroke-width="2.16" stroke-opacity="0.18"/><line x1="1274.7" y1="390.7" x2="1292.1" y2="360.4" stroke-width="1.60" stroke-opacity="0.14"/><line x1="1285.7" y1="380.0" x2="1296.8" y2="360.2" stroke-width="1.46" stroke-opacity="0.20"/><line x1="1280.8" y1="398.6" x2="1302.9" y2="365.1" stroke-width="1.15" stroke-opacity="0.17"/><line x1="1252.3" y1="420.9" x2="1270.4" y2="388.8" stroke-width="1.91" stroke-opacity="0.18"/><line x1="1301.6" y1="390.3" x2="1319.4" y2="351.4" stroke-width="2.13" stroke-opacity="0.17"/><line x1="1326.4" y1="406.3" x2="1344.5" y2="375.5" stroke-width="1.29" stroke-opacity="0.13"/><line x1="1244.0" y1="444.5" x2="1260.5" y2="406.3" stroke-width="1.32" stroke-opacity="0.20"/><line x1="1323.0" y1="415.4" x2="1340.6" y2="386.6" stroke-width="1.22" stroke-opacity="0.21"/><line x1="1271.4" y1="463.4" x2="1293.4" y2="424.0" stroke-width="1.65" stroke-opacity="0.22"/><line x1="1295.8" y1="466.1" x2="1307.1" y2="444.8" stroke-width="1.14" stroke-opacity="0.19"/><line x1="1323.5" y1="455.5" x2="1339.8" y2="425.1" stroke-width="1.30" stroke-opacity="0.24"/><line x1="1287.9" y1="445.7" x2="1298.6" y2="424.4" stroke-width="2.19" stroke-opacity="0.20"/><line x1="1280.4" y1="414.6" x2="1307.3" y2="373.2" stroke-width="1.42" stroke-opacity="0.22"/><line x1="1326.4" y1="467.3" x2="1339.8" y2="436.6" stroke-width="1.96" stroke-opacity="0.18"/><line x1="1304.8" y1="406.9" x2="1326.8" y2="372.2" stroke-width="2.26" stroke-opacity="0.21"/><line x1="1293.3" y1="398.1" x2="1309.9" y2="363.1" stroke-width="1.93" stroke-opacity="0.17"/><line x1="1328.1" y1="438.5" x2="1351.1" y2="395.5" stroke-width="1.49" stroke-opacity="0.21"/><line x1="1241.5" y1="411.7" x2="1258.1" y2="381.6" stroke-width="1.61" stroke-opacity="0.21"/><line x1="1304.8" y1="455.7" x2="1320.0" y2="431.5" stroke-width="1.74" stroke-opacity="0.23"/><line x1="1232.5" y1="393.1" x2="1249.1" y2="356.6" stroke-width="1.28" stroke-opacity="0.22"/><line x1="1258.7" y1="402.6" x2="1281.4" y2="363.5" stroke-width="2.03" stroke-opacity="0.16"/><line x1="1233.2" y1="453.3" x2="1245.6" y2="433.8" stroke-width="2.17" stroke-opacity="0.22"/><line x1="1304.2" y1="430.5" x2="1318.4" y2="407.4" stroke-width="1.44" stroke-opacity="0.22"/><line x1="1296.4" y1="463.4" x2="1313.9" y2="437.0" stroke-width="1.47" stroke-opacity="0.25"/><line x1="1285.2" y1="381.2" x2="1298.8" y2="357.2" stroke-width="2.18" stroke-opacity="0.22"/><line x1="1313.0" y1="462.0" x2="1333.4" y2="426.3" stroke-width="1.77" stroke-opacity="0.22"/><line x1="1290.3" y1="449.9" x2="1311.4" y2="405.7" stroke-width="1.94" stroke-opacity="0.15"/><line x1="1248.7" y1="395.6" x2="1264.5" y2="364.0" stroke-width="1.78" stroke-opacity="0.18"/><line x1="1243.0" y1="432.6" x2="1255.1" y2="407.7" stroke-width="1.28" stroke-opacity="0.21"/><line x1="1245.4" y1="409.0" x2="1257.2" y2="391.0" stroke-width="1.91" stroke-opacity="0.20"/><line x1="1279.1" y1="431.5" x2="1295.1" y2="405.3" stroke-width="1.36" stroke-opacity="0.16"/><line x1="1248.4" y1="386.1" x2="1264.3" y2="354.8" stroke-width="1.20" stroke-opacity="0.19"/><line x1="1252.1" y1="399.2" x2="1265.4" y2="372.4" stroke-width="2.03" stroke-opacity="0.15"/><line x1="1283.0" y1="469.7" x2="1307.9" y2="432.5" stroke-width="1.92" stroke-opacity="0.13"/><line x1="1274.6" y1="461.4" x2="1293.5" y2="428.0" stroke-width="1.94" stroke-opacity="0.24"/><line x1="1262.1" y1="462.4" x2="1283.8" y2="419.2" stroke-width="1.44" stroke-opacity="0.19"/><line x1="1321.1" y1="454.0" x2="1337.5" y2="427.4" stroke-width="1.14" stroke-opacity="0.18"/><line x1="1319.8" y1="397.3" x2="1339.3" y2="367.8" stroke-width="2.28" stroke-opacity="0.15"/><line x1="1283.8" y1="380.7" x2="1294.8" y2="361.6" stroke-width="2.17" stroke-opacity="0.22"/><line x1="1272.4" y1="389.4" x2="1290.7" y2="358.2" stroke-width="2.06" stroke-opacity="0.25"/><line x1="1294.7" y1="464.6" x2="1311.8" y2="425.8" stroke-width="1.50" stroke-opacity="0.18"/><line x1="1238.8" y1="384.9" x2="1259.8" y2="346.4" stroke-width="1.37" stroke-opacity="0.20"/><line x1="1255.9" y1="414.9" x2="1273.6" y2="380.3" stroke-width="1.93" stroke-opacity="0.13"/><line x1="1283.5" y1="437.7" x2="1303.4" y2="404.7" stroke-width="1.96" stroke-opacity="0.20"/><line x1="1237.3" y1="463.5" x2="1249.4" y2="443.7" stroke-width="1.19" stroke-opacity="0.16"/><line x1="1306.5" y1="419.4" x2="1322.4" y2="391.8" stroke-width="1.75" stroke-opacity="0.18"/><line x1="1243.6" y1="415.2" x2="1264.6" y2="376.6" stroke-width="1.26" stroke-opacity="0.25"/><line x1="1297.7" y1="462.3" x2="1320.2" y2="424.6" stroke-width="2.28" stroke-opacity="0.17"/><line x1="1285.4" y1="430.0" x2="1294.3" y2="408.0" stroke-width="1.76" stroke-opacity="0.20"/><line x1="1324.7" y1="407.4" x2="1347.7" y2="371.8" stroke-width="1.60" stroke-opacity="0.17"/><line x1="1294.6" y1="426.1" x2="1304.9" y2="403.6" stroke-width="1.32" stroke-opacity="0.23"/><line x1="1248.1" y1="452.0" x2="1272.4" y2="413.4" stroke-width="2.33" stroke-opacity="0.24"/><line x1="1276.1" y1="429.5" x2="1287.3" y2="403.0" stroke-width="1.99" stroke-opacity="0.14"/><line x1="1278.7" y1="409.8" x2="1290.6" y2="389.1" stroke-width="1.86" stroke-opacity="0.14"/><line x1="1320.0" y1="408.6" x2="1336.5" y2="379.4" stroke-width="1.82" stroke-opacity="0.16"/><line x1="1286.6" y1="412.8" x2="1300.0" y2="386.6" stroke-width="1.39" stroke-opacity="0.13"/><line x1="1252.2" y1="446.6" x2="1269.7" y2="418.6" stroke-width="2.00" stroke-opacity="0.14"/><line x1="1317.8" y1="421.7" x2="1331.1" y2="393.9" stroke-width="1.30" stroke-opacity="0.19"/><line x1="1290.7" y1="455.8" x2="1309.0" y2="413.9" stroke-width="1.41" stroke-opacity="0.19"/><line x1="1318.6" y1="386.9" x2="1327.1" y2="366.3" stroke-width="1.12" stroke-opacity="0.19"/><line x1="1288.2" y1="416.5" x2="1308.7" y2="384.8" stroke-width="1.76" stroke-opacity="0.19"/><line x1="1329.9" y1="422.5" x2="1349.1" y2="383.7" stroke-width="2.05" stroke-opacity="0.15"/><line x1="1303.3" y1="406.2" x2="1319.3" y2="376.3" stroke-width="1.71" stroke-opacity="0.17"/><line x1="1296.3" y1="456.3" x2="1317.9" y2="417.8" stroke-width="1.73" stroke-opacity="0.15"/><line x1="1274.6" y1="396.1" x2="1298.8" y2="354.1" stroke-width="2.01" stroke-opacity="0.25"/><line x1="1278.4" y1="412.3" x2="1290.8" y2="388.8" stroke-width="1.55" stroke-opacity="0.13"/><line x1="1234.3" y1="398.6" x2="1255.2" y2="356.3" stroke-width="1.65" stroke-opacity="0.18"/><line x1="1234.6" y1="468.3" x2="1249.7" y2="442.6" stroke-width="2.13" stroke-opacity="0.19"/><line x1="1313.5" y1="403.7" x2="1328.3" y2="370.5" stroke-width="1.54" stroke-opacity="0.21"/><line x1="1295.3" y1="455.2" x2="1311.2" y2="423.4" stroke-width="1.73" stroke-opacity="0.24"/><line x1="1265.3" y1="458.1" x2="1281.4" y2="427.5" stroke-width="1.71" stroke-opacity="0.20"/><line x1="1243.9" y1="394.9" x2="1255.0" y2="375.5" stroke-width="1.32" stroke-opacity="0.15"/><line x1="1266.2" y1="444.6" x2="1276.1" y2="423.2" stroke-width="1.99" stroke-opacity="0.23"/><line x1="1278.2" y1="423.1" x2="1288.8" y2="399.0" stroke-width="1.11" stroke-opacity="0.23"/><line x1="1234.3" y1="431.6" x2="1246.6" y2="410.0" stroke-width="1.80" stroke-opacity="0.13"/></g></g>
<!-- strong streak -->
<g filter="url(#blur2)" fill="#ff0000">
 <path d="M1216 524 L1262 516 L1300 548 L1330 590 L1345 625 L1330 648 L1300 640 L1265 612 L1235 580 L1216 552 Z" opacity="0.75"/>
 <path d="M1240 535 L1318 630" stroke="#ff0000" stroke-width="20" opacity="0.5"/>
</g>
<g filter="url(#blur1)"><g stroke="#ff0000" stroke-linecap="round" fill="none"><line x1="1243.4" y1="554.4" x2="1258.4" y2="572.6" stroke-width="1.79" stroke-opacity="0.20"/><line x1="1241.1" y1="589.0" x2="1265.7" y2="611.4" stroke-width="1.65" stroke-opacity="0.14"/><line x1="1299.6" y1="600.0" x2="1314.9" y2="617.7" stroke-width="2.08" stroke-opacity="0.20"/><line x1="1289.2" y1="548.6" x2="1313.8" y2="570.9" stroke-width="1.51" stroke-opacity="0.22"/><line x1="1267.2" y1="579.3" x2="1285.0" y2="596.3" stroke-width="1.33" stroke-opacity="0.14"/><line x1="1291.6" y1="572.8" x2="1313.1" y2="591.4" stroke-width="1.68" stroke-opacity="0.14"/><line x1="1276.9" y1="537.9" x2="1302.1" y2="563.2" stroke-width="1.69" stroke-opacity="0.14"/><line x1="1247.8" y1="580.3" x2="1271.4" y2="608.2" stroke-width="1.90" stroke-opacity="0.22"/><line x1="1271.3" y1="562.8" x2="1286.0" y2="577.6" stroke-width="2.09" stroke-opacity="0.15"/><line x1="1287.4" y1="563.6" x2="1308.7" y2="587.2" stroke-width="1.96" stroke-opacity="0.22"/><line x1="1245.9" y1="545.0" x2="1267.9" y2="564.7" stroke-width="1.44" stroke-opacity="0.23"/><line x1="1292.6" y1="565.6" x2="1308.7" y2="583.2" stroke-width="1.81" stroke-opacity="0.22"/><line x1="1247.1" y1="535.5" x2="1269.5" y2="559.8" stroke-width="1.54" stroke-opacity="0.16"/><line x1="1249.3" y1="583.9" x2="1265.6" y2="602.9" stroke-width="1.54" stroke-opacity="0.18"/><line x1="1256.5" y1="586.0" x2="1281.8" y2="610.4" stroke-width="1.69" stroke-opacity="0.22"/><line x1="1262.2" y1="576.6" x2="1280.6" y2="593.6" stroke-width="1.97" stroke-opacity="0.17"/><line x1="1284.1" y1="599.1" x2="1306.4" y2="623.8" stroke-width="1.96" stroke-opacity="0.18"/><line x1="1249.7" y1="551.1" x2="1270.2" y2="570.2" stroke-width="1.96" stroke-opacity="0.19"/><line x1="1282.4" y1="547.1" x2="1312.9" y2="571.8" stroke-width="1.26" stroke-opacity="0.14"/><line x1="1295.6" y1="567.7" x2="1311.5" y2="581.8" stroke-width="1.13" stroke-opacity="0.14"/><line x1="1263.1" y1="608.8" x2="1285.8" y2="631.8" stroke-width="1.83" stroke-opacity="0.21"/><line x1="1296.7" y1="596.5" x2="1320.2" y2="619.4" stroke-width="1.91" stroke-opacity="0.15"/><line x1="1288.2" y1="556.5" x2="1302.5" y2="571.4" stroke-width="1.37" stroke-opacity="0.19"/><line x1="1250.2" y1="537.7" x2="1269.4" y2="553.3" stroke-width="2.34" stroke-opacity="0.14"/><line x1="1286.8" y1="561.5" x2="1306.2" y2="581.6" stroke-width="2.01" stroke-opacity="0.19"/><line x1="1244.1" y1="541.8" x2="1261.0" y2="561.1" stroke-width="1.52" stroke-opacity="0.24"/><line x1="1297.8" y1="555.7" x2="1321.9" y2="577.0" stroke-width="1.80" stroke-opacity="0.24"/><line x1="1255.7" y1="565.5" x2="1272.7" y2="579.7" stroke-width="2.27" stroke-opacity="0.16"/><line x1="1288.2" y1="606.8" x2="1312.9" y2="635.0" stroke-width="1.95" stroke-opacity="0.20"/><line x1="1298.0" y1="577.2" x2="1321.6" y2="603.6" stroke-width="1.66" stroke-opacity="0.25"/><line x1="1267.6" y1="579.0" x2="1283.3" y2="592.3" stroke-width="1.88" stroke-opacity="0.13"/><line x1="1299.7" y1="585.8" x2="1317.7" y2="602.5" stroke-width="1.73" stroke-opacity="0.24"/><line x1="1240.6" y1="597.4" x2="1259.7" y2="613.5" stroke-width="2.11" stroke-opacity="0.21"/><line x1="1244.6" y1="604.9" x2="1266.1" y2="625.1" stroke-width="1.42" stroke-opacity="0.24"/><line x1="1296.8" y1="586.2" x2="1323.8" y2="613.2" stroke-width="2.01" stroke-opacity="0.15"/><line x1="1292.4" y1="550.5" x2="1310.2" y2="566.6" stroke-width="1.28" stroke-opacity="0.20"/><line x1="1246.4" y1="604.0" x2="1269.3" y2="628.5" stroke-width="2.04" stroke-opacity="0.20"/><line x1="1272.5" y1="538.2" x2="1292.9" y2="559.7" stroke-width="2.32" stroke-opacity="0.19"/><line x1="1293.8" y1="600.2" x2="1312.7" y2="623.3" stroke-width="1.43" stroke-opacity="0.24"/><line x1="1253.3" y1="578.2" x2="1267.3" y2="594.1" stroke-width="1.76" stroke-opacity="0.18"/><line x1="1270.1" y1="564.5" x2="1295.6" y2="586.7" stroke-width="1.96" stroke-opacity="0.25"/><line x1="1267.6" y1="586.7" x2="1282.8" y2="600.1" stroke-width="1.49" stroke-opacity="0.20"/><line x1="1276.8" y1="554.5" x2="1299.8" y2="575.1" stroke-width="1.85" stroke-opacity="0.18"/><line x1="1262.0" y1="572.4" x2="1278.3" y2="590.2" stroke-width="2.16" stroke-opacity="0.17"/><line x1="1256.8" y1="548.5" x2="1272.5" y2="564.7" stroke-width="1.21" stroke-opacity="0.15"/><line x1="1256.2" y1="552.7" x2="1277.0" y2="572.4" stroke-width="2.29" stroke-opacity="0.14"/><line x1="1249.0" y1="595.4" x2="1265.6" y2="612.1" stroke-width="2.15" stroke-opacity="0.25"/><line x1="1271.0" y1="589.0" x2="1297.3" y2="613.2" stroke-width="1.80" stroke-opacity="0.20"/><line x1="1263.9" y1="586.8" x2="1277.9" y2="602.7" stroke-width="1.87" stroke-opacity="0.18"/><line x1="1267.0" y1="560.1" x2="1286.0" y2="579.6" stroke-width="1.40" stroke-opacity="0.24"/><line x1="1241.2" y1="544.1" x2="1264.9" y2="572.9" stroke-width="1.81" stroke-opacity="0.15"/><line x1="1278.9" y1="548.1" x2="1304.9" y2="572.5" stroke-width="1.69" stroke-opacity="0.21"/><line x1="1284.2" y1="601.7" x2="1304.6" y2="620.4" stroke-width="1.26" stroke-opacity="0.20"/><line x1="1250.1" y1="595.6" x2="1268.4" y2="615.0" stroke-width="2.15" stroke-opacity="0.20"/><line x1="1244.3" y1="547.1" x2="1262.3" y2="563.8" stroke-width="1.42" stroke-opacity="0.16"/><line x1="1278.7" y1="555.3" x2="1297.5" y2="577.3" stroke-width="1.82" stroke-opacity="0.17"/><line x1="1297.9" y1="566.0" x2="1316.3" y2="581.0" stroke-width="1.91" stroke-opacity="0.22"/><line x1="1296.4" y1="587.6" x2="1312.7" y2="601.7" stroke-width="1.16" stroke-opacity="0.14"/><line x1="1292.7" y1="576.1" x2="1307.5" y2="590.3" stroke-width="1.18" stroke-opacity="0.22"/><line x1="1255.7" y1="546.6" x2="1277.2" y2="571.9" stroke-width="1.39" stroke-opacity="0.16"/><line x1="1257.1" y1="582.0" x2="1271.9" y2="599.1" stroke-width="1.92" stroke-opacity="0.13"/><line x1="1291.6" y1="559.4" x2="1310.3" y2="582.2" stroke-width="1.42" stroke-opacity="0.19"/><line x1="1266.7" y1="607.7" x2="1292.3" y2="630.0" stroke-width="1.88" stroke-opacity="0.20"/><line x1="1278.2" y1="577.3" x2="1299.1" y2="599.5" stroke-width="1.52" stroke-opacity="0.16"/><line x1="1272.4" y1="595.4" x2="1293.3" y2="615.2" stroke-width="1.46" stroke-opacity="0.16"/><line x1="1240.0" y1="596.2" x2="1267.0" y2="621.4" stroke-width="1.09" stroke-opacity="0.18"/><line x1="1295.3" y1="606.0" x2="1318.2" y2="624.7" stroke-width="1.45" stroke-opacity="0.18"/><line x1="1253.9" y1="535.5" x2="1273.7" y2="554.6" stroke-width="1.58" stroke-opacity="0.20"/><line x1="1249.8" y1="590.3" x2="1269.9" y2="609.4" stroke-width="1.61" stroke-opacity="0.16"/><line x1="1254.4" y1="592.3" x2="1279.6" y2="621.0" stroke-width="1.44" stroke-opacity="0.21"/><line x1="1284.6" y1="595.7" x2="1303.0" y2="617.1" stroke-width="1.44" stroke-opacity="0.15"/><line x1="1278.2" y1="581.3" x2="1295.7" y2="599.8" stroke-width="1.10" stroke-opacity="0.15"/><line x1="1243.0" y1="575.1" x2="1261.1" y2="590.4" stroke-width="1.98" stroke-opacity="0.16"/><line x1="1283.6" y1="552.5" x2="1299.9" y2="568.7" stroke-width="1.47" stroke-opacity="0.17"/><line x1="1288.0" y1="609.8" x2="1307.4" y2="631.8" stroke-width="2.14" stroke-opacity="0.17"/><line x1="1297.1" y1="539.2" x2="1324.4" y2="562.0" stroke-width="1.32" stroke-opacity="0.18"/><line x1="1290.5" y1="596.3" x2="1318.3" y2="620.0" stroke-width="1.39" stroke-opacity="0.22"/><line x1="1286.3" y1="568.2" x2="1313.1" y2="590.3" stroke-width="2.05" stroke-opacity="0.18"/><line x1="1271.3" y1="608.7" x2="1291.3" y2="630.3" stroke-width="1.49" stroke-opacity="0.16"/><line x1="1277.7" y1="538.2" x2="1305.0" y2="565.7" stroke-width="1.88" stroke-opacity="0.16"/><line x1="1251.9" y1="601.6" x2="1279.8" y2="626.3" stroke-width="1.88" stroke-opacity="0.14"/><line x1="1259.5" y1="547.6" x2="1278.9" y2="564.1" stroke-width="1.09" stroke-opacity="0.22"/><line x1="1242.5" y1="593.8" x2="1263.0" y2="615.0" stroke-width="1.19" stroke-opacity="0.17"/><line x1="1249.5" y1="541.9" x2="1270.2" y2="566.7" stroke-width="1.87" stroke-opacity="0.25"/><line x1="1243.6" y1="583.3" x2="1266.1" y2="608.8" stroke-width="1.37" stroke-opacity="0.14"/><line x1="1298.9" y1="594.1" x2="1322.1" y2="620.5" stroke-width="1.32" stroke-opacity="0.18"/><line x1="1281.4" y1="561.9" x2="1296.0" y2="579.2" stroke-width="1.63" stroke-opacity="0.19"/><line x1="1257.7" y1="587.3" x2="1275.6" y2="603.0" stroke-width="2.00" stroke-opacity="0.17"/><line x1="1256.5" y1="597.4" x2="1283.3" y2="624.7" stroke-width="1.28" stroke-opacity="0.13"/><line x1="1257.7" y1="554.8" x2="1279.0" y2="572.0" stroke-width="1.56" stroke-opacity="0.20"/><line x1="1251.1" y1="536.4" x2="1275.8" y2="564.1" stroke-width="1.99" stroke-opacity="0.15"/><line x1="1279.5" y1="575.4" x2="1299.0" y2="595.1" stroke-width="1.77" stroke-opacity="0.19"/><line x1="1276.8" y1="559.2" x2="1301.8" y2="580.4" stroke-width="1.16" stroke-opacity="0.19"/><line x1="1290.1" y1="544.7" x2="1318.2" y2="569.5" stroke-width="1.20" stroke-opacity="0.19"/><line x1="1274.3" y1="597.7" x2="1297.6" y2="621.3" stroke-width="1.40" stroke-opacity="0.21"/><line x1="1262.0" y1="580.4" x2="1275.7" y2="596.9" stroke-width="1.70" stroke-opacity="0.15"/><line x1="1293.4" y1="541.0" x2="1321.1" y2="564.0" stroke-width="2.26" stroke-opacity="0.19"/><line x1="1265.0" y1="562.7" x2="1287.4" y2="588.4" stroke-width="1.13" stroke-opacity="0.16"/><line x1="1244.2" y1="557.8" x2="1268.9" y2="587.8" stroke-width="1.99" stroke-opacity="0.14"/><line x1="1271.9" y1="549.2" x2="1294.6" y2="569.6" stroke-width="1.31" stroke-opacity="0.20"/></g><g stroke="#ff0000" stroke-linecap="round" fill="none"><line x1="1305.0" y1="571.9" x2="1333.0" y2="568.8" stroke-width="1.66" stroke-opacity="0.20"/><line x1="1301.6" y1="594.4" x2="1331.0" y2="588.2" stroke-width="1.51" stroke-opacity="0.21"/><line x1="1281.3" y1="599.9" x2="1319.1" y2="593.4" stroke-width="2.33" stroke-opacity="0.20"/><line x1="1288.0" y1="569.8" x2="1335.3" y2="562.5" stroke-width="1.85" stroke-opacity="0.26"/><line x1="1297.5" y1="562.3" x2="1345.4" y2="559.9" stroke-width="2.29" stroke-opacity="0.19"/><line x1="1292.9" y1="571.1" x2="1339.7" y2="569.3" stroke-width="1.73" stroke-opacity="0.24"/><line x1="1314.7" y1="566.5" x2="1348.1" y2="559.8" stroke-width="1.11" stroke-opacity="0.28"/><line x1="1307.9" y1="585.1" x2="1340.9" y2="580.8" stroke-width="2.25" stroke-opacity="0.23"/><line x1="1281.2" y1="553.8" x2="1316.0" y2="546.2" stroke-width="1.81" stroke-opacity="0.21"/><line x1="1284.3" y1="590.9" x2="1311.7" y2="586.5" stroke-width="2.01" stroke-opacity="0.29"/><line x1="1303.9" y1="590.1" x2="1334.1" y2="587.9" stroke-width="1.81" stroke-opacity="0.25"/><line x1="1311.3" y1="580.6" x2="1345.2" y2="577.5" stroke-width="1.18" stroke-opacity="0.24"/><line x1="1277.2" y1="589.0" x2="1312.6" y2="586.4" stroke-width="2.17" stroke-opacity="0.21"/><line x1="1309.8" y1="562.9" x2="1354.1" y2="557.6" stroke-width="2.06" stroke-opacity="0.15"/><line x1="1290.3" y1="566.6" x2="1316.3" y2="563.2" stroke-width="1.71" stroke-opacity="0.17"/><line x1="1283.8" y1="554.4" x2="1330.2" y2="546.8" stroke-width="1.83" stroke-opacity="0.22"/><line x1="1295.2" y1="562.7" x2="1328.4" y2="557.2" stroke-width="1.18" stroke-opacity="0.17"/><line x1="1297.9" y1="554.4" x2="1333.9" y2="546.1" stroke-width="2.06" stroke-opacity="0.23"/><line x1="1280.2" y1="558.5" x2="1321.6" y2="552.6" stroke-width="1.33" stroke-opacity="0.25"/><line x1="1299.6" y1="587.3" x2="1331.2" y2="579.9" stroke-width="1.49" stroke-opacity="0.27"/><line x1="1312.0" y1="556.3" x2="1356.6" y2="549.3" stroke-width="1.48" stroke-opacity="0.20"/><line x1="1298.8" y1="553.2" x2="1332.9" y2="551.9" stroke-width="2.33" stroke-opacity="0.24"/><line x1="1292.7" y1="559.0" x2="1319.0" y2="557.1" stroke-width="1.55" stroke-opacity="0.18"/><line x1="1305.3" y1="592.9" x2="1332.9" y2="586.4" stroke-width="2.25" stroke-opacity="0.29"/><line x1="1309.8" y1="591.4" x2="1335.0" y2="588.9" stroke-width="1.65" stroke-opacity="0.17"/><line x1="1275.9" y1="562.0" x2="1316.2" y2="553.8" stroke-width="1.41" stroke-opacity="0.23"/><line x1="1294.3" y1="587.0" x2="1323.4" y2="584.2" stroke-width="1.81" stroke-opacity="0.15"/><line x1="1301.5" y1="554.1" x2="1331.1" y2="548.6" stroke-width="1.86" stroke-opacity="0.27"/><line x1="1277.1" y1="583.4" x2="1302.0" y2="579.3" stroke-width="2.15" stroke-opacity="0.19"/><line x1="1301.4" y1="593.5" x2="1326.9" y2="591.9" stroke-width="1.37" stroke-opacity="0.25"/><line x1="1290.2" y1="598.9" x2="1317.8" y2="593.9" stroke-width="1.75" stroke-opacity="0.28"/><line x1="1282.5" y1="576.0" x2="1321.1" y2="574.1" stroke-width="1.39" stroke-opacity="0.15"/><line x1="1296.2" y1="568.0" x2="1332.2" y2="560.3" stroke-width="1.52" stroke-opacity="0.20"/><line x1="1300.0" y1="563.3" x2="1353.8" y2="555.8" stroke-width="1.87" stroke-opacity="0.27"/><line x1="1310.1" y1="594.7" x2="1358.2" y2="583.1" stroke-width="1.43" stroke-opacity="0.23"/><line x1="1281.1" y1="595.1" x2="1324.6" y2="585.0" stroke-width="2.29" stroke-opacity="0.21"/><line x1="1299.5" y1="582.0" x2="1330.7" y2="575.9" stroke-width="2.30" stroke-opacity="0.17"/><line x1="1311.4" y1="567.8" x2="1351.8" y2="559.6" stroke-width="1.76" stroke-opacity="0.17"/><line x1="1307.0" y1="593.4" x2="1341.1" y2="590.1" stroke-width="1.25" stroke-opacity="0.23"/><line x1="1314.8" y1="598.8" x2="1344.1" y2="597.4" stroke-width="1.48" stroke-opacity="0.29"/><line x1="1297.3" y1="597.5" x2="1325.4" y2="592.5" stroke-width="2.00" stroke-opacity="0.28"/><line x1="1305.6" y1="594.2" x2="1342.6" y2="588.4" stroke-width="2.26" stroke-opacity="0.22"/><line x1="1310.8" y1="596.8" x2="1343.9" y2="594.1" stroke-width="1.31" stroke-opacity="0.17"/><line x1="1305.5" y1="581.4" x2="1338.2" y2="577.2" stroke-width="1.37" stroke-opacity="0.18"/><line x1="1302.5" y1="569.2" x2="1347.7" y2="562.7" stroke-width="1.84" stroke-opacity="0.23"/><line x1="1303.5" y1="570.0" x2="1353.5" y2="562.8" stroke-width="1.32" stroke-opacity="0.17"/><line x1="1276.3" y1="588.7" x2="1301.3" y2="583.9" stroke-width="2.02" stroke-opacity="0.21"/><line x1="1314.5" y1="588.4" x2="1341.5" y2="587.0" stroke-width="2.17" stroke-opacity="0.30"/><line x1="1294.6" y1="567.6" x2="1332.6" y2="560.2" stroke-width="1.13" stroke-opacity="0.21"/><line x1="1304.4" y1="570.3" x2="1338.6" y2="566.3" stroke-width="1.83" stroke-opacity="0.26"/><line x1="1296.0" y1="594.0" x2="1344.2" y2="587.5" stroke-width="2.12" stroke-opacity="0.22"/><line x1="1276.7" y1="599.8" x2="1316.7" y2="593.3" stroke-width="1.78" stroke-opacity="0.26"/><line x1="1295.6" y1="582.3" x2="1321.7" y2="577.4" stroke-width="1.46" stroke-opacity="0.21"/><line x1="1308.1" y1="574.1" x2="1345.5" y2="569.8" stroke-width="1.73" stroke-opacity="0.16"/><line x1="1280.7" y1="591.8" x2="1319.1" y2="588.3" stroke-width="2.06" stroke-opacity="0.17"/><line x1="1312.5" y1="585.4" x2="1341.2" y2="580.8" stroke-width="1.31" stroke-opacity="0.22"/><line x1="1298.6" y1="586.2" x2="1329.3" y2="581.6" stroke-width="1.95" stroke-opacity="0.19"/><line x1="1311.3" y1="590.2" x2="1356.7" y2="580.1" stroke-width="1.65" stroke-opacity="0.17"/><line x1="1289.5" y1="577.1" x2="1325.9" y2="574.3" stroke-width="2.28" stroke-opacity="0.23"/><line x1="1290.1" y1="570.3" x2="1338.1" y2="567.7" stroke-width="1.91" stroke-opacity="0.23"/><line x1="1281.0" y1="593.7" x2="1311.2" y2="590.8" stroke-width="1.47" stroke-opacity="0.21"/><line x1="1305.7" y1="573.4" x2="1348.5" y2="563.9" stroke-width="1.34" stroke-opacity="0.17"/><line x1="1299.9" y1="564.1" x2="1338.6" y2="561.6" stroke-width="1.09" stroke-opacity="0.23"/><line x1="1310.3" y1="563.4" x2="1352.5" y2="557.3" stroke-width="1.18" stroke-opacity="0.21"/><line x1="1299.0" y1="563.7" x2="1340.2" y2="559.0" stroke-width="2.12" stroke-opacity="0.23"/><line x1="1277.0" y1="559.1" x2="1320.3" y2="548.7" stroke-width="1.92" stroke-opacity="0.28"/><line x1="1308.5" y1="566.3" x2="1359.7" y2="554.1" stroke-width="1.30" stroke-opacity="0.21"/><line x1="1301.9" y1="581.3" x2="1347.3" y2="575.9" stroke-width="1.30" stroke-opacity="0.27"/><line x1="1293.2" y1="579.8" x2="1344.8" y2="568.0" stroke-width="1.54" stroke-opacity="0.19"/><line x1="1290.2" y1="555.2" x2="1327.7" y2="550.4" stroke-width="1.25" stroke-opacity="0.19"/><line x1="1302.8" y1="565.2" x2="1343.2" y2="559.7" stroke-width="1.85" stroke-opacity="0.25"/><line x1="1279.4" y1="587.0" x2="1323.2" y2="585.4" stroke-width="1.95" stroke-opacity="0.22"/><line x1="1312.4" y1="599.3" x2="1345.7" y2="595.4" stroke-width="1.74" stroke-opacity="0.20"/><line x1="1314.8" y1="569.0" x2="1343.5" y2="565.3" stroke-width="1.88" stroke-opacity="0.23"/><line x1="1294.7" y1="560.6" x2="1337.8" y2="556.5" stroke-width="1.08" stroke-opacity="0.30"/><line x1="1276.0" y1="582.0" x2="1304.4" y2="580.1" stroke-width="2.34" stroke-opacity="0.27"/><line x1="1291.6" y1="568.0" x2="1333.1" y2="563.4" stroke-width="1.33" stroke-opacity="0.15"/><line x1="1286.3" y1="589.9" x2="1320.2" y2="585.2" stroke-width="1.09" stroke-opacity="0.20"/><line x1="1302.4" y1="568.4" x2="1348.9" y2="563.0" stroke-width="1.30" stroke-opacity="0.15"/><line x1="1288.2" y1="568.2" x2="1333.3" y2="565.9" stroke-width="1.89" stroke-opacity="0.27"/><line x1="1294.3" y1="582.1" x2="1345.6" y2="575.3" stroke-width="2.07" stroke-opacity="0.20"/><line x1="1291.6" y1="587.6" x2="1340.8" y2="578.6" stroke-width="1.48" stroke-opacity="0.26"/><line x1="1296.4" y1="562.0" x2="1341.9" y2="558.5" stroke-width="1.53" stroke-opacity="0.28"/><line x1="1313.8" y1="565.5" x2="1339.7" y2="564.5" stroke-width="2.14" stroke-opacity="0.24"/><line x1="1297.8" y1="570.7" x2="1340.6" y2="568.0" stroke-width="1.97" stroke-opacity="0.26"/><line x1="1287.6" y1="553.5" x2="1324.6" y2="548.3" stroke-width="1.65" stroke-opacity="0.19"/><line x1="1313.0" y1="562.4" x2="1346.3" y2="554.9" stroke-width="2.06" stroke-opacity="0.27"/><line x1="1311.5" y1="573.3" x2="1337.0" y2="569.6" stroke-width="1.32" stroke-opacity="0.23"/><line x1="1311.9" y1="587.2" x2="1352.5" y2="583.8" stroke-width="2.18" stroke-opacity="0.17"/><line x1="1307.9" y1="597.0" x2="1352.1" y2="587.3" stroke-width="1.66" stroke-opacity="0.26"/><line x1="1303.5" y1="577.1" x2="1328.6" y2="575.8" stroke-width="1.83" stroke-opacity="0.25"/><line x1="1278.5" y1="574.4" x2="1304.6" y2="570.9" stroke-width="1.47" stroke-opacity="0.25"/><line x1="1298.1" y1="567.0" x2="1349.1" y2="557.9" stroke-width="1.43" stroke-opacity="0.18"/><line x1="1287.8" y1="573.2" x2="1315.7" y2="567.1" stroke-width="1.10" stroke-opacity="0.19"/><line x1="1299.9" y1="576.7" x2="1330.7" y2="571.4" stroke-width="1.26" stroke-opacity="0.20"/><line x1="1303.2" y1="565.6" x2="1334.7" y2="558.2" stroke-width="1.51" stroke-opacity="0.24"/><line x1="1292.7" y1="558.2" x2="1331.7" y2="554.2" stroke-width="1.15" stroke-opacity="0.17"/><line x1="1292.1" y1="560.6" x2="1334.6" y2="555.4" stroke-width="1.96" stroke-opacity="0.28"/><line x1="1299.7" y1="567.0" x2="1349.0" y2="562.3" stroke-width="1.75" stroke-opacity="0.25"/><line x1="1313.9" y1="588.3" x2="1352.0" y2="579.9" stroke-width="2.24" stroke-opacity="0.27"/><line x1="1293.7" y1="573.9" x2="1339.1" y2="569.5" stroke-width="1.37" stroke-opacity="0.22"/><line x1="1284.0" y1="593.3" x2="1327.4" y2="591.0" stroke-width="1.96" stroke-opacity="0.21"/><line x1="1301.6" y1="589.9" x2="1352.5" y2="582.2" stroke-width="1.68" stroke-opacity="0.15"/><line x1="1289.1" y1="574.1" x2="1319.1" y2="571.6" stroke-width="1.24" stroke-opacity="0.24"/><line x1="1279.1" y1="591.2" x2="1327.3" y2="582.7" stroke-width="2.08" stroke-opacity="0.25"/><line x1="1296.3" y1="571.2" x2="1333.5" y2="567.0" stroke-width="2.31" stroke-opacity="0.23"/><line x1="1290.4" y1="568.4" x2="1339.4" y2="562.4" stroke-width="1.63" stroke-opacity="0.27"/><line x1="1306.5" y1="578.1" x2="1338.4" y2="574.8" stroke-width="2.25" stroke-opacity="0.16"/><line x1="1298.0" y1="575.4" x2="1340.3" y2="569.1" stroke-width="2.12" stroke-opacity="0.23"/><line x1="1282.0" y1="597.9" x2="1308.5" y2="591.9" stroke-width="2.05" stroke-opacity="0.27"/></g></g></svg>
<svg style="left:0;top:0" width="1400" height="1400"><circle cx="1127.5" cy="609" r="42" fill="none" stroke="#111" stroke-width="1"/></svg>
<svg style="left:0;top:0" width="1400" height="1400" viewBox="0 0 1400 1400"><defs><filter id="blur1b" x="-5%" y="-5%" width="110%" height="110%"><feGaussianBlur in="SourceGraphic" stdDeviation="1" result="b"/><feTurbulence type="fractalNoise" baseFrequency="0.9" numOctaves="1" seed="5" result="n"/><feColorMatrix in="n" type="matrix" values="0 0 0 0 0  0 0 0 0 0  0 0 0 0 0  0 0 0 -3.5 2.7" result="na"/><feComposite in="b" in2="na" operator="in"/></filter><filter id="blurS"><feGaussianBlur stdDeviation="0.9"/></filter></defs><g fill="#ff0000" filter="url(#blur1b)"><circle cx="1106.9" cy="800.4" r="3.7" opacity="0.37"/><circle cx="1120.2" cy="799.9" r="3.7" opacity="0.37"/><circle cx="1133.4" cy="800.9" r="3.7" opacity="0.37"/><circle cx="1146.0" cy="800.6" r="3.7" opacity="0.37"/><circle cx="1157.4" cy="800.0" r="4.0" opacity="0.60"/><circle cx="1208.4" cy="800.5" r="4.0" opacity="0.60"/><circle cx="1284.6" cy="800.2" r="3.7" opacity="0.37"/><circle cx="1297.8" cy="800.5" r="3.7" opacity="0.37"/><circle cx="1310.1" cy="800.6" r="3.7" opacity="0.37"/><circle cx="1323.9" cy="800.2" r="3.7" opacity="0.37"/><circle cx="1336.4" cy="800.8" r="3.7" opacity="0.37"/><circle cx="1106.7" cy="815.1" r="3.5" opacity="0.26"/><circle cx="1119.9" cy="814.7" r="3.5" opacity="0.26"/><circle cx="1132.9" cy="814.8" r="3.5" opacity="0.26"/><circle cx="1145.6" cy="815.1" r="3.7" opacity="0.37"/><circle cx="1158.0" cy="814.5" r="4.0" opacity="0.60"/><circle cx="1170.9" cy="815.4" r="4.0" opacity="0.60"/><circle cx="1183.9" cy="814.5" r="4.0" opacity="0.60"/><circle cx="1196.6" cy="815.1" r="4.0" opacity="0.60"/><circle cx="1208.2" cy="814.4" r="4.0" opacity="0.60"/><circle cx="1220.9" cy="815.2" r="4.0" opacity="0.60"/><circle cx="1234.4" cy="814.8" r="4.0" opacity="0.60"/><circle cx="1297.6" cy="814.9" r="4.0" opacity="0.60"/><circle cx="1310.7" cy="814.8" r="3.9" opacity="0.48"/><circle cx="1323.3" cy="814.5" r="3.7" opacity="0.37"/><circle cx="1336.1" cy="815.0" r="3.5" opacity="0.26"/><circle cx="1349.4" cy="814.6" r="3.5" opacity="0.26"/><circle cx="1361.0" cy="814.8" r="3.4" opacity="0.16"/><circle cx="1107.1" cy="828.1" r="3.4" opacity="0.16"/><circle cx="1120.6" cy="828.4" r="3.5" opacity="0.26"/><circle cx="1133.2" cy="827.8" r="3.5" opacity="0.26"/><circle cx="1145.5" cy="828.5" r="3.7" opacity="0.37"/><circle cx="1157.6" cy="828.6" r="4.0" opacity="0.60"/><circle cx="1171.6" cy="828.9" r="4.0" opacity="0.60"/><circle cx="1323.2" cy="827.7" r="3.9" opacity="0.48"/><circle cx="1336.5" cy="828.6" r="3.7" opacity="0.37"/><circle cx="1349.3" cy="828.4" r="3.9" opacity="0.48"/><circle cx="1360.5" cy="828.3" r="3.9" opacity="0.48"/><circle cx="1106.6" cy="841.9" r="3.4" opacity="0.16"/><circle cx="1120.6" cy="842.8" r="3.5" opacity="0.26"/><circle cx="1133.1" cy="842.1" r="3.7" opacity="0.37"/><circle cx="1145.0" cy="842.4" r="3.7" opacity="0.37"/><circle cx="1158.4" cy="842.1" r="4.0" opacity="0.60"/><circle cx="1170.6" cy="842.1" r="4.0" opacity="0.60"/><circle cx="1183.9" cy="841.8" r="4.0" opacity="0.60"/><circle cx="1195.5" cy="842.0" r="4.0" opacity="0.60"/><circle cx="1208.7" cy="842.0" r="3.9" opacity="0.48"/><circle cx="1221.4" cy="842.8" r="4.0" opacity="0.60"/><circle cx="1234.1" cy="842.6" r="4.0" opacity="0.60"/><circle cx="1247.0" cy="842.8" r="3.9" opacity="0.48"/><circle cx="1260.0" cy="842.2" r="4.0" opacity="0.60"/><circle cx="1348.8" cy="842.6" r="4.0" opacity="0.60"/><circle cx="1361.3" cy="841.9" r="3.7" opacity="0.37"/><circle cx="1106.6" cy="857.3" r="3.2" opacity="0.07"/><circle cx="1119.8" cy="857.7" r="3.2" opacity="0.07"/><circle cx="1133.3" cy="857.4" r="3.4" opacity="0.16"/><circle cx="1145.4" cy="857.6" r="3.5" opacity="0.26"/><circle cx="1158.0" cy="857.0" r="3.7" opacity="0.37"/><circle cx="1171.4" cy="856.8" r="3.9" opacity="0.48"/><circle cx="1184.0" cy="857.3" r="4.0" opacity="0.60"/><circle cx="1196.2" cy="858.0" r="3.9" opacity="0.48"/><circle cx="1208.8" cy="856.8" r="3.7" opacity="0.37"/><circle cx="1222.0" cy="857.6" r="3.7" opacity="0.37"/><circle cx="1234.9" cy="857.3" r="3.9" opacity="0.48"/><circle cx="1247.5" cy="857.8" r="4.0" opacity="0.60"/><circle cx="1259.4" cy="857.1" r="3.9" opacity="0.48"/><circle cx="1271.8" cy="857.6" r="4.0" opacity="0.60"/><circle cx="1335.6" cy="857.5" r="4.0" opacity="0.60"/><circle cx="1349.2" cy="857.8" r="3.9" opacity="0.48"/><circle cx="1360.4" cy="856.9" r="3.7" opacity="0.37"/><circle cx="1119.5" cy="873.1" r="3.2" opacity="0.07"/><circle cx="1132.7" cy="872.9" r="3.4" opacity="0.16"/><circle cx="1145.1" cy="872.6" r="3.5" opacity="0.26"/><circle cx="1157.5" cy="873.7" r="3.7" opacity="0.37"/><circle cx="1171.2" cy="873.6" r="3.7" opacity="0.37"/><circle cx="1184.0" cy="873.4" r="3.9" opacity="0.48"/><circle cx="1196.2" cy="872.7" r="3.7" opacity="0.37"/><circle cx="1209.0" cy="872.8" r="3.7" opacity="0.37"/><circle cx="1221.7" cy="873.7" r="3.7" opacity="0.37"/><circle cx="1234.5" cy="873.8" r="3.9" opacity="0.48"/><circle cx="1247.5" cy="873.4" r="3.9" opacity="0.48"/><circle cx="1259.3" cy="873.2" r="3.9" opacity="0.48"/><circle cx="1272.8" cy="873.4" r="3.9" opacity="0.48"/><circle cx="1323.1" cy="872.7" r="3.4" opacity="0.16"/><circle cx="1145.8" cy="888.4" r="3.5" opacity="0.26"/><circle cx="1157.8" cy="888.0" r="3.7" opacity="0.37"/><circle cx="1171.5" cy="888.2" r="3.7" opacity="0.37"/><circle cx="1183.4" cy="888.5" r="3.5" opacity="0.26"/><circle cx="1196.5" cy="888.6" r="3.7" opacity="0.37"/><circle cx="1208.2" cy="888.5" r="3.7" opacity="0.37"/><circle cx="1221.1" cy="888.8" r="3.7" opacity="0.37"/><circle cx="1234.1" cy="888.7" r="3.7" opacity="0.37"/><circle cx="1247.5" cy="888.8" r="3.7" opacity="0.37"/><circle cx="1259.1" cy="888.0" r="3.7" opacity="0.37"/><circle cx="1272.4" cy="888.2" r="3.7" opacity="0.37"/><circle cx="1284.9" cy="889.0" r="3.7" opacity="0.37"/><circle cx="1297.6" cy="888.7" r="3.9" opacity="0.48"/><circle cx="1311.1" cy="888.7" r="3.9" opacity="0.48"/><circle cx="1145.2" cy="902.2" r="3.4" opacity="0.16"/><circle cx="1158.5" cy="902.1" r="3.5" opacity="0.26"/><circle cx="1171.0" cy="902.5" r="3.5" opacity="0.26"/><circle cx="1183.5" cy="901.9" r="3.7" opacity="0.37"/><circle cx="1196.4" cy="902.3" r="3.5" opacity="0.26"/><circle cx="1208.9" cy="902.0" r="3.7" opacity="0.37"/><circle cx="1220.9" cy="902.5" r="3.5" opacity="0.26"/><circle cx="1234.8" cy="902.0" r="3.4" opacity="0.16"/><circle cx="1247.1" cy="902.5" r="3.4" opacity="0.16"/><circle cx="1259.4" cy="902.2" r="3.4" opacity="0.16"/><circle cx="1272.2" cy="902.2" r="3.4" opacity="0.16"/><circle cx="1285.6" cy="901.5" r="3.4" opacity="0.16"/><circle cx="1298.0" cy="902.6" r="3.4" opacity="0.16"/></g><g fill="#ff0000" filter="url(#blurS)"><circle cx="1170.6" cy="800.4" r="4.2" opacity="0.72"/><circle cx="1183.4" cy="800.5" r="4.2" opacity="0.72"/><circle cx="1195.6" cy="800.6" r="4.2" opacity="0.72"/><circle cx="1222.0" cy="800.2" r="4.2" opacity="0.72"/><circle cx="1234.9" cy="800.3" r="4.2" opacity="0.72"/><circle cx="1247.6" cy="800.2" r="4.4" opacity="0.85"/><circle cx="1259.1" cy="799.8" r="4.4" opacity="0.85"/><circle cx="1272.9" cy="800.3" r="4.4" opacity="0.85"/><circle cx="1247.6" cy="814.4" r="4.2" opacity="0.72"/><circle cx="1259.8" cy="814.8" r="4.4" opacity="0.85"/><circle cx="1272.2" cy="815.2" r="4.4" opacity="0.85"/><circle cx="1285.1" cy="814.8" r="4.2" opacity="0.72"/><circle cx="1183.8" cy="828.3" r="4.2" opacity="0.72"/><circle cx="1195.5" cy="828.8" r="4.2" opacity="0.72"/><circle cx="1208.1" cy="828.3" r="4.2" opacity="0.72"/><circle cx="1221.8" cy="828.9" r="4.2" opacity="0.72"/><circle cx="1233.9" cy="828.5" r="4.2" opacity="0.72"/><circle cx="1247.4" cy="828.1" r="4.4" opacity="0.85"/><circle cx="1259.1" cy="828.1" r="4.4" opacity="0.85"/><circle cx="1272.6" cy="828.3" r="4.6" opacity="0.97"/><circle cx="1285.0" cy="828.3" r="4.6" opacity="0.97"/><circle cx="1298.3" cy="828.2" r="4.8" opacity="1.00"/><circle cx="1311.2" cy="828.7" r="4.4" opacity="0.85"/><circle cx="1271.8" cy="842.0" r="4.4" opacity="0.85"/><circle cx="1285.5" cy="842.0" r="4.6" opacity="0.97"/><circle cx="1298.0" cy="843.0" r="4.8" opacity="1.00"/><circle cx="1310.9" cy="842.1" r="4.8" opacity="1.00"/><circle cx="1323.4" cy="842.6" r="4.4" opacity="0.85"/><circle cx="1335.7" cy="842.7" r="4.2" opacity="0.72"/><circle cx="1284.9" cy="857.7" r="4.4" opacity="0.85"/><circle cx="1298.3" cy="857.7" r="4.8" opacity="1.00"/><circle cx="1310.7" cy="857.0" r="4.8" opacity="1.00"/><circle cx="1323.3" cy="857.6" r="4.4" opacity="0.85"/><circle cx="1285.5" cy="872.9" r="4.2" opacity="0.72"/><circle cx="1297.9" cy="873.7" r="4.4" opacity="0.85"/><circle cx="1310.9" cy="873.0" r="4.4" opacity="0.85"/></g><circle cx="1139" cy="865.4" r="42" fill="none" stroke="#111" stroke-width="1"/><path d="M1118.3 844.8 L1159.7 886 M1159.7 844.8 L1118.3 886" stroke="#111" stroke-width="1"/></svg>
<svg style="left:0;top:0" width="1400" height="1400"><path d="M311.5 73.5 L1074 789" stroke="#ff0000" stroke-width="5.2" stroke-linecap="butt"/><path d="M1086 800 L1072.4 776 L1070 785 L1061.6 787.3 Z" fill="#ff0000"/></svg>
<div class="a" style="left:307px;top:87px;width:115px;height:23px;background:#ffffe1;border:1px solid #000;box-shadow:2px 2px 3px rgba(0,0,0,0.35)"></div>
<div class="t" style="left:311.5px;top:92.78px;font-size:12.9px;color:#1a0a14;">Edit brush settings</div>
<svg style="left:304px;top:71px;" width="14" height="22" viewBox="0 0 14 22"><path d="M1.5 1.5 V17.5 L5.3 13.8 L8.3 20.5 L11 19.3 L8.2 12.7 H13.3 Z" fill="#fff" stroke="#000" stroke-width="1.2" stroke-linejoin="miter"/></svg>
<div class="a" style="left:0px;top:1368px;width:1400px;height:32px;background:#474747"></div>
<svg style="left:7px;top:1376px;" width="16" height="16" viewBox="0 0 16 16"><rect x="0.5" y="0.5" width="15" height="15" fill="none" stroke="#cfcfcf" stroke-width="1"/><circle cx="8" cy="8" r="4.5" fill="none" stroke="#cfcfcf" stroke-width="1" stroke-dasharray="1.2 1.2"/></svg>
<div class="t" style="left:37px;top:1378.74px;font-size:13.3px;color:#d8d8d8;">v) Clone Tool</div>
<div class="t" style="left:739px;top:1379.08px;font-size:12.9px;color:#d8d8d8;">RGB/Alpha (8-bit integer/channel)&nbsp; sRGB-elle-V2-srgbtrc.icc</div>
<div class="a" style="left:332px;top:1354px;width:1068px;height:14px;background:#3e3e3e;border-top:1px solid #2b2b2b"></div>
<div class="a" style="left:332px;top:1355px;width:20px;height:13px;background:#454545"></div>
<div class="a" style="left:352px;top:1355px;width:13px;height:13px;background:#424242;border:1px solid #565656"></div>
<svg style="left:356px;top:1357px;" width="6" height="9" viewBox="0 0 6 9"><path d="M6 0 V9 L0 4.5 Z" fill="#bdbdbd"/></svg>
<div class="a" style="left:851px;top:1355px;width:549px;height:13px;background:#414141;border:1px solid #5a5a5a;border-right:none"></div>
</body></html>
